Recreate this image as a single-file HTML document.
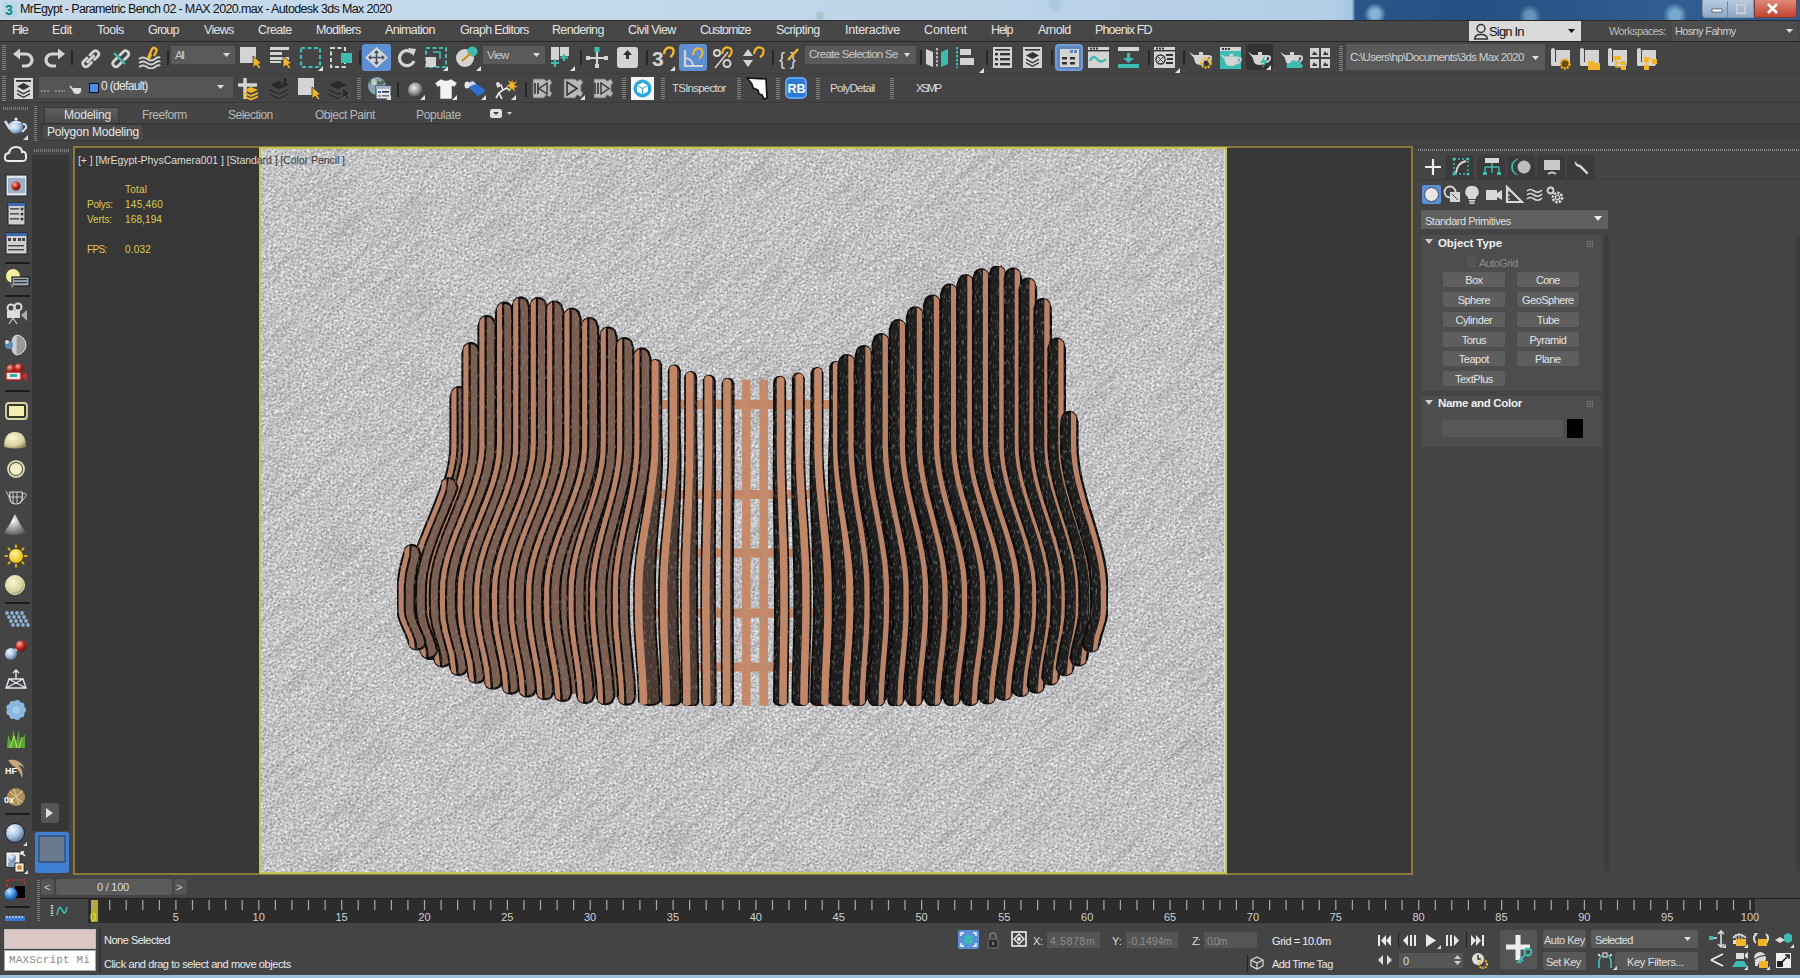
<!DOCTYPE html><html><head><meta charset="utf-8"><style>
html,body{margin:0;padding:0;width:1800px;height:978px;overflow:hidden;background:#444;}
body>div,body>svg{position:absolute;}
</style></head><body>
<div style="left:0;top:0;width:1800px;height:20px;background:linear-gradient(90deg,#c6daeb 0%,#c4d9eb 30%,#bdd4e9 55%,#b2cde6 74%,#a8c6e3 75.1%,#2a5588 75.3%,#255083 82%,#2f5d92 92%,#2e5a8c 100%)"></div>
<div style="left:1364px;top:3px;width:22px;height:22px;border-radius:50%;background:radial-gradient(closest-side,rgba(150,195,225,.85) 0%,rgba(150,195,225,.85) 40%,transparent 100%);clip-path:inset(0 0 5px 0)"></div>
<div style="left:1519px;top:5px;width:22px;height:22px;border-radius:50%;background:radial-gradient(closest-side,rgba(140,190,220,.6) 0%,rgba(140,190,220,.6) 40%,transparent 100%);clip-path:inset(0 0 7px 0)"></div>
<div style="left:1663px;top:3px;width:24px;height:24px;border-radius:50%;background:radial-gradient(closest-side,rgba(140,195,225,.75) 0%,rgba(140,195,225,.75) 40%,transparent 100%);clip-path:inset(0 0 7px 0)"></div>
<div style="left:1046px;top:-5px;width:18px;height:18px;border-radius:50%;background:radial-gradient(closest-side,rgba(120,160,200,.25) 0%,rgba(120,160,200,.25) 40%,transparent 100%);clip-path:inset(0 0 0px 0)"></div>
<div style="left:814px;top:10px;width:12px;height:12px;border-radius:50%;background:radial-gradient(closest-side,rgba(90,140,90,.25) 0%,rgba(90,140,90,.25) 40%,transparent 100%);clip-path:inset(0 0 2px 0)"></div>
<div style="left:1702px;top:0;width:52px;height:18px;border:1px solid #7f95ad;border-top:0;border-radius:0 0 0 4px;background:linear-gradient(#b8cbe0,#8ea8c6);box-sizing:border-box"></div>
<div style="left:1754px;top:0;width:43px;height:18px;border:1px solid #7a3b3b;border-top:0;border-radius:0 0 4px 0;background:linear-gradient(#e08a7a,#c2412e);box-sizing:border-box"></div>
<div style="left:1727px;top:1px;width:1px;height:16px;background:#6d83a0;"></div>
<svg style="left:1702px;top:0px;" width="95" height="18" viewBox="0 0 95 18"><rect x="10" y="9" width="10" height="3" fill="#fff" stroke="#334" stroke-width=".6"/><rect x="35" y="5" width="8" height="8" fill="none" stroke="#fff" stroke-width="2"/><rect x="35" y="5" width="8" height="8" fill="none" stroke="#334" stroke-width=".5"/><path d="M66 4 L75 13 M75 4 L66 13" stroke="#fff" stroke-width="2.6"/></svg>
<svg style="left:2px;top:1px;" width="16" height="18" viewBox="0 0 16 18"><rect x="1" y="1" width="14" height="16" fill="#b9d7e0"/><text x="3" y="14" font-family="Liberation Sans" font-weight="bold" font-size="14" fill="#0c8a8a">3</text></svg>
<div style="left:20px;top:3.42px;font:normal 12.5px/12.5px 'Liberation Sans',sans-serif;color:#111;letter-spacing:-0.644px;white-space:nowrap;">MrEgypt - Parametric Bench 02 - MAX 2020.max - Autodesk 3ds Max 2020</div>
<div style="left:0px;top:20px;width:1800px;height:21px;background:#474747;"></div>
<div style="left:0px;top:20px;width:1800px;height:1px;background:#2a2a2a;"></div>
<div style="left:0px;top:41px;width:1800px;height:1px;background:#262626;"></div>
<div style="left:12px;top:24.42px;font:normal 12.5px/12.5px 'Liberation Sans',sans-serif;color:#e4e4e4;letter-spacing:-1.184px;white-space:nowrap;">File</div>
<div style="left:52px;top:24.42px;font:normal 12.5px/12.5px 'Liberation Sans',sans-serif;color:#e4e4e4;letter-spacing:-0.440px;white-space:nowrap;">Edit</div>
<div style="left:97px;top:24.42px;font:normal 12.5px/12.5px 'Liberation Sans',sans-serif;color:#e4e4e4;letter-spacing:-0.485px;white-space:nowrap;">Tools</div>
<div style="left:148px;top:24.42px;font:normal 12.5px/12.5px 'Liberation Sans',sans-serif;color:#e4e4e4;letter-spacing:-0.832px;white-space:nowrap;">Group</div>
<div style="left:204px;top:24.42px;font:normal 12.5px/12.5px 'Liberation Sans',sans-serif;color:#e4e4e4;letter-spacing:-0.693px;white-space:nowrap;">Views</div>
<div style="left:258px;top:24.42px;font:normal 12.5px/12.5px 'Liberation Sans',sans-serif;color:#e4e4e4;letter-spacing:-0.640px;white-space:nowrap;">Create</div>
<div style="left:316px;top:24.42px;font:normal 12.5px/12.5px 'Liberation Sans',sans-serif;color:#e4e4e4;letter-spacing:-0.672px;white-space:nowrap;">Modifiers</div>
<div style="left:385px;top:24.42px;font:normal 12.5px/12.5px 'Liberation Sans',sans-serif;color:#e4e4e4;letter-spacing:-0.657px;white-space:nowrap;">Animation</div>
<div style="left:460px;top:24.42px;font:normal 12.5px/12.5px 'Liberation Sans',sans-serif;color:#e4e4e4;letter-spacing:-0.650px;white-space:nowrap;">Graph Editors</div>
<div style="left:552px;top:24.42px;font:normal 12.5px/12.5px 'Liberation Sans',sans-serif;color:#e4e4e4;letter-spacing:-0.668px;white-space:nowrap;">Rendering</div>
<div style="left:628px;top:24.42px;font:normal 12.5px/12.5px 'Liberation Sans',sans-serif;color:#e4e4e4;letter-spacing:-0.626px;white-space:nowrap;">Civil View</div>
<div style="left:700px;top:24.42px;font:normal 12.5px/12.5px 'Liberation Sans',sans-serif;color:#e4e4e4;letter-spacing:-0.947px;white-space:nowrap;">Customize</div>
<div style="left:776px;top:24.42px;font:normal 12.5px/12.5px 'Liberation Sans',sans-serif;color:#e4e4e4;letter-spacing:-0.545px;white-space:nowrap;">Scripting</div>
<div style="left:845px;top:24.42px;font:normal 12.5px/12.5px 'Liberation Sans',sans-serif;color:#e4e4e4;letter-spacing:-0.254px;white-space:nowrap;">Interactive</div>
<div style="left:924px;top:24.42px;font:normal 12.5px/12.5px 'Liberation Sans',sans-serif;color:#e4e4e4;letter-spacing:-0.120px;white-space:nowrap;">Content</div>
<div style="left:991px;top:24.42px;font:normal 12.5px/12.5px 'Liberation Sans',sans-serif;color:#e4e4e4;letter-spacing:-1.060px;white-space:nowrap;">Help</div>
<div style="left:1038px;top:24.42px;font:normal 12.5px/12.5px 'Liberation Sans',sans-serif;color:#e4e4e4;letter-spacing:-0.570px;white-space:nowrap;">Arnold</div>
<div style="left:1095px;top:24.42px;font:normal 12.5px/12.5px 'Liberation Sans',sans-serif;color:#e4e4e4;letter-spacing:-0.875px;white-space:nowrap;">Phoenix FD</div>
<div style="left:1469px;top:21px;width:112px;height:20px;background:#d9d9d9;"></div>
<svg style="left:1473px;top:23px;" width="16" height="17" viewBox="0 0 16 17"><circle cx="8" cy="5.5" r="4" fill="none" stroke="#333" stroke-width="1.4"/><path d="M1.5 16 C2 10 14 10 14.5 16 Z" fill="none" stroke="#333" stroke-width="1.4"/></svg>
<div style="left:1489px;top:25.00px;font:normal 13px/13px 'Liberation Sans',sans-serif;color:#111;letter-spacing:-0.842px;white-space:nowrap;">Sign In</div>
<svg style="left:1568px;top:29px;" width="8" height="5" viewBox="0 0 8 5"><path d="M0 0 L7 0 L3.5 4 Z" fill="#111"/></svg>
<div style="left:1609px;top:25.69px;font:normal 11px/11px 'Liberation Sans',sans-serif;color:#bdbdbd;letter-spacing:-0.607px;white-space:nowrap;">Workspaces:</div>
<div style="left:1672px;top:21px;width:125px;height:20px;background:#4d4d4d;"></div>
<div style="left:1675px;top:25.69px;font:normal 11px/11px 'Liberation Sans',sans-serif;color:#cfcfcf;letter-spacing:-0.653px;white-space:nowrap;">Hosny Fahmy</div>
<svg style="left:1786px;top:29px;" width="8" height="5" viewBox="0 0 8 5"><path d="M0 0 L7 0 L3.5 4 Z" fill="#ddd"/></svg>
<div style="left:0px;top:42px;width:1800px;height:61px;background:#444444;"></div>
<div style="left:0px;top:73px;width:1800px;height:1px;background:#3e3e3e;"></div>
<div style="left:0px;top:102px;width:1800px;height:1px;background:#3a3a3a;"></div>
<div style="left:171px;top:46px;width:64px;height:18px;background:#5a5a5a;"></div>
<div style="left:175px;top:50.27px;font:normal 11.5px/11.5px 'Liberation Sans',sans-serif;color:#c8c8c8;letter-spacing:-1.512px;white-space:nowrap;">All</div>
<svg style="left:223px;top:53px;" width="8" height="5" viewBox="0 0 8 5"><path d="M0 0 L7 0 L3.5 4 Z" fill="#ddd"/></svg>
<div style="left:483px;top:46px;width:62px;height:18px;background:#5a5a5a;"></div>
<div style="left:487px;top:50.27px;font:normal 11.5px/11.5px 'Liberation Sans',sans-serif;color:#c8c8c8;letter-spacing:-0.777px;white-space:nowrap;">View</div>
<svg style="left:533px;top:53px;" width="8" height="5" viewBox="0 0 8 5"><path d="M0 0 L7 0 L3.5 4 Z" fill="#ddd"/></svg>
<div style="left:805px;top:46px;width:111px;height:18px;background:#5a5a5a;"></div>
<div style="left:809px;top:49.27px;font:normal 11.5px/11.5px 'Liberation Sans',sans-serif;color:#c8c8c8;letter-spacing:-0.718px;white-space:nowrap;">Create Selection Se</div>
<svg style="left:904px;top:53px;" width="7" height="5" viewBox="0 0 7 5"><path d="M0 0 L6 0 L3 4 Z" fill="#ddd"/></svg>
<div style="left:1346px;top:44px;width:199px;height:26px;background:#5a5a5a;"></div>
<div style="left:1350px;top:52.27px;font:normal 11.5px/11.5px 'Liberation Sans',sans-serif;color:#d0d0d0;letter-spacing:-0.702px;white-space:nowrap;">C:\Users\hp\Documents\3ds Max 2020</div>
<svg style="left:1532px;top:56px;" width="8" height="5" viewBox="0 0 8 5"><path d="M0 0 L7 0 L3.5 4 Z" fill="#ddd"/></svg>
<div style="left:39px;top:77px;width:194px;height:21px;background:#555555;"></div>
<div style="left:101px;top:79.84px;font:normal 12px/12px 'Liberation Sans',sans-serif;color:#e8e8e8;letter-spacing:-0.670px;white-space:nowrap;">0 (default)</div>
<svg style="left:217px;top:85px;" width="8" height="5" viewBox="0 0 8 5"><path d="M0 0 L7 0 L3.5 4 Z" fill="#ddd"/></svg>
<div style="left:672px;top:83.27px;font:normal 11.5px/11.5px 'Liberation Sans',sans-serif;color:#d8d8d8;letter-spacing:-0.762px;white-space:nowrap;">TSInspector</div>
<div style="left:830px;top:83.27px;font:normal 11.5px/11.5px 'Liberation Sans',sans-serif;color:#d8d8d8;letter-spacing:-0.713px;white-space:nowrap;">PolyDetail</div>
<div style="left:916px;top:83.27px;font:normal 11.5px/11.5px 'Liberation Sans',sans-serif;color:#d8d8d8;letter-spacing:-2.169px;white-space:nowrap;">XSMP</div>
<div style="left:40px;top:103px;width:1760px;height:20px;background:#454545;"></div>
<div style="left:40px;top:123px;width:1760px;height:1px;background:#333;"></div>
<div style="left:44px;top:107px;width:75px;height:16px;background:linear-gradient(#5e5e5e,#4a4a4a);border:1px solid #393939;border-bottom:0;box-sizing:border-box"></div>
<div style="left:64px;top:108.84px;font:normal 12px/12px 'Liberation Sans',sans-serif;color:#e0e0e0;letter-spacing:-0.227px;white-space:nowrap;">Modeling</div>
<div style="left:142px;top:108.84px;font:normal 12px/12px 'Liberation Sans',sans-serif;color:#b8b8b8;letter-spacing:-0.490px;white-space:nowrap;">Freeform</div>
<div style="left:228px;top:108.84px;font:normal 12px/12px 'Liberation Sans',sans-serif;color:#b8b8b8;letter-spacing:-0.514px;white-space:nowrap;">Selection</div>
<div style="left:315px;top:108.84px;font:normal 12px/12px 'Liberation Sans',sans-serif;color:#b8b8b8;letter-spacing:-0.467px;white-space:nowrap;">Object Paint</div>
<div style="left:416px;top:108.84px;font:normal 12px/12px 'Liberation Sans',sans-serif;color:#b8b8b8;letter-spacing:-0.317px;white-space:nowrap;">Populate</div>
<svg style="left:490px;top:109px;" width="24" height="10" viewBox="0 0 24 10"><rect x="0" y="0" width="12" height="9" rx="2" fill="#e0e0e0"/><path d="M3 3 H9 L6 6 Z" fill="#444"/><path d="M17 3 H22 L19.5 6 Z" fill="#ccc"/></svg>
<div style="left:40px;top:124px;width:1760px;height:18px;background:#3f3f3f;"></div>
<div style="left:42px;top:124px;width:102px;height:17px;background:#4a4a4a;border:1px solid #3a3a3a;box-sizing:border-box"></div>
<div style="left:47px;top:125.84px;font:normal 12px/12px 'Liberation Sans',sans-serif;color:#e6e6e6;letter-spacing:-0.219px;white-space:nowrap;">Polygon Modeling</div>
<div style="left:0px;top:141px;width:1800px;height:6px;background:#424242;"></div>
<div style="left:0px;top:103px;width:32px;height:822px;background:#444444;"></div>
<div style="left:32px;top:141px;width:41px;height:735px;background:#444;"></div>
<div style="left:32px;top:155px;width:37px;height:676px;background:#363636;"></div>
<div style="left:41px;top:803px;width:18px;height:20px;background:#555;border-radius:3px"></div>
<svg style="left:46px;top:808px;" width="8" height="10" viewBox="0 0 8 10"><path d="M0 0 L7 5 L0 10 Z" fill="#ddd"/></svg>
<div style="left:35px;top:832px;width:34px;height:41px;background:#3e7fd4;border-radius:3px"></div>
<div style="left:38px;top:835px;width:28px;height:28px;background:#6a7a8e;border:2px solid #3b5b86;box-sizing:border-box"></div>
<div style="left:73px;top:146px;width:1340px;height:729px;background:#373737;border:2px solid #8a7a3a;box-sizing:border-box"></div>
<svg style="left:259px;top:147px" width="968" height="727" viewBox="259 147 968 727">
<defs>
<filter id="nz" x="0" y="0" width="1" height="1" filterUnits="objectBoundingBox" color-interpolation-filters="sRGB">
<feTurbulence type="fractalNoise" baseFrequency="0.42 0.55" numOctaves="2" seed="7"/>
<feColorMatrix type="matrix" values="0.8 0 0 0 0.375  0.8 0 0 0 0.375  0.8 0 0 0 0.385  0 0 0 0 1"/>
</filter>
<filter id="nz2" x="0" y="0" width="1" height="1" filterUnits="objectBoundingBox" color-interpolation-filters="sRGB">
<feTurbulence type="fractalNoise" baseFrequency="0.018 0.13" numOctaves="2" seed="11"/>
<feColorMatrix type="matrix" values="0 0 0 0 0.35  0 0 0 0 0.35  0 0 0 0 0.35  0.45 0 0 0 -0.2"/>
</filter>
<filter id="grain" x="0" y="0" width="1" height="1" filterUnits="objectBoundingBox" color-interpolation-filters="sRGB">
<feTurbulence type="fractalNoise" baseFrequency="0.25 0.6" numOctaves="2" seed="3"/>
<feColorMatrix type="matrix" values="0 0 0 0 0.6  0 0 0 0 0.6  0 0 0 0 0.6  1.2 0 0 0 -0.62"/>
</filter>
<filter id="ptex" x="0" y="0" width="1" height="1" filterUnits="objectBoundingBox" color-interpolation-filters="sRGB">
<feTurbulence type="fractalNoise" baseFrequency="0.45 0.2" numOctaves="2" seed="9" result="t"/>
<feColorMatrix in="t" type="matrix" values="0 0 0 0 0.55  0 0 0 0 0.55  0 0 0 0 0.55  2.0 0 0 0 -1.08" result="spk"/>
<feComposite in="spk" in2="SourceAlpha" operator="in" result="spk2"/>
<feMerge><feMergeNode in="SourceGraphic"/><feMergeNode in="spk2"/></feMerge>
</filter>
<clipPath id="vc"><rect x="261" y="149" width="963" height="723"/></clipPath>
</defs>
<rect x="259" y="147" width="968" height="727" fill="#d6d6d6"/>
<g clip-path="url(#vc)"><g transform="rotate(-30 743 510)">
<rect x="-100" y="-300" width="1700" height="1600" filter="url(#nz)"/>
</g><g transform="rotate(-42 743 510)">
<rect x="-100" y="-300" width="1700" height="1600" filter="url(#nz2)"/>
</g></g>
<g filter="url(#ptex)">
<rect x="655" y="400.0" width="185" height="9" fill="#c48766"/>
<rect x="655" y="490.0" width="185" height="9" fill="#c48766"/>
<rect x="655" y="548.5" width="185" height="9" fill="#c48766"/>
<rect x="655" y="608.5" width="185" height="9" fill="#c48766"/>
<rect x="655" y="662.5" width="185" height="9" fill="#c48766"/>
<rect x="742" y="379.6" width="8.6" height="326" fill="#c88a68"/>
<rect x="759.4" y="379.6" width="8.6" height="326" fill="#c88a68"/>
<path d="M650.2,365.0 L650.2,365.0 L651.6,361.7 L653.0,360.7 L654.3,360.2 L655.7,360.0 L657.1,360.2 L658.5,360.7 L659.8,361.7 L661.2,365.0 L661.2,377.0 L661.2,389.0 L661.2,401.0 L661.2,413.1 L661.2,425.1 L661.5,437.1 L661.9,449.1 L662.0,461.1 L661.7,473.1 L661.2,485.1 L660.4,497.2 L659.5,509.2 L658.5,521.2 L657.5,533.2 L656.5,545.2 L655.8,557.2 L655.2,569.2 L655.0,581.3 L655.1,593.3 L655.1,605.3 L655.2,617.3 L655.6,629.3 L656.3,641.3 L657.2,653.3 L658.1,665.4 L659.0,677.4 L659.6,689.4 L659.9,701.4 L659.9,701.4 L657.3,703.7 L654.7,704.4 L652.0,704.8 L649.4,704.9 L646.8,704.8 L644.2,704.4 L641.5,703.7 L638.9,701.4 L638.6,689.4 L638.0,677.4 L637.1,665.4 L636.2,653.3 L635.3,641.3 L634.6,629.3 L634.2,617.3 L634.1,605.3 L634.1,593.3 L634.3,581.3 L635.0,569.2 L636.2,557.2 L637.8,545.2 L639.6,533.2 L641.5,521.2 L643.5,509.2 L645.5,497.2 L647.2,485.1 L648.6,473.1 L649.6,461.1 L650.2,449.1 L650.2,437.1 L650.2,425.1 L650.2,413.1 L650.2,401.0 L650.2,389.0 L650.2,377.0 L650.2,365.0 Z" fill="#4a3a32" stroke="#0e0b0a" stroke-width="2"/>
<path d="M650.9,365.0 L650.9,362.3 L651.9,361.1 L652.8,360.5 L653.8,360.1 L654.7,360.0 L655.6,360.1 L656.6,360.5 L657.5,361.1 L658.5,362.3 L658.5,377.0 L658.5,389.0 L658.5,401.0 L658.5,413.1 L658.5,425.1 L658.5,437.1 L658.4,449.1 L657.9,461.1 L656.9,473.1 L655.5,485.1 L653.7,497.2 L651.8,509.2 L649.8,521.2 L647.9,533.2 L646.0,545.2 L644.5,557.2 L643.3,569.2 L642.6,581.3 L642.4,593.3 L642.4,605.3 L642.5,617.3 L642.9,629.3 L643.6,641.3 L644.5,653.3 L645.4,665.4 L646.2,677.4 L646.9,689.4 L647.2,701.4 L647.2,703.3 L646.2,704.1 L645.3,704.6 L644.4,704.8 L643.4,704.9 L642.5,704.8 L641.5,704.6 L640.6,704.1 L639.6,703.3 L639.3,689.4 L638.7,677.4 L637.8,665.4 L636.9,653.3 L636.1,641.3 L635.3,629.3 L634.9,617.3 L634.8,605.3 L634.8,593.3 L635.0,581.3 L635.7,569.2 L636.9,557.2 L638.5,545.2 L640.3,533.2 L642.3,521.2 L644.3,509.2 L646.2,497.2 L647.9,485.1 L649.3,473.1 L650.4,461.1 L650.9,449.1 L650.9,437.1 L650.9,425.1 L650.9,413.1 L650.9,401.0 L650.9,389.0 L650.9,377.0 L650.9,365.0 Z" fill="#c48766"/>
<path d="M668.8,370.5 L668.8,370.5 L670.2,367.2 L671.5,366.2 L672.9,365.7 L674.3,365.5 L675.7,365.7 L677.0,366.2 L678.4,367.2 L679.8,370.5 L679.8,382.3 L679.8,394.2 L679.8,406.0 L679.8,417.8 L679.9,429.7 L680.1,441.5 L680.4,453.3 L680.5,465.2 L680.4,477.0 L680.1,488.8 L679.8,500.7 L679.3,512.5 L678.9,524.3 L678.4,536.2 L678.0,548.0 L677.7,559.8 L677.5,571.7 L677.5,583.5 L677.6,595.3 L677.6,607.2 L677.6,619.0 L677.9,630.8 L678.4,642.7 L678.9,654.5 L679.4,666.3 L679.9,678.2 L680.3,690.0 L680.5,701.8 L680.5,701.8 L678.2,704.2 L675.9,704.9 L673.5,705.2 L671.2,705.3 L668.9,705.2 L666.6,704.9 L664.3,704.2 L662.0,701.8 L661.8,690.0 L661.4,678.2 L660.9,666.3 L660.4,654.5 L659.9,642.7 L659.4,630.8 L659.1,619.0 L659.1,607.2 L659.1,595.3 L659.1,583.5 L659.5,571.7 L660.2,559.8 L661.0,548.0 L662.1,536.2 L663.3,524.3 L664.4,512.5 L665.6,500.7 L666.7,488.8 L667.6,477.0 L668.3,465.2 L668.7,453.3 L668.8,441.5 L668.8,429.7 L668.8,417.8 L668.8,406.0 L668.8,394.2 L668.8,382.3 L668.8,370.5 Z" fill="#4a3a32" stroke="#0e0b0a" stroke-width="2"/>
<path d="M669.5,370.5 L669.5,367.8 L670.5,366.6 L671.4,366.0 L672.4,365.6 L673.3,365.5 L674.2,365.6 L675.2,366.0 L676.1,366.6 L677.1,367.8 L677.1,382.3 L677.1,394.2 L677.1,406.0 L677.1,417.8 L677.1,429.7 L677.1,441.5 L677.0,453.3 L676.6,465.2 L675.9,477.0 L675.0,488.8 L673.9,500.7 L672.7,512.5 L671.5,524.3 L670.4,536.2 L669.3,548.0 L668.4,559.8 L667.8,571.7 L667.4,583.5 L667.4,595.3 L667.4,607.2 L667.4,619.0 L667.7,630.8 L668.1,642.7 L668.7,654.5 L669.2,666.3 L669.7,678.2 L670.1,690.0 L670.3,701.8 L670.3,703.7 L669.3,704.6 L668.4,705.0 L667.4,705.3 L666.5,705.3 L665.5,705.3 L664.6,705.0 L663.6,704.6 L662.7,703.7 L662.5,690.0 L662.1,678.2 L661.6,666.3 L661.1,654.5 L660.6,642.7 L660.2,630.8 L659.9,619.0 L659.8,607.2 L659.8,595.3 L659.9,583.5 L660.2,571.7 L660.9,559.8 L661.8,548.0 L662.8,536.2 L664.0,524.3 L665.2,512.5 L666.3,500.7 L667.4,488.8 L668.3,477.0 L669.0,465.2 L669.4,453.3 L669.5,441.5 L669.5,429.7 L669.5,417.8 L669.5,406.0 L669.5,394.2 L669.5,382.3 L669.5,370.5 Z" fill="#c48766"/>
<path d="M685.2,377.0 L685.2,377.0 L686.6,373.7 L688.0,372.7 L689.3,372.2 L690.7,372.0 L692.1,372.2 L693.5,372.7 L694.8,373.7 L696.2,377.0 L696.2,388.6 L696.2,400.2 L696.2,411.8 L696.2,423.5 L696.3,435.1 L696.5,446.7 L696.7,458.3 L696.8,469.9 L696.9,481.5 L696.9,493.2 L697.0,504.8 L697.0,516.4 L696.9,528.0 L696.9,539.6 L696.9,551.2 L696.9,562.9 L697.0,574.5 L697.0,586.1 L697.1,597.7 L697.1,609.3 L697.1,620.9 L697.3,632.5 L697.5,644.2 L697.7,655.8 L697.9,667.4 L698.1,679.0 L698.2,690.6 L698.3,702.2 L698.3,702.2 L696.3,704.6 L694.3,705.3 L692.3,705.6 L690.3,705.7 L688.3,705.6 L686.3,705.3 L684.3,704.6 L682.3,702.2 L682.2,690.6 L682.1,679.0 L681.9,667.4 L681.7,655.8 L681.5,644.2 L681.3,632.5 L681.1,620.9 L681.1,609.3 L681.1,597.7 L681.1,586.1 L681.2,574.5 L681.5,562.9 L681.8,551.2 L682.2,539.6 L682.7,528.0 L683.2,516.4 L683.7,504.8 L684.1,493.2 L684.5,481.5 L684.9,469.9 L685.1,458.3 L685.2,446.7 L685.2,435.1 L685.2,423.5 L685.2,411.8 L685.2,400.2 L685.2,388.6 L685.2,377.0 Z" fill="#4a3a32" stroke="#0e0b0a" stroke-width="2"/>
<path d="M685.9,377.0 L685.9,374.3 L686.9,373.1 L687.8,372.5 L688.8,372.1 L689.7,372.0 L690.6,372.1 L691.6,372.5 L692.5,373.1 L693.5,374.3 L693.5,388.6 L693.5,400.2 L693.5,411.8 L693.5,423.5 L693.5,435.1 L693.5,446.7 L693.4,458.3 L693.2,469.9 L692.8,481.5 L692.4,493.2 L692.0,504.8 L691.5,516.4 L691.0,528.0 L690.5,539.6 L690.1,551.2 L689.8,562.9 L689.5,574.5 L689.4,586.1 L689.4,597.7 L689.4,609.3 L689.4,620.9 L689.5,632.5 L689.7,644.2 L690.0,655.8 L690.2,667.4 L690.4,679.0 L690.5,690.6 L690.6,702.2 L690.6,704.1 L689.7,705.0 L688.7,705.4 L687.8,705.7 L686.8,705.7 L685.9,705.7 L684.9,705.4 L684.0,705.0 L683.0,704.1 L683.0,690.6 L682.8,679.0 L682.6,667.4 L682.4,655.8 L682.2,644.2 L682.0,632.5 L681.9,620.9 L681.8,609.3 L681.8,597.7 L681.8,586.1 L681.9,574.5 L682.2,562.9 L682.5,551.2 L683.0,539.6 L683.4,528.0 L683.9,516.4 L684.4,504.8 L684.9,493.2 L685.3,481.5 L685.6,469.9 L685.8,458.3 L685.9,446.7 L685.9,435.1 L685.9,423.5 L685.9,411.8 L685.9,400.2 L685.9,388.6 L685.9,377.0 Z" fill="#c48766"/>
<path d="M703.8,380.7 L703.8,380.7 L705.2,377.4 L706.5,376.4 L707.9,375.9 L709.3,375.7 L710.7,375.9 L712.0,376.4 L713.4,377.4 L714.8,380.7 L714.8,392.2 L714.8,403.7 L714.8,415.2 L714.8,426.7 L714.9,438.2 L715.0,449.6 L715.1,461.1 L715.1,472.6 L715.1,484.1 L715.1,495.6 L715.1,507.1 L715.0,518.6 L715.0,530.1 L714.9,541.6 L714.9,553.1 L714.9,564.5 L714.9,576.0 L714.9,587.5 L714.9,599.0 L714.9,610.5 L715.0,622.0 L715.0,633.5 L715.1,645.0 L715.3,656.5 L715.4,668.0 L715.5,679.4 L715.6,690.9 L715.6,702.4 L715.6,702.4 L713.9,704.7 L712.3,705.5 L710.6,705.8 L708.9,705.9 L707.2,705.8 L705.5,705.5 L703.8,704.7 L702.1,702.4 L702.1,690.9 L702.0,679.4 L701.9,668.0 L701.8,656.5 L701.6,645.0 L701.5,633.5 L701.5,622.0 L701.4,610.5 L701.4,599.0 L701.4,587.5 L701.5,576.0 L701.6,564.5 L701.8,553.1 L702.0,541.6 L702.3,530.1 L702.6,518.6 L702.9,507.1 L703.1,495.6 L703.4,484.1 L703.6,472.6 L703.7,461.1 L703.8,449.6 L703.8,438.2 L703.8,426.7 L703.8,415.2 L703.8,403.7 L703.8,392.2 L703.8,380.7 Z" fill="#4a3a32" stroke="#0e0b0a" stroke-width="2"/>
<path d="M704.5,380.7 L704.5,378.0 L705.5,376.8 L706.4,376.2 L707.4,375.8 L708.3,375.7 L709.2,375.8 L710.2,376.2 L711.1,376.8 L712.1,378.0 L712.1,392.2 L712.1,403.7 L712.1,415.2 L712.1,426.7 L712.1,438.2 L712.1,449.6 L712.0,461.1 L711.9,472.6 L711.7,484.1 L711.4,495.6 L711.1,507.1 L710.9,518.6 L710.6,530.1 L710.3,541.6 L710.1,553.1 L709.9,564.5 L709.8,576.0 L709.7,587.5 L709.7,599.0 L709.7,610.5 L709.7,622.0 L709.8,633.5 L709.9,645.0 L710.0,656.5 L710.2,668.0 L710.3,679.4 L710.4,690.9 L710.4,702.4 L710.4,704.3 L709.5,705.1 L708.5,705.6 L707.6,705.8 L706.6,705.9 L705.7,705.8 L704.7,705.6 L703.8,705.1 L702.9,704.3 L702.8,690.9 L702.7,679.4 L702.6,668.0 L702.5,656.5 L702.4,645.0 L702.3,633.5 L702.2,622.0 L702.1,610.5 L702.1,599.0 L702.1,587.5 L702.2,576.0 L702.3,564.5 L702.5,553.1 L702.8,541.6 L703.0,530.1 L703.3,518.6 L703.6,507.1 L703.9,495.6 L704.1,484.1 L704.3,472.6 L704.4,461.1 L704.5,449.6 L704.5,438.2 L704.5,426.7 L704.5,415.2 L704.5,403.7 L704.5,392.2 L704.5,380.7 Z" fill="#c48766"/>
<path d="M722.5,383.8 L722.5,383.8 L723.9,380.5 L725.2,379.5 L726.6,379.0 L728.0,378.8 L729.4,379.0 L730.8,379.5 L732.1,380.5 L733.5,383.8 L733.5,395.2 L733.5,406.5 L733.5,417.9 L733.5,429.3 L733.5,440.7 L733.5,452.0 L733.5,463.4 L733.4,474.8 L733.4,486.1 L733.3,497.5 L733.2,508.9 L733.1,520.3 L733.0,531.6 L733.0,543.0 L732.9,554.4 L732.8,565.7 L732.8,577.1 L732.8,588.5 L732.8,599.9 L732.8,611.2 L732.8,622.6 L732.8,634.0 L732.9,645.3 L732.9,656.7 L732.9,668.1 L733.0,679.5 L733.0,690.8 L733.0,702.2 L733.0,702.2 L731.6,704.5 L730.3,705.2 L728.9,705.6 L727.5,705.7 L726.1,705.6 L724.8,705.2 L723.4,704.5 L722.0,702.2 L722.0,690.8 L722.0,679.5 L721.9,668.1 L721.9,656.7 L721.9,645.3 L721.8,634.0 L721.8,622.6 L721.8,611.2 L721.8,599.9 L721.8,588.5 L721.8,577.1 L721.8,565.7 L721.9,554.4 L722.0,543.0 L722.0,531.6 L722.1,520.3 L722.2,508.9 L722.3,497.5 L722.4,486.1 L722.4,474.8 L722.5,463.4 L722.5,452.0 L722.5,440.7 L722.5,429.3 L722.5,417.9 L722.5,406.5 L722.5,395.2 L722.5,383.8 Z" fill="#4a3a32" stroke="#0e0b0a" stroke-width="2"/>
<path d="M723.2,383.8 L723.2,381.1 L724.2,379.9 L725.1,379.3 L726.1,378.9 L727.0,378.8 L727.9,378.9 L728.9,379.3 L729.8,379.9 L730.8,381.1 L730.8,395.2 L730.8,406.5 L730.8,417.9 L730.8,429.3 L730.8,440.7 L730.8,452.0 L730.7,463.4 L730.7,474.8 L730.6,486.1 L730.6,497.5 L730.5,508.9 L730.4,520.3 L730.3,531.6 L730.2,543.0 L730.2,554.4 L730.1,565.7 L730.1,577.1 L730.1,588.5 L730.1,599.9 L730.1,611.2 L730.1,622.6 L730.1,634.0 L730.1,645.3 L730.2,656.7 L730.2,668.1 L730.2,679.5 L730.3,690.8 L730.3,702.2 L730.3,704.1 L729.3,704.9 L728.4,705.4 L727.4,705.6 L726.5,705.7 L725.6,705.6 L724.6,705.4 L723.7,704.9 L722.7,704.1 L722.7,690.8 L722.7,679.5 L722.6,668.1 L722.6,656.7 L722.6,645.3 L722.5,634.0 L722.5,622.6 L722.5,611.2 L722.5,599.9 L722.5,588.5 L722.5,577.1 L722.6,565.7 L722.6,554.4 L722.7,543.0 L722.8,531.6 L722.8,520.3 L722.9,508.9 L723.0,497.5 L723.1,486.1 L723.1,474.8 L723.2,463.4 L723.2,452.0 L723.2,440.7 L723.2,429.3 L723.2,417.9 L723.2,406.5 L723.2,395.2 L723.2,383.8 Z" fill="#c48766"/>
<path d="M774.1,381.8 L774.1,381.8 L775.5,378.5 L776.9,377.5 L778.2,377.0 L779.6,376.8 L781.0,377.0 L782.4,377.5 L783.7,378.5 L785.1,381.8 L785.1,393.2 L785.1,404.6 L785.1,416.1 L785.1,427.5 L785.1,438.9 L785.1,450.3 L785.2,461.7 L785.4,473.2 L785.7,484.6 L786.1,496.0 L786.5,507.4 L786.9,518.8 L787.3,530.3 L787.6,541.7 L788.0,553.1 L788.3,564.5 L788.4,575.9 L788.5,587.4 L788.5,598.8 L788.5,610.2 L788.5,621.6 L788.4,633.0 L788.2,644.5 L788.0,655.9 L787.9,667.3 L787.7,678.7 L787.6,690.1 L787.5,701.6 L787.5,701.6 L785.8,703.9 L784.1,704.6 L782.4,704.9 L780.8,705.1 L779.1,704.9 L777.4,704.6 L775.7,703.9 L774.0,701.6 L774.1,690.1 L774.2,678.7 L774.4,667.3 L774.5,655.9 L774.7,644.5 L774.9,633.0 L775.0,621.6 L775.0,610.2 L775.0,598.8 L775.0,587.4 L774.9,575.9 L774.8,564.5 L774.7,553.1 L774.5,541.7 L774.3,530.3 L774.2,518.8 L774.0,507.4 L773.9,496.0 L773.8,484.6 L773.8,473.2 L773.8,461.7 L773.9,450.3 L774.0,438.9 L774.1,427.5 L774.1,416.1 L774.1,404.6 L774.1,393.2 L774.1,381.8 Z" fill="#1e1d1d" stroke="#0e0b0a" stroke-width="2"/>
<path d="M776.8,381.8 L776.8,379.1 L777.8,377.9 L778.7,377.3 L779.7,376.9 L780.6,376.8 L781.5,376.9 L782.5,377.3 L783.4,377.9 L784.4,379.1 L784.4,393.2 L784.4,404.6 L784.4,416.1 L784.4,427.5 L784.4,438.9 L784.4,450.3 L784.5,461.7 L784.7,473.2 L785.0,484.6 L785.4,496.0 L785.7,507.4 L786.1,518.8 L786.5,530.3 L786.9,541.7 L787.3,553.1 L787.5,564.5 L787.7,575.9 L787.8,587.4 L787.8,598.8 L787.8,610.2 L787.8,621.6 L787.7,633.0 L787.5,644.5 L787.3,655.9 L787.1,667.3 L787.0,678.7 L786.9,690.1 L786.8,701.6 L786.8,703.5 L785.8,704.3 L784.9,704.7 L784.0,705.0 L783.0,705.1 L782.1,705.0 L781.1,704.7 L780.2,704.3 L779.2,703.5 L779.3,690.1 L779.4,678.7 L779.6,667.3 L779.8,655.9 L779.9,644.5 L780.1,633.0 L780.2,621.6 L780.3,610.2 L780.3,598.8 L780.2,587.4 L780.2,575.9 L780.0,564.5 L779.7,553.1 L779.4,541.7 L779.0,530.3 L778.6,518.8 L778.2,507.4 L777.8,496.0 L777.4,484.6 L777.2,473.2 L776.9,461.7 L776.8,450.3 L776.8,438.9 L776.8,427.5 L776.8,416.1 L776.8,404.6 L776.8,393.2 L776.8,381.8 Z" fill="#c48766"/>
<path d="M792.8,378.6 L792.8,378.6 L794.2,375.3 L795.5,374.3 L796.9,373.8 L798.3,373.6 L799.7,373.8 L801.0,374.3 L802.4,375.3 L803.8,378.6 L803.8,390.1 L803.8,401.7 L803.8,413.2 L803.8,424.8 L803.8,436.3 L803.8,447.8 L804.0,459.4 L804.4,470.9 L804.9,482.4 L805.6,494.0 L806.3,505.5 L807.1,517.1 L807.9,528.6 L808.6,540.1 L809.3,551.7 L809.9,563.2 L810.2,574.7 L810.4,586.3 L810.4,597.8 L810.4,609.4 L810.4,620.9 L810.2,632.4 L809.9,644.0 L809.5,655.5 L809.2,667.1 L808.8,678.6 L808.6,690.1 L808.5,701.7 L808.5,701.7 L806.5,704.0 L804.5,704.7 L802.5,705.1 L800.5,705.2 L798.5,705.1 L796.5,704.7 L794.5,704.0 L792.5,701.7 L792.6,690.1 L792.8,678.6 L793.2,667.1 L793.5,655.5 L793.9,644.0 L794.2,632.4 L794.4,620.9 L794.4,609.4 L794.4,597.8 L794.4,586.3 L794.3,574.7 L794.0,563.2 L793.7,551.7 L793.4,540.1 L793.1,528.6 L792.8,517.1 L792.5,505.5 L792.3,494.0 L792.2,482.4 L792.2,470.9 L792.2,459.4 L792.4,447.8 L792.7,436.3 L792.8,424.8 L792.8,413.2 L792.8,401.7 L792.8,390.1 L792.8,378.6 Z" fill="#1e1d1d" stroke="#0e0b0a" stroke-width="2"/>
<path d="M795.5,378.6 L795.5,375.9 L796.5,374.7 L797.4,374.1 L798.4,373.7 L799.3,373.6 L800.2,373.7 L801.2,374.1 L802.1,374.7 L803.1,375.9 L803.1,390.1 L803.1,401.7 L803.1,413.2 L803.1,424.8 L803.1,436.3 L803.1,447.8 L803.3,459.4 L803.6,470.9 L804.2,482.4 L804.8,494.0 L805.6,505.5 L806.4,517.1 L807.2,528.6 L807.9,540.1 L808.6,551.7 L809.1,563.2 L809.5,574.7 L809.7,586.3 L809.7,597.8 L809.7,609.4 L809.7,620.9 L809.4,632.4 L809.1,644.0 L808.8,655.5 L808.4,667.1 L808.1,678.6 L807.9,690.1 L807.7,701.7 L807.7,703.6 L806.8,704.4 L805.9,704.8 L804.9,705.1 L804.0,705.2 L803.0,705.1 L802.1,704.8 L801.1,704.4 L800.2,703.6 L800.3,690.1 L800.6,678.6 L800.9,667.1 L801.2,655.5 L801.6,644.0 L801.9,632.4 L802.1,620.9 L802.2,609.4 L802.2,597.8 L802.2,586.3 L802.0,574.7 L801.6,563.2 L801.0,551.7 L800.4,540.1 L799.6,528.6 L798.8,517.1 L798.0,505.5 L797.3,494.0 L796.6,482.4 L796.1,470.9 L795.7,459.4 L795.5,447.8 L795.5,436.3 L795.5,424.8 L795.5,413.2 L795.5,401.7 L795.5,390.1 L795.5,378.6 Z" fill="#c48766"/>
<path d="M811.5,373.0 L811.5,373.0 L812.9,369.7 L814.2,368.7 L815.6,368.2 L817.0,368.0 L818.4,368.2 L819.8,368.7 L821.1,369.7 L822.5,373.0 L822.5,384.7 L822.5,396.5 L822.5,408.2 L822.5,420.0 L822.5,431.7 L822.5,443.5 L822.6,455.2 L823.1,467.0 L823.9,478.7 L824.8,490.5 L825.9,502.2 L827.1,514.0 L828.3,525.7 L829.5,537.4 L830.5,549.2 L831.4,560.9 L832.1,572.7 L832.4,584.4 L832.5,596.2 L832.5,607.9 L832.4,619.7 L832.1,631.4 L831.6,643.2 L831.1,654.9 L830.6,666.6 L830.1,678.4 L829.7,690.1 L829.5,701.9 L829.5,701.9 L827.2,704.2 L824.9,704.9 L822.6,705.3 L820.2,705.4 L817.9,705.3 L815.6,704.9 L813.3,704.2 L811.0,701.9 L811.2,690.1 L811.6,678.4 L812.1,666.6 L812.6,654.9 L813.1,643.2 L813.6,631.4 L813.9,619.7 L814.0,607.9 L814.0,596.2 L813.9,584.4 L813.6,572.7 L813.2,560.9 L812.8,549.2 L812.3,537.4 L811.8,525.7 L811.4,514.0 L811.0,502.2 L810.7,490.5 L810.6,478.7 L810.6,467.0 L810.7,455.2 L811.1,443.5 L811.4,431.7 L811.5,420.0 L811.5,408.2 L811.5,396.5 L811.5,384.7 L811.5,373.0 Z" fill="#1e1d1d" stroke="#0e0b0a" stroke-width="2"/>
<path d="M814.2,373.0 L814.2,370.3 L815.2,369.1 L816.1,368.5 L817.1,368.1 L818.0,368.0 L818.9,368.1 L819.9,368.5 L820.8,369.1 L821.8,370.3 L821.8,384.7 L821.8,396.5 L821.8,408.2 L821.8,420.0 L821.8,431.7 L821.8,443.5 L821.9,455.2 L822.4,467.0 L823.1,478.7 L824.1,490.5 L825.2,502.2 L826.4,514.0 L827.6,525.7 L828.8,537.4 L829.8,549.2 L830.7,560.9 L831.4,572.7 L831.7,584.4 L831.7,596.2 L831.7,607.9 L831.7,619.7 L831.4,631.4 L830.9,643.2 L830.4,654.9 L829.8,666.6 L829.3,678.4 L829.0,690.1 L828.8,701.9 L828.8,703.8 L827.8,704.6 L826.9,705.1 L825.9,705.3 L825.0,705.4 L824.0,705.3 L823.1,705.1 L822.2,704.6 L821.2,703.8 L821.4,690.1 L821.8,678.4 L822.3,666.6 L822.8,654.9 L823.4,643.2 L823.8,631.4 L824.1,619.7 L824.2,607.9 L824.2,596.2 L824.1,584.4 L823.8,572.7 L823.1,560.9 L822.3,549.2 L821.2,537.4 L820.0,525.7 L818.8,514.0 L817.7,502.2 L816.5,490.5 L815.6,478.7 L814.8,467.0 L814.4,455.2 L814.2,443.5 L814.2,431.7 L814.2,420.0 L814.2,408.2 L814.2,396.5 L814.2,384.7 L814.2,373.0 Z" fill="#c48766"/>
<path d="M830.2,367.0 L830.2,367.0 L831.6,363.7 L833.0,362.7 L834.3,362.2 L835.7,362.0 L837.1,362.2 L838.5,362.7 L839.8,363.7 L841.2,367.0 L841.2,379.0 L841.2,390.9 L841.2,402.9 L841.2,414.9 L841.2,426.8 L841.2,438.8 L841.3,450.8 L841.7,462.7 L842.6,474.7 L843.9,486.7 L845.3,498.6 L846.9,510.6 L848.5,522.6 L850.1,534.6 L851.6,546.5 L852.9,558.5 L853.8,570.5 L854.4,582.4 L854.5,594.4 L854.5,606.4 L854.4,618.3 L854.0,630.3 L853.4,642.3 L852.7,654.2 L852.0,666.2 L851.3,678.2 L850.8,690.1 L850.5,702.1 L850.5,702.1 L847.9,704.4 L845.3,705.1 L842.6,705.5 L840.0,705.6 L837.4,705.5 L834.8,705.1 L832.1,704.4 L829.5,702.1 L829.8,690.1 L830.3,678.2 L831.0,666.2 L831.7,654.2 L832.4,642.3 L833.0,630.3 L833.4,618.3 L833.5,606.4 L833.5,594.4 L833.4,582.4 L832.9,570.5 L832.4,558.5 L831.7,546.5 L831.1,534.6 L830.5,522.6 L829.9,510.6 L829.4,498.6 L829.1,486.7 L828.9,474.7 L829.0,462.7 L829.3,450.8 L829.8,438.8 L830.1,426.8 L830.2,414.9 L830.2,402.9 L830.2,390.9 L830.2,379.0 L830.2,367.0 Z" fill="#1e1d1d" stroke="#0e0b0a" stroke-width="2"/>
<path d="M832.9,367.0 L832.9,364.3 L833.9,363.1 L834.8,362.5 L835.8,362.1 L836.7,362.0 L837.6,362.1 L838.6,362.5 L839.5,363.1 L840.5,364.3 L840.5,379.0 L840.5,390.9 L840.5,402.9 L840.5,414.9 L840.5,426.8 L840.5,438.8 L840.5,450.8 L841.0,462.7 L841.9,474.7 L843.1,486.7 L844.6,498.6 L846.2,510.6 L847.8,522.6 L849.4,534.6 L850.9,546.5 L852.2,558.5 L853.1,570.5 L853.7,582.4 L853.8,594.4 L853.8,606.4 L853.7,618.3 L853.3,630.3 L852.7,642.3 L852.0,654.2 L851.3,666.2 L850.6,678.2 L850.1,690.1 L849.8,702.1 L849.8,704.0 L848.9,704.8 L847.9,705.3 L847.0,705.5 L846.0,705.6 L845.1,705.5 L844.1,705.3 L843.2,704.8 L842.2,704.0 L842.5,690.1 L843.0,678.2 L843.7,666.2 L844.4,654.2 L845.2,642.3 L845.7,630.3 L846.1,618.3 L846.2,606.4 L846.2,594.4 L846.1,582.4 L845.5,570.5 L844.6,558.5 L843.3,546.5 L841.9,534.6 L840.3,522.6 L838.6,510.6 L837.0,498.6 L835.6,486.7 L834.4,474.7 L833.5,462.7 L833.0,450.8 L832.9,438.8 L832.9,426.8 L832.9,414.9 L832.9,402.9 L832.9,390.9 L832.9,379.0 L832.9,367.0 Z" fill="#c48766"/>
<path d="M419.5,555.0 L418.2,559.4 L417.1,563.7 L416.1,568.1 L415.3,572.5 L414.6,576.9 L414.1,581.2 L413.7,585.6 L413.6,590.0 L413.6,594.4 L413.6,598.7 L413.6,603.1 L413.6,607.5 L413.7,611.8 L414.5,616.2 L415.8,620.6 L417.5,625.0 L419.5,629.3 L421.4,633.7 L423.2,638.1 L424.6,642.5 L419.0,642.5 L417.5,638.1 L415.9,633.7 L414.3,629.3 L412.8,625.0 L411.5,620.6 L410.5,616.2 L410.1,611.8 L410.0,607.5 L410.0,603.1 L410.0,598.7 L410.0,594.4 L410.0,590.0 L410.1,585.6 L410.4,581.2 L410.9,576.9 L411.6,572.5 L412.4,568.1 L413.4,563.7 L414.6,559.4 L415.9,555.0 Z" fill="#7a5d4f"/>
<path d="M456.5,488.0 L453.5,496.1 L450.4,504.3 L447.1,512.4 L443.7,520.6 L440.4,528.7 L437.2,536.9 L434.1,545.0 L431.4,553.1 L429.1,561.3 L427.2,569.4 L425.8,577.6 L425.1,585.7 L425.0,593.9 L425.0,602.0 L425.0,610.1 L426.0,618.3 L428.3,626.4 L431.2,634.6 L434.1,642.7 L436.3,650.9 L422.5,650.9 L420.4,642.7 L417.5,634.6 L414.7,626.4 L412.6,618.3 L411.7,610.1 L411.5,602.0 L411.5,593.9 L411.7,585.7 L412.4,577.6 L413.7,569.4 L415.6,561.3 L418.0,553.1 L420.7,545.0 L423.7,536.9 L426.9,528.7 L430.2,520.6 L433.6,512.4 L436.9,504.3 L440.1,496.1 L443.0,488.0 Z" fill="#7a5d4f"/>
<path d="M466.5,397.0 L466.5,409.8 L466.5,422.5 L466.5,435.2 L466.4,448.0 L465.2,460.8 L462.4,473.5 L458.6,486.2 L454.0,499.0 L448.9,511.8 L443.6,524.5 L438.6,537.2 L434.0,550.0 L430.3,562.8 L427.7,575.5 L426.5,588.2 L426.5,601.0 L426.8,613.8 L429.7,626.5 L434.2,639.2 L437.8,652.0 L433.6,652.0 L430.0,639.2 L426.2,626.5 L424.0,613.8 L423.7,601.0 L423.8,588.2 L424.9,575.5 L427.4,562.8 L431.1,550.0 L435.7,537.2 L440.7,524.5 L445.9,511.8 L451.0,499.0 L455.6,486.2 L459.5,473.5 L462.1,460.8 L463.3,448.0 L463.5,435.2 L463.5,422.5 L463.5,409.8 L463.5,397.0 Z" fill="#7a5d4f"/>
<path d="M478.5,353.0 L478.5,368.3 L478.5,383.6 L478.5,398.9 L478.5,414.3 L478.5,429.6 L478.4,444.9 L477.2,460.2 L473.9,475.5 L469.0,490.8 L463.2,506.1 L457.0,521.5 L450.9,536.8 L445.5,552.1 L441.4,567.4 L439.0,582.7 L438.7,598.0 L438.9,613.3 L441.8,628.6 L446.4,644.0 L450.1,659.3 L449.9,659.3 L446.3,644.0 L442.4,628.6 L440.3,613.3 L439.9,598.0 L440.2,582.7 L442.6,567.4 L446.7,552.1 L452.1,536.8 L458.1,521.5 L464.3,506.1 L470.1,490.8 L474.9,475.5 L478.3,460.2 L479.5,444.9 L479.5,429.6 L479.5,414.3 L479.5,398.9 L479.5,383.6 L479.5,368.3 L479.5,353.0 Z" fill="#7a5d4f"/>
<path d="M494.5,326.0 L494.5,343.1 L494.5,360.2 L494.5,377.3 L494.5,394.4 L494.5,411.5 L494.5,428.6 L494.5,445.7 L492.8,462.8 L488.6,479.9 L482.9,497.0 L476.1,514.0 L469.2,531.1 L462.9,548.2 L458.1,565.3 L455.2,582.4 L454.9,599.5 L455.4,616.6 L458.6,633.7 L463.0,650.8 L466.4,667.9 L468.1,667.9 L464.7,650.8 L460.7,633.7 L458.2,616.6 L457.7,599.5 L458.1,582.4 L460.9,565.3 L465.7,548.2 L471.9,531.1 L478.7,514.0 L485.4,497.0 L491.2,479.9 L495.2,462.8 L496.9,445.7 L497.0,428.6 L497.0,411.5 L497.0,394.4 L497.0,377.3 L497.0,360.2 L497.0,343.1 L497.0,326.0 Z" fill="#7a5d4f"/>
<path d="M512.0,312.6 L512.0,330.7 L512.0,348.9 L512.0,367.0 L512.0,385.2 L512.0,403.3 L512.0,421.5 L512.0,439.6 L511.0,457.8 L507.3,475.9 L501.5,494.1 L494.5,512.2 L487.2,530.4 L480.6,548.5 L475.6,566.7 L472.8,584.8 L472.7,603.0 L473.6,621.1 L476.9,639.3 L481.1,657.4 L484.2,675.6 L484.9,675.6 L481.8,657.4 L478.0,639.3 L475.1,621.1 L474.3,603.0 L474.6,584.8 L477.1,566.7 L482.0,548.5 L488.6,530.4 L495.9,512.2 L502.9,494.1 L508.6,475.9 L512.3,457.8 L513.3,439.6 L513.3,421.5 L513.3,403.3 L513.3,385.2 L513.3,367.0 L513.3,348.9 L513.3,330.7 L513.3,312.6 Z" fill="#7a5d4f"/>
<path d="M528.3,308.0 L528.3,326.7 L528.3,345.4 L528.3,364.1 L528.3,382.7 L528.3,401.4 L528.3,420.1 L528.3,438.8 L527.3,457.5 L523.5,476.2 L517.6,494.9 L510.4,513.5 L502.9,532.2 L496.3,550.9 L491.5,569.6 L489.3,588.3 L489.3,607.0 L490.6,625.7 L494.0,644.4 L498.0,663.0 L500.7,681.7 L502.9,681.7 L500.1,663.0 L496.3,644.4 L493.2,625.7 L492.1,607.0 L492.2,588.3 L494.3,569.6 L499.0,550.9 L505.6,532.2 L513.0,513.5 L520.1,494.9 L526.1,476.2 L529.9,457.5 L530.8,438.8 L530.8,420.1 L530.8,401.4 L530.8,382.7 L530.8,364.1 L530.8,345.4 L530.8,326.7 L530.8,308.0 Z" fill="#7a5d4f"/>
<path d="M545.8,311.5 L545.8,330.3 L545.8,349.0 L545.8,367.8 L545.8,386.5 L545.8,405.3 L545.8,424.1 L545.8,442.8 L544.2,461.6 L539.9,480.3 L533.6,499.1 L526.3,517.8 L518.9,536.6 L512.7,555.4 L508.5,574.1 L507.0,592.9 L507.2,611.6 L508.8,630.4 L512.3,649.2 L515.9,667.9 L518.4,686.7 L519.7,686.7 L517.2,667.9 L513.6,649.2 L510.4,630.4 L508.8,611.6 L508.7,592.9 L510.1,574.1 L514.2,555.4 L520.5,536.6 L527.8,517.8 L535.1,499.1 L541.3,480.3 L545.7,461.6 L547.2,442.8 L547.2,424.1 L547.2,405.3 L547.2,386.5 L547.2,367.8 L547.2,349.0 L547.2,330.3 L547.2,311.5 Z" fill="#7a5d4f"/>
<path d="M562.2,318.5 L562.2,337.0 L562.2,355.6 L562.2,374.1 L562.2,392.7 L562.2,411.2 L562.2,429.8 L562.0,448.3 L559.7,466.8 L554.8,485.4 L548.2,503.9 L541.0,522.5 L533.9,541.0 L528.2,559.6 L524.5,578.1 L523.7,596.6 L524.0,615.2 L525.8,633.7 L529.3,652.3 L532.7,670.8 L535.0,689.4 L537.2,689.4 L534.9,670.8 L531.5,652.3 L528.3,633.7 L526.5,615.2 L526.2,596.6 L527.2,578.1 L530.6,559.6 L536.4,541.0 L543.4,522.5 L550.7,503.9 L557.1,485.4 L562.1,466.8 L564.3,448.3 L564.5,429.8 L564.5,411.2 L564.5,392.7 L564.5,374.1 L564.5,355.6 L564.5,337.0 L564.5,318.5 Z" fill="#7a5d4f"/>
<path d="M579.5,328.0 L579.5,346.2 L579.5,364.4 L579.5,382.6 L579.5,400.8 L579.5,419.0 L579.5,437.2 L578.8,455.4 L575.5,473.6 L570.1,491.9 L563.3,510.1 L556.2,528.3 L549.5,546.5 L544.5,564.7 L541.6,582.9 L541.2,601.1 L541.7,619.3 L543.9,637.5 L547.2,655.7 L550.4,673.9 L552.5,692.1 L555.2,692.1 L553.1,673.9 L549.9,655.7 L546.8,637.5 L544.6,619.3 L544.2,601.1 L544.7,582.9 L547.3,564.7 L552.5,546.5 L559.0,528.3 L566.1,510.1 L572.8,491.9 L578.3,473.6 L581.5,455.4 L582.2,437.2 L582.2,419.0 L582.2,400.8 L582.2,382.6 L582.2,364.4 L582.2,346.2 L582.2,328.0 Z" fill="#7a5d4f"/>
<path d="M597.2,337.4 L597.2,355.2 L597.2,373.0 L597.2,390.9 L597.2,408.7 L597.2,426.5 L597.2,444.3 L595.6,462.1 L591.5,480.0 L585.8,497.8 L578.9,515.6 L572.1,533.4 L565.9,551.2 L561.5,569.1 L559.4,586.9 L559.2,604.7 L559.9,622.5 L562.2,640.3 L565.4,658.2 L568.4,676.0 L570.4,693.8 L577.9,693.8 L576.2,676.0 L573.6,658.2 L571.0,640.3 L569.1,622.5 L568.6,604.7 L568.7,586.9 L570.4,569.1 L574.3,551.2 L579.5,533.4 L585.3,515.6 L591.0,497.8 L596.0,480.0 L599.4,462.1 L600.7,444.3 L600.8,426.5 L600.8,408.7 L600.8,390.9 L600.8,373.0 L600.8,355.2 L600.8,337.4 Z" fill="#7a5d4f"/>
<path d="M615.8,348.0 L615.8,365.4 L615.8,382.8 L615.8,400.2 L615.8,417.6 L615.8,435.0 L615.5,452.4 L613.2,469.8 L609.1,487.2 L603.9,504.6 L598.2,522.0 L592.6,539.4 L587.9,556.8 L584.8,574.2 L583.6,591.6 L583.6,609.0 L584.4,626.3 L586.5,643.7 L589.1,661.1 L591.5,678.5 L593.1,695.9 L598.0,695.9 L596.7,678.5 L594.7,661.1 L592.5,643.7 L590.8,626.3 L590.1,609.0 L590.2,591.6 L591.1,574.2 L593.8,556.8 L597.8,539.4 L602.4,522.0 L607.2,504.6 L611.6,487.2 L615.0,469.8 L616.9,452.4 L617.2,435.0 L617.2,417.6 L617.2,400.2 L617.2,382.8 L617.2,365.4 L617.2,348.0 Z" fill="#7a5d4f"/>
<path d="M632.2,358.5 L632.2,375.4 L632.2,392.4 L632.2,409.3 L632.2,426.2 L632.2,443.2 L631.4,460.1 L628.7,477.0 L625.0,494.0 L620.5,510.9 L615.8,527.8 L611.4,544.8 L607.8,561.7 L605.7,578.6 L605.1,595.6 L605.2,612.5 L606.1,629.4 L607.8,646.4 L610.0,663.3 L611.9,680.2 L613.1,697.2 L619.2,697.2 L618.2,680.2 L616.7,663.3 L615.0,646.4 L613.6,629.4 L612.9,612.5 L612.8,595.6 L613.3,578.6 L615.0,561.7 L617.9,544.8 L621.4,527.8 L625.1,510.9 L628.7,494.0 L631.8,477.0 L633.8,460.1 L634.5,443.2 L634.5,426.2 L634.5,409.3 L634.5,392.4 L634.5,375.4 L634.5,358.5 Z" fill="#7a5d4f"/>
<path d="M853.9,364.9 L853.9,381.6 L853.9,398.3 L853.9,415.0 L853.9,431.7 L853.9,448.4 L854.8,465.1 L856.5,481.8 L858.9,498.5 L861.5,515.2 L864.3,531.8 L866.7,548.5 L868.7,565.2 L869.8,581.9 L870.0,598.6 L869.9,615.3 L869.3,632.0 L868.2,648.7 L867.0,665.4 L865.9,682.1 L865.2,698.8 L869.5,698.8 L870.3,682.1 L871.5,665.4 L873.0,648.7 L874.2,632.0 L874.9,615.3 L874.9,598.6 L874.7,581.9 L873.5,565.2 L871.2,548.5 L868.4,531.8 L865.3,515.2 L862.2,498.5 L859.5,481.8 L857.5,465.1 L856.6,448.4 L856.5,431.7 L856.5,415.0 L856.5,398.3 L856.5,381.6 L856.5,364.9 Z" fill="#1e1d1d"/>
<path d="M871.0,355.9 L871.0,373.1 L871.0,390.2 L871.0,407.4 L871.0,424.5 L871.0,441.7 L871.5,458.8 L873.2,476.0 L875.8,493.1 L878.9,510.3 L882.1,527.4 L885.1,544.6 L887.6,561.7 L889.1,578.9 L889.4,596.0 L889.4,613.2 L888.8,630.3 L887.6,647.5 L886.1,664.6 L884.8,681.8 L884.0,698.9 L888.4,698.9 L889.3,681.8 L890.8,664.6 L892.4,647.5 L893.8,630.3 L894.5,613.2 L894.5,596.0 L894.1,578.9 L892.4,561.7 L889.7,544.6 L886.2,527.4 L882.6,510.3 L879.1,493.1 L876.2,476.0 L874.3,458.8 L873.7,441.7 L873.7,424.5 L873.7,407.4 L873.7,390.2 L873.7,373.1 L873.7,355.9 Z" fill="#1e1d1d"/>
<path d="M888.2,343.9 L888.2,361.6 L888.2,379.4 L888.2,397.1 L888.2,414.9 L888.2,432.6 L888.4,450.4 L889.7,468.1 L892.3,485.8 L895.7,503.6 L899.4,521.3 L903.1,539.1 L906.2,556.8 L908.3,574.6 L909.0,592.3 L909.0,610.0 L908.4,627.8 L907.1,645.5 L905.4,663.3 L903.9,681.0 L902.9,698.8 L907.2,698.8 L908.3,681.0 L910.0,663.3 L911.9,645.5 L913.3,627.8 L914.0,610.0 L914.0,592.3 L913.2,574.6 L910.9,556.8 L907.4,539.1 L903.3,521.3 L899.1,503.6 L895.3,485.8 L892.5,468.1 L891.0,450.4 L890.8,432.6 L890.8,414.9 L890.8,397.1 L890.8,379.4 L890.8,361.6 L890.8,343.9 Z" fill="#1e1d1d"/>
<path d="M905.3,329.9 L905.3,348.3 L905.3,366.8 L905.3,385.2 L905.3,403.6 L905.3,422.1 L905.3,440.5 L906.0,458.9 L908.3,477.4 L911.9,495.8 L916.1,514.2 L920.5,532.7 L924.4,551.1 L927.2,569.5 L928.4,588.0 L928.5,606.4 L928.0,624.8 L926.6,643.3 L924.6,661.7 L922.8,680.1 L921.7,698.6 L925.9,698.6 L927.2,680.1 L929.2,661.7 L931.4,643.3 L932.9,624.8 L933.5,606.4 L933.4,588.0 L932.0,569.5 L928.9,551.1 L924.6,532.7 L919.8,514.2 L915.1,495.8 L911.2,477.4 L908.7,458.9 L907.9,440.5 L907.9,422.1 L907.9,403.6 L907.9,385.2 L907.9,366.8 L907.9,348.3 L907.9,329.9 Z" fill="#1e1d1d"/>
<path d="M922.4,317.2 L922.4,336.3 L922.4,355.3 L922.4,374.4 L922.4,393.4 L922.4,412.5 L922.4,431.5 L922.6,450.6 L924.4,469.7 L928.0,488.7 L932.6,507.8 L937.6,526.8 L942.3,545.9 L945.9,565.0 L947.7,584.0 L948.0,603.1 L947.6,622.1 L946.1,641.2 L943.9,660.2 L941.8,679.3 L940.5,698.4 L944.7,698.4 L946.2,679.3 L948.5,660.2 L950.9,641.2 L952.5,622.1 L953.0,603.1 L952.8,584.0 L950.7,565.0 L946.8,545.9 L941.7,526.8 L936.2,507.8 L931.1,488.7 L927.3,469.7 L925.3,450.6 L925.0,431.5 L925.0,412.5 L925.0,393.4 L925.0,374.4 L925.0,355.3 L925.0,336.3 L925.0,317.2 Z" fill="#1e1d1d"/>
<path d="M939.5,305.4 L939.5,325.0 L939.5,344.7 L939.5,364.3 L939.5,384.0 L939.5,403.6 L939.5,423.2 L939.5,442.9 L940.7,462.5 L944.2,482.1 L949.0,501.8 L954.6,521.4 L960.0,541.1 L964.5,560.7 L967.0,580.3 L967.5,600.0 L967.2,619.6 L965.6,639.3 L963.1,658.9 L960.8,678.5 L959.2,698.2 L962.8,698.2 L964.4,678.5 L966.8,658.9 L969.4,639.3 L971.0,619.6 L971.4,600.0 L970.9,580.3 L968.2,560.7 L963.6,541.1 L957.9,521.4 L952.1,501.8 L946.9,482.1 L943.4,462.5 L942.2,442.9 L942.1,423.2 L942.1,403.6 L942.1,384.0 L942.1,364.3 L942.1,344.7 L942.1,325.0 L942.1,305.4 Z" fill="#1e1d1d"/>
<path d="M956.6,294.4 L956.6,314.5 L956.6,334.6 L956.6,354.7 L956.6,374.8 L956.6,394.9 L956.6,415.0 L956.6,435.1 L957.1,455.2 L960.0,475.3 L964.8,495.4 L970.7,515.5 L976.6,535.7 L981.7,555.8 L985.0,575.9 L985.9,596.0 L985.7,616.1 L984.2,636.2 L981.7,656.3 L979.1,676.4 L977.4,696.5 L979.9,696.5 L981.7,676.4 L984.5,656.3 L987.2,636.2 L988.7,616.1 L989.0,596.0 L988.0,575.9 L984.5,555.8 L979.3,535.7 L973.1,515.5 L967.0,495.4 L961.9,475.3 L959.0,455.2 L958.4,435.1 L958.4,415.0 L958.4,394.9 L958.4,374.8 L958.4,354.7 L958.4,334.6 L958.4,314.5 L958.4,294.4 Z" fill="#1e1d1d"/>
<path d="M972.9,285.1 L972.9,305.5 L972.9,325.9 L972.9,346.3 L972.9,366.6 L972.9,387.0 L972.9,407.4 L972.9,427.8 L973.0,448.2 L975.2,468.6 L979.7,489.0 L985.6,509.3 L992.0,529.7 L997.8,550.1 L1001.8,570.5 L1003.4,590.9 L1003.4,611.3 L1002.1,631.6 L999.6,652.0 L996.7,672.4 L994.7,692.8 L996.4,692.8 L998.4,672.4 L1001.5,652.0 L1004.3,631.6 L1005.6,611.3 L1005.8,590.9 L1004.1,570.5 L999.8,550.1 L993.9,529.7 L987.2,509.3 L981.0,489.0 L976.3,468.6 L974.2,448.2 L974.0,427.8 L974.0,407.4 L974.0,387.0 L974.0,366.6 L974.0,346.3 L974.0,325.9 L974.0,305.5 L974.0,285.1 Z" fill="#1e1d1d"/>
<path d="M988.5,279.2 L988.5,299.7 L988.5,320.2 L988.5,340.7 L988.5,361.2 L988.5,381.6 L988.5,402.1 L988.5,422.6 L988.6,443.1 L990.1,463.6 L994.2,484.1 L1000.2,504.6 L1006.8,525.1 L1013.1,545.5 L1017.8,566.0 L1020.1,586.5 L1020.2,607.0 L1019.2,627.5 L1016.6,648.0 L1013.5,668.5 L1011.2,689.0 L1013.6,689.0 L1015.8,668.5 L1019.2,648.0 L1022.1,627.5 L1023.2,607.0 L1023.2,586.5 L1020.7,566.0 L1015.8,545.5 L1009.4,525.1 L1002.5,504.6 L996.2,484.1 L991.9,463.6 L990.4,443.1 L990.3,422.6 L990.3,402.1 L990.3,381.6 L990.3,361.2 L990.3,340.7 L990.3,320.2 L990.3,299.7 L990.3,279.2 Z" fill="#1e1d1d"/>
<path d="M1004.8,278.4 L1004.8,298.8 L1004.8,319.1 L1004.8,339.5 L1004.8,359.8 L1004.8,380.2 L1004.8,400.6 L1004.8,420.9 L1004.9,441.3 L1006.2,461.6 L1010.2,482.0 L1016.2,502.3 L1023.1,522.7 L1029.6,543.1 L1034.7,563.4 L1037.5,583.8 L1037.8,604.1 L1036.9,624.5 L1034.2,644.9 L1030.8,665.2 L1028.4,685.6 L1028.7,685.6 L1031.1,665.2 L1034.5,644.9 L1037.4,624.5 L1038.3,604.1 L1038.1,583.8 L1035.2,563.4 L1030.2,543.1 L1023.8,522.7 L1017.1,502.3 L1011.1,482.0 L1007.2,461.6 L1005.9,441.3 L1005.8,420.9 L1005.8,400.6 L1005.8,380.2 L1005.8,359.8 L1005.8,339.5 L1005.8,319.1 L1005.8,298.8 L1005.8,278.4 Z" fill="#1e1d1d"/>
<path d="M1020.3,288.5 L1020.3,307.9 L1020.3,327.4 L1020.3,346.8 L1020.3,366.3 L1020.3,385.7 L1020.3,405.2 L1020.3,424.6 L1020.4,444.0 L1021.9,463.5 L1025.8,482.9 L1031.6,502.4 L1038.0,521.8 L1044.2,541.3 L1049.2,560.7 L1052.2,580.1 L1052.8,599.6 L1052.3,619.0 L1050.0,638.5 L1046.7,657.9 L1044.0,677.3 L1043.2,677.3 L1045.8,657.9 L1049.4,638.5 L1052.0,619.0 L1052.6,599.6 L1052.1,580.1 L1049.1,560.7 L1044.1,541.3 L1038.0,521.8 L1031.7,502.4 L1026.0,482.9 L1022.2,463.5 L1020.7,444.0 L1020.6,424.6 L1020.6,405.2 L1020.6,385.7 L1020.6,366.3 L1020.6,346.8 L1020.6,327.4 L1020.6,307.9 L1020.6,288.5 Z" fill="#1e1d1d"/>
<path d="M1035.1,308.8 L1035.1,326.8 L1035.1,344.7 L1035.1,362.7 L1035.1,380.7 L1035.1,398.7 L1035.1,416.6 L1035.1,434.6 L1035.5,452.6 L1037.8,470.5 L1042.1,488.5 L1047.5,506.5 L1053.4,524.5 L1058.9,542.4 L1063.5,560.4 L1066.4,578.4 L1067.1,596.3 L1066.8,614.3 L1064.9,632.3 L1061.7,650.3 L1058.8,668.2 L1057.7,668.2 L1060.6,650.3 L1064.3,632.3 L1066.6,614.3 L1066.9,596.3 L1066.3,578.4 L1063.4,560.4 L1058.9,542.4 L1053.4,524.5 L1047.6,506.5 L1042.2,488.5 L1038.1,470.5 L1035.8,452.6 L1035.4,434.6 L1035.4,416.6 L1035.4,398.7 L1035.4,380.7 L1035.4,362.7 L1035.4,344.7 L1035.4,326.8 L1035.4,308.8 Z" fill="#1e1d1d"/>
<path d="M1049.9,348.4 L1049.9,363.9 L1049.9,379.4 L1049.9,394.9 L1049.9,410.4 L1049.9,425.9 L1049.9,441.4 L1050.7,456.9 L1052.9,472.4 L1056.5,487.9 L1061.1,503.4 L1066.1,518.9 L1071.0,534.4 L1075.4,549.9 L1078.9,565.4 L1080.9,580.9 L1081.4,596.4 L1081.2,611.8 L1079.6,627.3 L1076.6,642.8 L1073.6,658.3 L1071.5,658.3 L1074.5,642.8 L1078.1,627.3 L1080.3,611.8 L1080.4,596.4 L1080.0,580.9 L1077.9,565.4 L1074.5,549.9 L1070.2,534.4 L1065.3,518.9 L1060.4,503.4 L1056.0,487.9 L1052.3,472.4 L1050.1,456.9 L1049.4,441.4 L1049.4,425.9 L1049.4,410.4 L1049.4,394.9 L1049.4,379.4 L1049.4,363.9 L1049.4,348.4 Z" fill="#1e1d1d"/>
<path d="M1063.9,421.8 L1063.9,432.9 L1063.9,444.1 L1064.4,455.2 L1065.8,466.3 L1067.9,477.4 L1070.7,488.6 L1073.8,499.7 L1077.3,510.8 L1080.8,522.0 L1084.3,533.1 L1087.5,544.2 L1090.4,555.4 L1092.6,566.5 L1094.1,577.6 L1094.8,588.7 L1094.9,599.9 L1094.8,611.0 L1093.6,622.1 L1091.3,633.3 L1088.6,644.4 L1083.7,644.4 L1086.7,633.3 L1090.1,622.1 L1091.9,611.0 L1092.0,599.9 L1092.0,588.7 L1091.3,577.6 L1089.8,566.5 L1087.6,555.4 L1084.9,544.2 L1081.7,533.1 L1078.4,522.0 L1074.9,510.8 L1071.6,499.7 L1068.5,488.6 L1065.8,477.4 L1063.8,466.3 L1062.5,455.2 L1062.0,444.1 L1062.0,432.9 L1062.0,421.8 Z" fill="#1e1d1d"/>
<path d="M450.5,397.0 L450.5,397.0 L452.6,390.4 L454.8,388.3 L456.9,387.3 L459.0,387.0 L461.1,387.3 L463.2,388.3 L465.4,390.4 L467.5,397.0 L467.5,406.1 L467.5,415.2 L467.5,424.3 L467.5,433.4 L467.5,442.5 L467.3,451.6 L466.2,460.8 L464.4,469.9 L461.9,479.0 L459.0,488.1 L455.7,497.2 L452.1,506.3 L448.4,515.4 L444.6,524.5 L440.9,533.6 L437.5,542.7 L434.4,551.8 L431.7,560.9 L429.6,570.0 L428.1,579.1 L427.5,588.2 L427.5,597.4 L427.5,606.5 L427.9,615.6 L430.1,624.7 L433.2,633.8 L436.5,642.9 L438.8,652.0 L438.8,652.0 L436.7,656.6 L434.6,658.1 L432.5,658.8 L430.3,659.0 L428.2,658.8 L426.1,658.1 L424.0,656.6 L421.8,652.0 L419.5,642.9 L416.2,633.8 L413.1,624.7 L410.9,615.6 L410.5,606.5 L410.5,597.4 L410.5,588.2 L411.1,579.1 L412.6,570.0 L414.7,560.9 L417.4,551.8 L420.5,542.7 L423.9,533.6 L427.6,524.5 L431.4,515.4 L435.1,506.3 L438.7,497.2 L442.0,488.1 L444.9,479.0 L447.4,469.9 L449.2,460.8 L450.3,451.6 L450.5,442.5 L450.5,433.4 L450.5,424.3 L450.5,415.2 L450.5,406.1 L450.5,397.0 Z" fill="#7a5d4f" stroke="#0e0b0a" stroke-width="2.2"/>
<path d="M451.5,397.0 L451.5,392.3 L452.2,391.1 L452.8,390.2 L453.4,389.4 L454.1,388.9 L454.7,388.4 L455.3,388.0 L456.0,387.7 L456.6,387.4 L456.6,406.1 L456.6,415.2 L456.6,424.3 L456.6,433.4 L456.6,442.5 L456.4,451.6 L455.3,460.8 L453.5,469.9 L451.1,479.0 L448.1,488.1 L444.8,497.2 L441.2,506.3 L437.5,515.4 L433.7,524.5 L430.1,533.6 L426.6,542.7 L423.5,551.8 L420.8,560.9 L418.7,570.0 L417.3,579.1 L416.6,588.2 L416.6,597.4 L416.6,606.5 L417.1,615.6 L419.2,624.7 L422.4,633.8 L425.6,642.9 L428.0,652.0 L428.0,658.7 L427.3,658.5 L426.7,658.3 L426.0,658.0 L425.4,657.7 L424.8,657.3 L424.1,656.8 L423.5,656.2 L422.9,655.3 L420.5,642.9 L417.3,633.8 L414.1,624.7 L412.0,615.6 L411.5,606.5 L411.5,597.4 L411.5,588.2 L412.2,579.1 L413.6,570.0 L415.7,560.9 L418.4,551.8 L421.5,542.7 L425.0,533.6 L428.6,524.5 L432.4,515.4 L436.1,506.3 L439.7,497.2 L443.0,488.1 L446.0,479.0 L448.4,469.9 L450.2,460.8 L451.3,451.6 L451.5,442.5 L451.5,433.4 L451.5,424.3 L451.5,415.2 L451.5,406.1 L451.5,397.0 Z" fill="#bb8266"/>
<path d="M456.6,397.0 L456.6,387.4 L456.9,387.3 L457.1,387.2 L457.4,387.2 L457.6,387.1 L457.9,387.1 L458.2,387.1 L458.4,387.0 L458.7,387.0 L458.7,406.1 L458.7,415.2 L458.7,424.3 L458.7,433.4 L458.7,442.5 L458.4,451.6 L457.3,460.8 L455.5,469.9 L453.1,479.0 L450.2,488.1 L446.8,497.2 L443.3,506.3 L439.5,515.4 L435.8,524.5 L432.1,533.6 L428.6,542.7 L425.5,551.8 L422.8,560.9 L420.7,570.0 L419.3,579.1 L418.7,588.2 L418.7,597.4 L418.7,606.5 L419.1,615.6 L421.2,624.7 L424.4,633.8 L427.6,642.9 L430.0,652.0 L430.0,659.0 L429.7,659.0 L429.5,659.0 L429.2,658.9 L429.0,658.9 L428.7,658.9 L428.5,658.8 L428.2,658.8 L428.0,658.7 L425.6,642.9 L422.4,633.8 L419.2,624.7 L417.1,615.6 L416.6,606.5 L416.6,597.4 L416.6,588.2 L417.3,579.1 L418.7,570.0 L420.8,560.9 L423.5,551.8 L426.6,542.7 L430.1,533.6 L433.7,524.5 L437.5,515.4 L441.2,506.3 L444.8,497.2 L448.1,488.1 L451.1,479.0 L453.5,469.9 L455.3,460.8 L456.4,451.6 L456.6,442.5 L456.6,433.4 L456.6,424.3 L456.6,415.2 L456.6,406.1 L456.6,397.0 Z" fill="#0e0b0a"/>
<path d="M462.5,353.0 L462.5,353.0 L464.6,346.4 L466.8,344.3 L468.9,343.3 L471.0,343.0 L473.1,343.3 L475.2,344.3 L477.4,346.4 L479.5,353.0 L479.5,363.9 L479.5,374.9 L479.5,385.8 L479.5,396.8 L479.5,407.7 L479.5,418.6 L479.5,429.6 L479.5,440.5 L479.3,451.4 L477.9,462.4 L475.5,473.3 L472.3,484.3 L468.5,495.2 L464.2,506.1 L459.8,517.1 L455.3,528.0 L451.0,539.0 L447.1,549.9 L443.9,560.8 L441.4,571.8 L440.0,582.7 L439.7,593.6 L439.7,604.6 L440.0,615.5 L442.2,626.5 L445.4,637.4 L448.8,648.3 L451.1,659.3 L451.1,659.3 L449.0,663.9 L446.9,665.3 L444.7,666.1 L442.6,666.3 L440.5,666.1 L438.4,665.3 L436.2,663.9 L434.1,659.3 L431.8,648.3 L428.4,637.4 L425.2,626.5 L423.0,615.5 L422.7,604.6 L422.7,593.6 L423.0,582.7 L424.4,571.8 L426.9,560.8 L430.1,549.9 L434.0,539.0 L438.3,528.0 L442.8,517.1 L447.2,506.1 L451.5,495.2 L455.3,484.3 L458.5,473.3 L460.9,462.4 L462.3,451.4 L462.5,440.5 L462.5,429.6 L462.5,418.6 L462.5,407.7 L462.5,396.8 L462.5,385.8 L462.5,374.9 L462.5,363.9 L462.5,353.0 Z" fill="#7a5d4f" stroke="#0e0b0a" stroke-width="2.2"/>
<path d="M463.5,353.0 L463.5,348.3 L464.2,347.1 L464.8,346.2 L465.4,345.4 L466.1,344.9 L466.7,344.4 L467.3,344.0 L468.0,343.7 L468.6,343.4 L468.6,363.9 L468.6,374.9 L468.6,385.8 L468.6,396.8 L468.6,407.7 L468.6,418.6 L468.6,429.6 L468.6,440.5 L468.4,451.4 L467.0,462.4 L464.7,473.3 L461.4,484.3 L457.6,495.2 L453.4,506.1 L448.9,517.1 L444.4,528.0 L440.1,539.0 L436.3,549.9 L433.0,560.8 L430.5,571.8 L429.1,582.7 L428.8,593.6 L428.8,604.6 L429.1,615.5 L431.3,626.5 L434.5,637.4 L437.9,648.3 L440.2,659.3 L440.2,666.0 L439.6,665.8 L439.0,665.6 L438.3,665.3 L437.7,665.0 L437.1,664.6 L436.4,664.1 L435.8,663.4 L435.1,662.6 L432.8,648.3 L429.4,637.4 L426.2,626.5 L424.0,615.5 L423.7,604.6 L423.7,593.6 L424.0,582.7 L425.4,571.8 L427.9,560.8 L431.2,549.9 L435.0,539.0 L439.3,528.0 L443.8,517.1 L448.3,506.1 L452.5,495.2 L456.3,484.3 L459.6,473.3 L461.9,462.4 L463.3,451.4 L463.5,440.5 L463.5,429.6 L463.5,418.6 L463.5,407.7 L463.5,396.8 L463.5,385.8 L463.5,374.9 L463.5,363.9 L463.5,353.0 Z" fill="#bb8266"/>
<path d="M468.6,353.0 L468.6,343.4 L468.9,343.3 L469.1,343.2 L469.4,343.2 L469.6,343.1 L469.9,343.1 L470.2,343.1 L470.4,343.0 L470.7,343.0 L470.7,363.9 L470.7,374.9 L470.7,385.8 L470.7,396.8 L470.7,407.7 L470.7,418.6 L470.7,429.6 L470.7,440.5 L470.4,451.4 L469.1,462.4 L466.7,473.3 L463.5,484.3 L459.6,495.2 L455.4,506.1 L450.9,517.1 L446.5,528.0 L442.2,539.0 L438.3,549.9 L435.0,560.8 L432.6,571.8 L431.1,582.7 L430.8,593.6 L430.8,604.6 L431.2,615.5 L433.3,626.5 L436.6,637.4 L439.9,648.3 L442.3,659.3 L442.3,666.3 L442.0,666.3 L441.8,666.2 L441.5,666.2 L441.3,666.2 L441.0,666.1 L440.7,666.1 L440.5,666.1 L440.2,666.0 L437.9,648.3 L434.5,637.4 L431.3,626.5 L429.1,615.5 L428.8,604.6 L428.8,593.6 L429.1,582.7 L430.5,571.8 L433.0,560.8 L436.3,549.9 L440.1,539.0 L444.4,528.0 L448.9,517.1 L453.4,506.1 L457.6,495.2 L461.4,484.3 L464.7,473.3 L467.0,462.4 L468.4,451.4 L468.6,440.5 L468.6,429.6 L468.6,418.6 L468.6,407.7 L468.6,396.8 L468.6,385.8 L468.6,374.9 L468.6,363.9 L468.6,353.0 Z" fill="#0e0b0a"/>
<path d="M478.5,326.0 L478.5,326.0 L480.6,319.4 L482.8,317.3 L484.9,316.3 L487.0,316.0 L489.1,316.3 L491.2,317.3 L493.4,319.4 L495.5,326.0 L495.5,338.2 L495.5,350.4 L495.5,362.6 L495.5,374.8 L495.5,387.1 L495.5,399.3 L495.5,411.5 L495.5,423.7 L495.5,435.9 L495.4,448.1 L494.3,460.3 L491.8,472.5 L488.2,484.7 L483.9,497.0 L479.1,509.2 L474.1,521.4 L469.2,533.6 L464.7,545.8 L460.9,558.0 L457.9,570.2 L456.2,582.4 L455.9,594.6 L455.9,606.9 L456.6,619.1 L458.9,631.3 L462.1,643.5 L465.3,655.7 L467.4,667.9 L467.4,667.9 L465.3,672.5 L463.2,674.0 L461.0,674.7 L458.9,674.9 L456.8,674.7 L454.7,674.0 L452.5,672.5 L450.4,667.9 L448.3,655.7 L445.1,643.5 L441.9,631.3 L439.6,619.1 L438.9,606.9 L438.9,594.6 L439.2,582.4 L440.9,570.2 L443.9,558.0 L447.7,545.8 L452.2,533.6 L457.1,521.4 L462.1,509.2 L466.9,497.0 L471.2,484.7 L474.8,472.5 L477.3,460.3 L478.4,448.1 L478.5,435.9 L478.5,423.7 L478.5,411.5 L478.5,399.3 L478.5,387.1 L478.5,374.8 L478.5,362.6 L478.5,350.4 L478.5,338.2 L478.5,326.0 Z" fill="#7a5d4f" stroke="#0e0b0a" stroke-width="2.2"/>
<path d="M479.5,326.0 L479.5,321.3 L480.2,320.1 L480.8,319.2 L481.4,318.4 L482.1,317.9 L482.7,317.4 L483.3,317.0 L484.0,316.7 L484.6,316.4 L484.6,338.2 L484.6,350.4 L484.6,362.6 L484.6,374.8 L484.6,387.1 L484.6,399.3 L484.6,411.5 L484.6,423.7 L484.6,435.9 L484.6,448.1 L483.4,460.3 L480.9,472.5 L477.3,484.7 L473.0,497.0 L468.2,509.2 L463.2,521.4 L458.4,533.6 L453.8,545.8 L450.0,558.0 L447.1,570.2 L445.4,582.4 L445.0,594.6 L445.0,606.9 L445.7,619.1 L448.0,631.3 L451.3,643.5 L454.4,655.7 L456.5,667.9 L456.5,674.6 L455.9,674.4 L455.3,674.2 L454.6,673.9 L454.0,673.6 L453.3,673.2 L452.7,672.7 L452.1,672.1 L451.4,671.2 L449.3,655.7 L446.2,643.5 L442.9,631.3 L440.6,619.1 L439.9,606.9 L439.9,594.6 L440.3,582.4 L442.0,570.2 L444.9,558.0 L448.7,545.8 L453.3,533.6 L458.1,521.4 L463.1,509.2 L467.9,497.0 L472.2,484.7 L475.8,472.5 L478.3,460.3 L479.5,448.1 L479.5,435.9 L479.5,423.7 L479.5,411.5 L479.5,399.3 L479.5,387.1 L479.5,374.8 L479.5,362.6 L479.5,350.4 L479.5,338.2 L479.5,326.0 Z" fill="#bb8266"/>
<path d="M484.6,326.0 L484.6,316.4 L484.9,316.3 L485.1,316.2 L485.4,316.2 L485.6,316.1 L485.9,316.1 L486.2,316.1 L486.4,316.0 L486.7,316.0 L486.7,338.2 L486.7,350.4 L486.7,362.6 L486.7,374.8 L486.7,387.1 L486.7,399.3 L486.7,411.5 L486.7,423.7 L486.7,435.9 L486.6,448.1 L485.4,460.3 L482.9,472.5 L479.4,484.7 L475.1,497.0 L470.3,509.2 L465.3,521.4 L460.4,533.6 L455.9,545.8 L452.0,558.0 L449.1,570.2 L447.4,582.4 L447.1,594.6 L447.1,606.9 L447.7,619.1 L450.1,631.3 L453.3,643.5 L456.5,655.7 L458.6,667.9 L458.6,674.9 L458.3,674.9 L458.1,674.9 L457.8,674.8 L457.6,674.8 L457.3,674.8 L457.0,674.7 L456.8,674.7 L456.5,674.6 L454.4,655.7 L451.3,643.5 L448.0,631.3 L445.7,619.1 L445.0,606.9 L445.0,594.6 L445.4,582.4 L447.1,570.2 L450.0,558.0 L453.8,545.8 L458.4,533.6 L463.2,521.4 L468.2,509.2 L473.0,497.0 L477.3,484.7 L480.9,472.5 L483.4,460.3 L484.6,448.1 L484.6,435.9 L484.6,423.7 L484.6,411.5 L484.6,399.3 L484.6,387.1 L484.6,374.8 L484.6,362.6 L484.6,350.4 L484.6,338.2 L484.6,326.0 Z" fill="#0e0b0a"/>
<path d="M496.0,312.6 L496.0,312.6 L498.1,306.0 L500.2,303.9 L502.4,302.9 L504.5,302.6 L506.6,302.9 L508.8,303.9 L510.9,306.0 L513.0,312.6 L513.0,325.6 L513.0,338.5 L513.0,351.5 L513.0,364.5 L513.0,377.4 L513.0,390.4 L513.0,403.3 L513.0,416.3 L513.0,429.3 L513.0,442.2 L512.4,455.2 L510.3,468.2 L506.9,481.1 L502.5,494.1 L497.6,507.1 L492.3,520.0 L487.1,533.0 L482.4,546.0 L478.3,558.9 L475.4,571.9 L473.8,584.8 L473.7,597.8 L473.7,610.8 L474.8,623.7 L477.3,636.7 L480.4,649.7 L483.3,662.6 L485.2,675.6 L485.2,675.6 L483.1,680.2 L480.9,681.7 L478.8,682.4 L476.7,682.6 L474.6,682.4 L472.4,681.7 L470.3,680.2 L468.2,675.6 L466.3,662.6 L463.4,649.7 L460.3,636.7 L457.8,623.7 L456.7,610.8 L456.7,597.8 L456.8,584.8 L458.4,571.9 L461.3,558.9 L465.4,546.0 L470.1,533.0 L475.3,520.0 L480.6,507.1 L485.5,494.1 L489.9,481.1 L493.3,468.2 L495.4,455.2 L496.0,442.2 L496.0,429.3 L496.0,416.3 L496.0,403.3 L496.0,390.4 L496.0,377.4 L496.0,364.5 L496.0,351.5 L496.0,338.5 L496.0,325.6 L496.0,312.6 Z" fill="#7a5d4f" stroke="#0e0b0a" stroke-width="2.2"/>
<path d="M497.0,312.6 L497.0,307.9 L497.7,306.7 L498.3,305.8 L498.9,305.0 L499.6,304.5 L500.2,304.0 L500.8,303.6 L501.5,303.3 L502.1,303.0 L502.1,325.6 L502.1,338.5 L502.1,351.5 L502.1,364.5 L502.1,377.4 L502.1,390.4 L502.1,403.3 L502.1,416.3 L502.1,429.3 L502.1,442.2 L501.6,455.2 L499.4,468.2 L496.0,481.1 L491.7,494.1 L486.7,507.1 L481.4,520.0 L476.3,533.0 L471.5,546.0 L467.5,558.9 L464.5,571.9 L463.0,584.8 L462.8,597.8 L462.8,610.8 L463.9,623.7 L466.4,636.7 L469.5,649.7 L472.4,662.6 L474.3,675.6 L474.3,682.3 L473.7,682.1 L473.0,681.9 L472.4,681.6 L471.7,681.3 L471.1,680.9 L470.5,680.4 L469.8,679.7 L469.2,678.9 L467.3,662.6 L464.4,649.7 L461.3,636.7 L458.8,623.7 L457.7,610.8 L457.7,597.8 L457.9,584.8 L459.4,571.9 L462.4,558.9 L466.4,546.0 L471.2,533.0 L476.3,520.0 L481.6,507.1 L486.6,494.1 L490.9,481.1 L494.3,468.2 L496.5,455.2 L497.0,442.2 L497.0,429.3 L497.0,416.3 L497.0,403.3 L497.0,390.4 L497.0,377.4 L497.0,364.5 L497.0,351.5 L497.0,338.5 L497.0,325.6 L497.0,312.6 Z" fill="#bb8266"/>
<path d="M502.1,312.6 L502.1,303.0 L502.4,302.9 L502.6,302.8 L502.9,302.8 L503.1,302.7 L503.4,302.7 L503.7,302.7 L503.9,302.6 L504.2,302.6 L504.2,325.6 L504.2,338.5 L504.2,351.5 L504.2,364.5 L504.2,377.4 L504.2,390.4 L504.2,403.3 L504.2,416.3 L504.2,429.3 L504.2,442.2 L503.6,455.2 L501.5,468.2 L498.1,481.1 L493.7,494.1 L488.7,507.1 L483.5,520.0 L478.3,533.0 L473.5,546.0 L469.5,558.9 L466.5,571.9 L465.0,584.8 L464.9,597.8 L464.9,610.8 L466.0,623.7 L468.5,636.7 L471.6,649.7 L474.5,662.6 L476.3,675.6 L476.3,682.6 L476.1,682.6 L475.8,682.6 L475.6,682.5 L475.3,682.5 L475.1,682.5 L474.8,682.4 L474.6,682.4 L474.3,682.3 L472.4,662.6 L469.5,649.7 L466.4,636.7 L463.9,623.7 L462.8,610.8 L462.8,597.8 L463.0,584.8 L464.5,571.9 L467.5,558.9 L471.5,546.0 L476.3,533.0 L481.4,520.0 L486.7,507.1 L491.7,494.1 L496.0,481.1 L499.4,468.2 L501.6,455.2 L502.1,442.2 L502.1,429.3 L502.1,416.3 L502.1,403.3 L502.1,390.4 L502.1,377.4 L502.1,364.5 L502.1,351.5 L502.1,338.5 L502.1,325.6 L502.1,312.6 Z" fill="#0e0b0a"/>
<path d="M512.3,307.4 L512.3,307.4 L514.4,300.8 L516.5,298.7 L518.7,297.7 L520.8,297.4 L522.9,297.7 L525.0,298.7 L527.2,300.8 L529.3,307.4 L529.3,320.8 L529.3,334.1 L529.3,347.5 L529.3,360.9 L529.3,374.2 L529.3,387.6 L529.3,401.0 L529.3,414.3 L529.3,427.7 L529.3,441.1 L528.8,454.5 L526.7,467.8 L523.2,481.2 L518.7,494.6 L513.6,507.9 L508.2,521.3 L503.0,534.7 L498.2,548.0 L494.2,561.4 L491.4,574.8 L490.3,588.1 L490.2,601.5 L490.4,614.9 L491.8,628.2 L494.4,641.6 L497.3,655.0 L500.0,668.4 L501.7,681.7 L501.7,681.7 L499.6,686.4 L497.4,687.8 L495.3,688.5 L493.2,688.7 L491.1,688.5 L488.9,687.8 L486.8,686.4 L484.7,681.7 L483.0,668.4 L480.3,655.0 L477.4,641.6 L474.8,628.2 L473.4,614.9 L473.2,601.5 L473.3,588.1 L474.4,574.8 L477.2,561.4 L481.2,548.0 L486.0,534.7 L491.2,521.3 L496.6,507.9 L501.7,494.6 L506.2,481.2 L509.7,467.8 L511.8,454.5 L512.3,441.1 L512.3,427.7 L512.3,414.3 L512.3,401.0 L512.3,387.6 L512.3,374.2 L512.3,360.9 L512.3,347.5 L512.3,334.1 L512.3,320.8 L512.3,307.4 Z" fill="#7a5d4f" stroke="#0e0b0a" stroke-width="2.2"/>
<path d="M513.3,307.4 L513.3,302.7 L514.0,301.5 L514.6,300.6 L515.2,299.8 L515.9,299.3 L516.5,298.8 L517.1,298.4 L517.8,298.1 L518.4,297.8 L518.4,320.8 L518.4,334.1 L518.4,347.5 L518.4,360.9 L518.4,374.2 L518.4,387.6 L518.4,401.0 L518.4,414.3 L518.4,427.7 L518.4,441.1 L517.9,454.5 L515.8,467.8 L512.3,481.2 L507.9,494.6 L502.7,507.9 L497.4,521.3 L492.1,534.7 L487.3,548.0 L483.3,561.4 L480.6,574.8 L479.4,588.1 L479.4,601.5 L479.5,614.9 L481.0,628.2 L483.5,641.6 L486.5,655.0 L489.1,668.4 L490.8,681.7 L490.8,688.4 L490.2,688.3 L489.5,688.0 L488.9,687.8 L488.3,687.4 L487.6,687.0 L487.0,686.5 L486.4,685.9 L485.7,685.0 L484.0,668.4 L481.4,655.0 L478.4,641.6 L475.9,628.2 L474.4,614.9 L474.3,601.5 L474.3,588.1 L475.5,574.8 L478.2,561.4 L482.2,548.0 L487.0,534.7 L492.3,521.3 L497.6,507.9 L502.8,494.6 L507.2,481.2 L510.7,467.8 L512.8,454.5 L513.3,441.1 L513.3,427.7 L513.3,414.3 L513.3,401.0 L513.3,387.6 L513.3,374.2 L513.3,360.9 L513.3,347.5 L513.3,334.1 L513.3,320.8 L513.3,307.4 Z" fill="#bb8266"/>
<path d="M518.4,307.4 L518.4,297.8 L518.7,297.7 L518.9,297.6 L519.2,297.6 L519.4,297.5 L519.7,297.5 L519.9,297.5 L520.2,297.4 L520.5,297.4 L520.5,320.8 L520.5,334.1 L520.5,347.5 L520.5,360.9 L520.5,374.2 L520.5,387.6 L520.5,401.0 L520.5,414.3 L520.5,427.7 L520.5,441.1 L520.0,454.5 L517.9,467.8 L514.4,481.2 L509.9,494.6 L504.8,507.9 L499.4,521.3 L494.1,534.7 L489.3,548.0 L485.4,561.4 L482.6,574.8 L481.4,588.1 L481.4,601.5 L481.5,614.9 L483.0,628.2 L485.6,641.6 L488.5,655.0 L491.2,668.4 L492.9,681.7 L492.9,688.7 L492.6,688.7 L492.3,688.7 L492.1,688.7 L491.8,688.6 L491.6,688.6 L491.3,688.6 L491.1,688.5 L490.8,688.4 L489.1,668.4 L486.5,655.0 L483.5,641.6 L481.0,628.2 L479.5,614.9 L479.4,601.5 L479.4,588.1 L480.6,574.8 L483.3,561.4 L487.3,548.0 L492.1,534.7 L497.4,521.3 L502.7,507.9 L507.9,494.6 L512.3,481.2 L515.8,467.8 L517.9,454.5 L518.4,441.1 L518.4,427.7 L518.4,414.3 L518.4,401.0 L518.4,387.6 L518.4,374.2 L518.4,360.9 L518.4,347.5 L518.4,334.1 L518.4,320.8 L518.4,307.4 Z" fill="#0e0b0a"/>
<path d="M529.8,308.0 L529.8,308.0 L531.9,301.4 L534.0,299.3 L536.2,298.3 L538.3,298.0 L540.4,298.3 L542.5,299.3 L544.7,301.4 L546.8,308.0 L546.8,321.5 L546.8,335.0 L546.8,348.6 L546.8,362.1 L546.8,375.6 L546.8,389.1 L546.8,402.7 L546.8,416.2 L546.8,429.7 L546.8,443.2 L546.1,456.8 L543.7,470.3 L540.0,483.8 L535.3,497.3 L530.1,510.9 L524.7,524.4 L519.4,537.9 L514.8,551.4 L511.1,565.0 L508.7,578.5 L508.0,592.0 L508.0,605.5 L508.4,619.1 L510.1,632.6 L512.6,646.1 L515.4,659.6 L517.9,673.1 L519.4,686.7 L519.4,686.7 L517.3,691.3 L515.2,692.7 L513.0,693.5 L510.9,693.7 L508.8,693.5 L506.7,692.7 L504.5,691.3 L502.4,686.7 L500.9,673.1 L498.4,659.6 L495.6,646.1 L493.1,632.6 L491.4,619.1 L491.0,605.5 L491.0,592.0 L491.7,578.5 L494.1,565.0 L497.8,551.4 L502.4,537.9 L507.7,524.4 L513.1,510.9 L518.3,497.3 L523.0,483.8 L526.7,470.3 L529.1,456.8 L529.8,443.2 L529.8,429.7 L529.8,416.2 L529.8,402.7 L529.8,389.1 L529.8,375.6 L529.8,362.1 L529.8,348.6 L529.8,335.0 L529.8,321.5 L529.8,308.0 Z" fill="#7a5d4f" stroke="#0e0b0a" stroke-width="2.2"/>
<path d="M530.8,308.0 L530.8,303.3 L531.5,302.1 L532.1,301.2 L532.7,300.4 L533.4,299.9 L534.0,299.4 L534.6,299.0 L535.3,298.7 L535.9,298.4 L535.9,321.5 L535.9,335.0 L535.9,348.6 L535.9,362.1 L535.9,375.6 L535.9,389.1 L535.9,402.7 L535.9,416.2 L535.9,429.7 L535.9,443.2 L535.2,456.8 L532.8,470.3 L529.1,483.8 L524.4,497.3 L519.2,510.9 L513.8,524.4 L508.6,537.9 L503.9,551.4 L500.2,565.0 L497.8,578.5 L497.1,592.0 L497.1,605.5 L497.5,619.1 L499.2,632.6 L501.8,646.1 L504.6,659.6 L507.0,673.1 L508.5,686.7 L508.5,693.4 L507.9,693.2 L507.3,693.0 L506.6,692.7 L506.0,692.4 L505.3,692.0 L504.7,691.5 L504.1,690.8 L503.4,690.0 L501.9,673.1 L499.5,659.6 L496.7,646.1 L494.1,632.6 L492.4,619.1 L492.0,605.5 L492.0,592.0 L492.7,578.5 L495.1,565.0 L498.8,551.4 L503.5,537.9 L508.7,524.4 L514.1,510.9 L519.3,497.3 L524.0,483.8 L527.7,470.3 L530.1,456.8 L530.8,443.2 L530.8,429.7 L530.8,416.2 L530.8,402.7 L530.8,389.1 L530.8,375.6 L530.8,362.1 L530.8,348.6 L530.8,335.0 L530.8,321.5 L530.8,308.0 Z" fill="#bb8266"/>
<path d="M535.9,308.0 L535.9,298.4 L536.2,298.3 L536.4,298.2 L536.7,298.2 L536.9,298.1 L537.2,298.1 L537.4,298.1 L537.7,298.0 L538.0,298.0 L538.0,321.5 L538.0,335.0 L538.0,348.6 L538.0,362.1 L538.0,375.6 L538.0,389.1 L538.0,402.7 L538.0,416.2 L538.0,429.7 L538.0,443.2 L537.2,456.8 L534.8,470.3 L531.1,483.8 L526.4,497.3 L521.2,510.9 L515.8,524.4 L510.6,537.9 L505.9,551.4 L502.2,565.0 L499.9,578.5 L499.2,592.0 L499.2,605.5 L499.5,619.1 L501.3,632.6 L503.8,646.1 L506.6,659.6 L509.1,673.1 L510.6,686.7 L510.6,693.7 L510.3,693.7 L510.1,693.6 L509.8,693.6 L509.6,693.6 L509.3,693.5 L509.0,693.5 L508.8,693.5 L508.5,693.4 L507.0,673.1 L504.6,659.6 L501.8,646.1 L499.2,632.6 L497.5,619.1 L497.1,605.5 L497.1,592.0 L497.8,578.5 L500.2,565.0 L503.9,551.4 L508.6,537.9 L513.8,524.4 L519.2,510.9 L524.4,497.3 L529.1,483.8 L532.8,470.3 L535.2,456.8 L535.9,443.2 L535.9,429.7 L535.9,416.2 L535.9,402.7 L535.9,389.1 L535.9,375.6 L535.9,362.1 L535.9,348.6 L535.9,335.0 L535.9,321.5 L535.9,308.0 Z" fill="#0e0b0a"/>
<path d="M546.2,311.5 L546.2,311.5 L548.3,304.9 L550.5,302.8 L552.6,301.8 L554.7,301.5 L556.8,301.8 L559.0,302.8 L561.1,304.9 L563.2,311.5 L563.2,325.0 L563.2,338.5 L563.2,352.0 L563.2,365.5 L563.2,379.0 L563.2,392.5 L563.2,406.0 L563.2,419.5 L563.2,433.0 L563.2,446.5 L562.1,459.9 L559.3,473.4 L555.4,486.9 L550.6,500.4 L545.4,513.9 L540.0,527.4 L534.9,540.9 L530.5,554.4 L527.1,567.9 L525.1,581.4 L524.7,594.9 L524.7,608.4 L525.3,621.9 L527.1,635.4 L529.6,648.9 L532.3,662.4 L534.6,675.9 L536.0,689.4 L536.0,689.4 L533.9,694.0 L531.8,695.4 L529.6,696.1 L527.5,696.4 L525.4,696.1 L523.3,695.4 L521.1,694.0 L519.0,689.4 L517.6,675.9 L515.3,662.4 L512.6,648.9 L510.1,635.4 L508.3,621.9 L507.7,608.4 L507.7,594.9 L508.1,581.4 L510.1,567.9 L513.5,554.4 L517.9,540.9 L523.0,527.4 L528.4,513.9 L533.6,500.4 L538.4,486.9 L542.3,473.4 L545.1,459.9 L546.2,446.5 L546.2,433.0 L546.2,419.5 L546.2,406.0 L546.2,392.5 L546.2,379.0 L546.2,365.5 L546.2,352.0 L546.2,338.5 L546.2,325.0 L546.2,311.5 Z" fill="#7a5d4f" stroke="#0e0b0a" stroke-width="2.2"/>
<path d="M547.2,311.5 L547.2,306.8 L547.9,305.6 L548.5,304.7 L549.1,303.9 L549.8,303.4 L550.4,302.9 L551.0,302.5 L551.7,302.2 L552.3,301.9 L552.3,325.0 L552.3,338.5 L552.3,352.0 L552.3,365.5 L552.3,379.0 L552.3,392.5 L552.3,406.0 L552.3,419.5 L552.3,433.0 L552.3,446.5 L551.2,459.9 L548.5,473.4 L544.5,486.9 L539.7,500.4 L534.5,513.9 L529.1,527.4 L524.0,540.9 L519.6,554.4 L516.2,567.9 L514.2,581.4 L513.8,594.9 L513.8,608.4 L514.4,621.9 L516.2,635.4 L518.7,648.9 L521.4,662.4 L523.7,675.9 L525.1,689.4 L525.1,696.1 L524.5,695.9 L523.9,695.7 L523.2,695.4 L522.6,695.1 L521.9,694.6 L521.3,694.1 L520.7,693.5 L520.0,692.7 L518.6,675.9 L516.3,662.4 L513.6,648.9 L511.1,635.4 L509.3,621.9 L508.7,608.4 L508.7,594.9 L509.1,581.4 L511.1,567.9 L514.5,554.4 L518.9,540.9 L524.0,527.4 L529.4,513.9 L534.6,500.4 L539.4,486.9 L543.4,473.4 L546.1,459.9 L547.2,446.5 L547.2,433.0 L547.2,419.5 L547.2,406.0 L547.2,392.5 L547.2,379.0 L547.2,365.5 L547.2,352.0 L547.2,338.5 L547.2,325.0 L547.2,311.5 Z" fill="#bb8266"/>
<path d="M552.3,311.5 L552.3,301.9 L552.6,301.8 L552.8,301.7 L553.1,301.7 L553.3,301.6 L553.6,301.6 L553.9,301.6 L554.1,301.5 L554.4,301.5 L554.4,325.0 L554.4,338.5 L554.4,352.0 L554.4,365.5 L554.4,379.0 L554.4,392.5 L554.4,406.0 L554.4,419.5 L554.4,433.0 L554.3,446.5 L553.2,459.9 L550.5,473.4 L546.6,486.9 L541.8,500.4 L536.5,513.9 L531.2,527.4 L526.1,540.9 L521.6,554.4 L518.2,567.9 L516.2,581.4 L515.8,594.9 L515.8,608.4 L516.4,621.9 L518.2,635.4 L520.7,648.9 L523.4,662.4 L525.7,675.9 L527.2,689.4 L527.2,696.4 L526.9,696.3 L526.7,696.3 L526.4,696.3 L526.1,696.3 L525.9,696.2 L525.6,696.2 L525.4,696.1 L525.1,696.1 L523.7,675.9 L521.4,662.4 L518.7,648.9 L516.2,635.4 L514.4,621.9 L513.8,608.4 L513.8,594.9 L514.2,581.4 L516.2,567.9 L519.6,554.4 L524.0,540.9 L529.1,527.4 L534.5,513.9 L539.7,500.4 L544.5,486.9 L548.5,473.4 L551.2,459.9 L552.3,446.5 L552.3,433.0 L552.3,419.5 L552.3,406.0 L552.3,392.5 L552.3,379.0 L552.3,365.5 L552.3,352.0 L552.3,338.5 L552.3,325.0 L552.3,311.5 Z" fill="#0e0b0a"/>
<path d="M563.5,318.5 L563.5,318.5 L565.6,311.9 L567.8,309.8 L569.9,308.8 L572.0,308.5 L574.1,308.8 L576.2,309.8 L578.4,311.9 L580.5,318.5 L580.5,331.8 L580.5,345.2 L580.5,358.5 L580.5,371.9 L580.5,385.2 L580.5,398.6 L580.5,411.9 L580.5,425.2 L580.5,438.6 L580.2,451.9 L578.5,465.3 L575.3,478.6 L571.1,492.0 L566.1,505.3 L560.9,518.7 L555.7,532.0 L550.9,545.3 L546.8,558.7 L543.8,572.0 L542.3,585.4 L542.2,598.7 L542.2,612.1 L543.1,625.4 L545.0,638.7 L547.5,652.1 L550.0,665.4 L552.2,678.8 L553.5,692.1 L553.5,692.1 L551.4,696.7 L549.3,698.2 L547.1,698.9 L545.0,699.1 L542.9,698.9 L540.8,698.2 L538.6,696.7 L536.5,692.1 L535.2,678.8 L533.0,665.4 L530.5,652.1 L528.0,638.7 L526.1,625.4 L525.2,612.1 L525.2,598.7 L525.3,585.4 L526.8,572.0 L529.8,558.7 L533.9,545.3 L538.7,532.0 L543.9,518.7 L549.1,505.3 L554.1,492.0 L558.3,478.6 L561.5,465.3 L563.2,451.9 L563.5,438.6 L563.5,425.2 L563.5,411.9 L563.5,398.6 L563.5,385.2 L563.5,371.9 L563.5,358.5 L563.5,345.2 L563.5,331.8 L563.5,318.5 Z" fill="#7a5d4f" stroke="#0e0b0a" stroke-width="2.2"/>
<path d="M564.5,318.5 L564.5,313.8 L565.2,312.6 L565.8,311.7 L566.4,310.9 L567.1,310.4 L567.7,309.9 L568.3,309.5 L569.0,309.2 L569.6,308.9 L569.6,331.8 L569.6,345.2 L569.6,358.5 L569.6,371.9 L569.6,385.2 L569.6,398.6 L569.6,411.9 L569.6,425.2 L569.6,438.6 L569.4,451.9 L567.6,465.3 L564.4,478.6 L560.2,492.0 L555.3,505.3 L550.0,518.7 L544.8,532.0 L540.0,545.3 L535.9,558.7 L533.0,572.0 L531.5,585.4 L531.3,598.7 L531.4,612.1 L532.3,625.4 L534.2,638.7 L536.6,652.1 L539.1,665.4 L541.3,678.8 L542.6,692.1 L542.6,698.8 L542.0,698.7 L541.4,698.4 L540.7,698.2 L540.1,697.8 L539.4,697.4 L538.8,696.9 L538.2,696.3 L537.5,695.4 L536.2,678.8 L534.0,665.4 L531.5,652.1 L529.1,638.7 L527.2,625.4 L526.3,612.1 L526.2,598.7 L526.4,585.4 L527.9,572.0 L530.8,558.7 L534.9,545.3 L539.7,532.0 L544.9,518.7 L550.2,505.3 L555.1,492.0 L559.3,478.6 L562.5,465.3 L564.3,451.9 L564.5,438.6 L564.5,425.2 L564.5,411.9 L564.5,398.6 L564.5,385.2 L564.5,371.9 L564.5,358.5 L564.5,345.2 L564.5,331.8 L564.5,318.5 Z" fill="#bb8266"/>
<path d="M569.6,318.5 L569.6,308.9 L569.9,308.8 L570.1,308.7 L570.4,308.7 L570.6,308.6 L570.9,308.6 L571.1,308.6 L571.4,308.5 L571.7,308.5 L571.7,331.8 L571.7,345.2 L571.7,358.5 L571.7,371.9 L571.7,385.2 L571.7,398.6 L571.7,411.9 L571.7,425.2 L571.7,438.6 L571.4,451.9 L569.6,465.3 L566.4,478.6 L562.2,492.0 L557.3,505.3 L552.1,518.7 L546.9,532.0 L542.0,545.3 L538.0,558.7 L535.0,572.0 L533.5,585.4 L533.4,598.7 L533.4,612.1 L534.3,625.4 L536.2,638.7 L538.6,652.1 L541.2,665.4 L543.3,678.8 L544.7,692.1 L544.7,699.1 L544.4,699.1 L544.2,699.1 L543.9,699.1 L543.6,699.0 L543.4,699.0 L543.1,698.9 L542.9,698.9 L542.6,698.8 L541.3,678.8 L539.1,665.4 L536.6,652.1 L534.2,638.7 L532.3,625.4 L531.4,612.1 L531.3,598.7 L531.5,585.4 L533.0,572.0 L535.9,558.7 L540.0,545.3 L544.8,532.0 L550.0,518.7 L555.3,505.3 L560.2,492.0 L564.4,478.6 L567.6,465.3 L569.4,451.9 L569.6,438.6 L569.6,425.2 L569.6,411.9 L569.6,398.6 L569.6,385.2 L569.6,371.9 L569.6,358.5 L569.6,345.2 L569.6,331.8 L569.6,318.5 Z" fill="#0e0b0a"/>
<path d="M581.2,328.0 L581.2,328.0 L583.3,321.4 L585.5,319.3 L587.6,318.3 L589.7,318.0 L591.8,318.3 L594.0,319.3 L596.1,321.4 L598.2,328.0 L598.2,341.1 L598.2,354.1 L598.2,367.2 L598.2,380.3 L598.2,393.3 L598.2,406.4 L598.2,419.5 L598.2,432.5 L598.2,445.6 L597.3,458.6 L594.8,471.7 L591.2,484.8 L586.7,497.8 L581.8,510.9 L576.7,524.0 L571.7,537.0 L567.2,550.1 L563.6,563.2 L561.2,576.2 L560.2,589.3 L560.2,602.4 L560.3,615.4 L561.4,628.5 L563.4,641.5 L565.7,654.6 L568.2,667.7 L570.2,680.7 L571.4,693.8 L571.4,693.8 L569.3,698.4 L567.2,699.9 L565.0,700.6 L562.9,700.8 L560.8,700.6 L558.7,699.9 L556.5,698.4 L554.4,693.8 L553.2,680.7 L551.2,667.7 L548.7,654.6 L546.4,641.5 L544.4,628.5 L543.3,615.4 L543.2,602.4 L543.2,589.3 L544.2,576.2 L546.6,563.2 L550.2,550.1 L554.7,537.0 L559.7,524.0 L564.8,510.9 L569.7,497.8 L574.2,484.8 L577.8,471.7 L580.3,458.6 L581.2,445.6 L581.2,432.5 L581.2,419.5 L581.2,406.4 L581.2,393.3 L581.2,380.3 L581.2,367.2 L581.2,354.1 L581.2,341.1 L581.2,328.0 Z" fill="#7a5d4f" stroke="#0e0b0a" stroke-width="2.2"/>
<path d="M582.2,328.0 L582.2,323.3 L582.9,322.1 L583.5,321.2 L584.1,320.4 L584.8,319.9 L585.4,319.4 L586.0,319.0 L586.7,318.7 L587.3,318.4 L587.3,341.1 L587.3,354.1 L587.3,367.2 L587.3,380.3 L587.3,393.3 L587.3,406.4 L587.3,419.5 L587.3,432.5 L587.3,445.6 L586.4,458.6 L583.9,471.7 L580.3,484.8 L575.9,497.8 L570.9,510.9 L565.8,524.0 L560.8,537.0 L556.4,550.1 L552.7,563.2 L550.3,576.2 L549.3,589.3 L549.3,602.4 L549.4,615.4 L550.5,628.5 L552.5,641.5 L554.9,654.6 L557.3,667.7 L559.3,680.7 L560.5,693.8 L560.5,700.5 L559.9,700.3 L559.2,700.1 L558.6,699.8 L558.0,699.5 L557.3,699.1 L556.7,698.6 L556.1,698.0 L555.4,697.1 L554.2,680.7 L552.2,667.7 L549.8,654.6 L547.4,641.5 L545.4,628.5 L544.3,615.4 L544.2,602.4 L544.2,589.3 L545.2,576.2 L547.6,563.2 L551.3,550.1 L555.7,537.0 L560.7,524.0 L565.8,510.9 L570.8,497.8 L575.2,484.8 L578.8,471.7 L581.3,458.6 L582.2,445.6 L582.2,432.5 L582.2,419.5 L582.2,406.4 L582.2,393.3 L582.2,380.3 L582.2,367.2 L582.2,354.1 L582.2,341.1 L582.2,328.0 Z" fill="#bb8266"/>
<path d="M587.3,328.0 L587.3,318.4 L587.6,318.3 L587.8,318.2 L588.1,318.2 L588.3,318.1 L588.6,318.1 L588.9,318.1 L589.1,318.0 L589.4,318.0 L589.4,341.1 L589.4,354.1 L589.4,367.2 L589.4,380.3 L589.4,393.3 L589.4,406.4 L589.4,419.5 L589.4,432.5 L589.4,445.6 L588.4,458.6 L586.0,471.7 L582.4,484.8 L577.9,497.8 L572.9,510.9 L567.8,524.0 L562.9,537.0 L558.4,550.1 L554.8,563.2 L552.3,576.2 L551.4,589.3 L551.4,602.4 L551.5,615.4 L552.6,628.5 L554.5,641.5 L556.9,654.6 L559.3,667.7 L561.3,680.7 L562.6,693.8 L562.6,700.8 L562.3,700.8 L562.1,700.8 L561.8,700.7 L561.5,700.7 L561.3,700.7 L561.0,700.6 L560.8,700.6 L560.5,700.5 L559.3,680.7 L557.3,667.7 L554.9,654.6 L552.5,641.5 L550.5,628.5 L549.4,615.4 L549.3,602.4 L549.3,589.3 L550.3,576.2 L552.7,563.2 L556.4,550.1 L560.8,537.0 L565.8,524.0 L570.9,510.9 L575.9,497.8 L580.3,484.8 L583.9,471.7 L586.4,458.6 L587.3,445.6 L587.3,432.5 L587.3,419.5 L587.3,406.4 L587.3,393.3 L587.3,380.3 L587.3,367.2 L587.3,354.1 L587.3,341.1 L587.3,328.0 Z" fill="#0e0b0a"/>
<path d="M599.8,337.4 L599.8,337.4 L601.9,330.8 L604.0,328.7 L606.2,327.7 L608.3,327.4 L610.4,327.7 L612.5,328.7 L614.7,330.8 L616.8,337.4 L616.8,350.2 L616.8,363.0 L616.8,375.8 L616.8,388.6 L616.8,401.4 L616.8,414.2 L616.8,427.0 L616.8,439.8 L616.5,452.6 L615.1,465.4 L612.5,478.3 L609.1,491.1 L605.2,503.9 L601.0,516.7 L596.7,529.5 L592.7,542.3 L589.3,555.1 L586.6,567.9 L584.9,580.7 L584.6,593.5 L584.6,606.3 L584.8,619.1 L585.9,631.9 L587.6,644.7 L589.6,657.5 L591.5,670.3 L593.1,683.1 L594.1,695.9 L594.1,695.9 L591.9,700.6 L589.8,702.0 L587.7,702.7 L585.6,702.9 L583.4,702.7 L581.3,702.0 L579.2,700.6 L577.1,695.9 L576.1,683.1 L574.5,670.3 L572.6,657.5 L570.6,644.7 L568.9,631.9 L567.8,619.1 L567.6,606.3 L567.6,593.5 L567.9,580.7 L569.6,567.9 L572.3,555.1 L575.7,542.3 L579.7,529.5 L584.0,516.7 L588.2,503.9 L592.1,491.1 L595.5,478.3 L598.1,465.4 L599.5,452.6 L599.8,439.8 L599.8,427.0 L599.8,414.2 L599.8,401.4 L599.8,388.6 L599.8,375.8 L599.8,363.0 L599.8,350.2 L599.8,337.4 Z" fill="#7a5d4f" stroke="#0e0b0a" stroke-width="2.2"/>
<path d="M600.8,337.4 L600.8,332.7 L601.5,331.5 L602.1,330.6 L602.7,329.8 L603.4,329.3 L604.0,328.8 L604.6,328.4 L605.3,328.1 L605.9,327.8 L605.9,350.2 L605.9,363.0 L605.9,375.8 L605.9,388.6 L605.9,401.4 L605.9,414.2 L605.9,427.0 L605.9,439.8 L605.7,452.6 L604.2,465.4 L601.6,478.3 L598.2,491.1 L594.3,503.9 L590.1,516.7 L585.8,529.5 L581.9,542.3 L578.4,555.1 L575.7,567.9 L574.1,580.7 L573.7,593.5 L573.7,606.3 L573.9,619.1 L575.0,631.9 L576.7,644.7 L578.7,657.5 L580.6,670.3 L582.2,683.1 L583.2,695.9 L583.2,702.7 L582.6,702.5 L581.9,702.3 L581.3,702.0 L580.6,701.6 L580.0,701.2 L579.4,700.7 L578.7,700.1 L578.1,699.3 L577.1,683.1 L575.5,670.3 L573.6,657.5 L571.6,644.7 L569.9,631.9 L568.8,619.1 L568.6,606.3 L568.6,593.5 L569.0,580.7 L570.6,567.9 L573.3,555.1 L576.8,542.3 L580.7,529.5 L585.0,516.7 L589.2,503.9 L593.1,491.1 L596.5,478.3 L599.1,465.4 L600.6,452.6 L600.8,439.8 L600.8,427.0 L600.8,414.2 L600.8,401.4 L600.8,388.6 L600.8,375.8 L600.8,363.0 L600.8,350.2 L600.8,337.4 Z" fill="#bb8266"/>
<path d="M605.9,337.4 L605.9,327.8 L606.2,327.7 L606.4,327.6 L606.7,327.6 L606.9,327.5 L607.2,327.5 L607.4,327.5 L607.7,327.4 L608.0,327.4 L608.0,350.2 L608.0,363.0 L608.0,375.8 L608.0,388.6 L608.0,401.4 L608.0,414.2 L608.0,427.0 L608.0,439.8 L607.7,452.6 L606.2,465.4 L603.6,478.3 L600.3,491.1 L596.3,503.9 L592.1,516.7 L587.9,529.5 L583.9,542.3 L580.4,555.1 L577.7,567.9 L576.1,580.7 L575.7,593.5 L575.7,606.3 L576.0,619.1 L577.1,631.9 L578.8,644.7 L580.7,657.5 L582.6,670.3 L584.3,683.1 L585.2,695.9 L585.2,702.9 L585.0,702.9 L584.7,702.9 L584.5,702.9 L584.2,702.8 L584.0,702.8 L583.7,702.8 L583.4,702.7 L583.2,702.7 L582.2,683.1 L580.6,670.3 L578.7,657.5 L576.7,644.7 L575.0,631.9 L573.9,619.1 L573.7,606.3 L573.7,593.5 L574.1,580.7 L575.7,567.9 L578.4,555.1 L581.9,542.3 L585.8,529.5 L590.1,516.7 L594.3,503.9 L598.2,491.1 L601.6,478.3 L604.2,465.4 L605.7,452.6 L605.9,439.8 L605.9,427.0 L605.9,414.2 L605.9,401.4 L605.9,388.6 L605.9,375.8 L605.9,363.0 L605.9,350.2 L605.9,337.4 Z" fill="#0e0b0a"/>
<path d="M616.2,348.0 L616.2,348.0 L618.3,341.4 L620.5,339.3 L622.6,338.3 L624.7,338.0 L626.8,338.3 L629.0,339.3 L631.1,341.4 L633.2,348.0 L633.2,360.5 L633.2,372.9 L633.2,385.4 L633.2,397.9 L633.2,410.4 L633.2,422.8 L633.2,435.3 L633.2,447.8 L632.4,460.2 L630.6,472.7 L628.1,485.2 L625.1,497.6 L621.7,510.1 L618.2,522.6 L614.8,535.1 L611.7,547.5 L609.1,560.0 L607.2,572.5 L606.2,584.9 L606.1,597.4 L606.1,609.9 L606.5,622.3 L607.5,634.8 L608.9,647.3 L610.5,659.8 L612.1,672.2 L613.3,684.7 L614.1,697.2 L614.1,697.2 L612.0,701.8 L609.9,703.2 L607.7,703.9 L605.6,704.2 L603.5,703.9 L601.4,703.2 L599.2,701.8 L597.1,697.2 L596.3,684.7 L595.1,672.2 L593.5,659.8 L591.9,647.3 L590.5,634.8 L589.5,622.3 L589.1,609.9 L589.1,597.4 L589.2,584.9 L590.2,572.5 L592.1,560.0 L594.7,547.5 L597.8,535.1 L601.2,522.6 L604.7,510.1 L608.1,497.6 L611.1,485.2 L613.6,472.7 L615.4,460.2 L616.2,447.8 L616.2,435.3 L616.2,422.8 L616.2,410.4 L616.2,397.9 L616.2,385.4 L616.2,372.9 L616.2,360.5 L616.2,348.0 Z" fill="#7a5d4f" stroke="#0e0b0a" stroke-width="2.2"/>
<path d="M617.2,348.0 L617.2,343.3 L617.9,342.1 L618.5,341.2 L619.1,340.4 L619.8,339.9 L620.4,339.4 L621.0,339.0 L621.7,338.7 L622.3,338.4 L622.3,360.5 L622.3,372.9 L622.3,385.4 L622.3,397.9 L622.3,410.4 L622.3,422.8 L622.3,435.3 L622.3,447.8 L621.5,460.2 L619.7,472.7 L617.2,485.2 L614.2,497.6 L610.8,510.1 L607.3,522.6 L603.9,535.1 L600.8,547.5 L598.2,560.0 L596.3,572.5 L595.3,584.9 L595.2,597.4 L595.2,609.9 L595.6,622.3 L596.6,634.8 L598.0,647.3 L599.6,659.8 L601.2,672.2 L602.5,684.7 L603.2,697.2 L603.2,703.9 L602.6,703.7 L602.0,703.5 L601.3,703.2 L600.7,702.9 L600.0,702.5 L599.4,702.0 L598.8,701.3 L598.1,700.5 L597.4,684.7 L596.1,672.2 L594.5,659.8 L592.9,647.3 L591.5,634.8 L590.5,622.3 L590.1,609.9 L590.1,597.4 L590.2,584.9 L591.2,572.5 L593.1,560.0 L595.7,547.5 L598.8,535.1 L602.2,522.6 L605.7,510.1 L609.1,497.6 L612.1,485.2 L614.6,472.7 L616.4,460.2 L617.2,447.8 L617.2,435.3 L617.2,422.8 L617.2,410.4 L617.2,397.9 L617.2,385.4 L617.2,372.9 L617.2,360.5 L617.2,348.0 Z" fill="#bb8266"/>
<path d="M622.3,348.0 L622.3,338.4 L622.6,338.3 L622.8,338.2 L623.1,338.2 L623.3,338.1 L623.6,338.1 L623.9,338.1 L624.1,338.0 L624.4,338.0 L624.4,360.5 L624.4,372.9 L624.4,385.4 L624.4,397.9 L624.4,410.4 L624.4,422.8 L624.4,435.3 L624.3,447.8 L623.5,460.2 L621.8,472.7 L619.3,485.2 L616.2,497.6 L612.9,510.1 L609.4,522.6 L606.0,535.1 L602.9,547.5 L600.3,560.0 L598.4,572.5 L597.4,584.9 L597.3,597.4 L597.3,609.9 L597.6,622.3 L598.7,634.8 L600.1,647.3 L601.7,659.8 L603.2,672.2 L604.5,684.7 L605.3,697.2 L605.3,704.2 L605.0,704.2 L604.8,704.1 L604.5,704.1 L604.2,704.1 L604.0,704.0 L603.7,704.0 L603.5,703.9 L603.2,703.9 L602.5,684.7 L601.2,672.2 L599.6,659.8 L598.0,647.3 L596.6,634.8 L595.6,622.3 L595.2,609.9 L595.2,597.4 L595.3,584.9 L596.3,572.5 L598.2,560.0 L600.8,547.5 L603.9,535.1 L607.3,522.6 L610.8,510.1 L614.2,497.6 L617.2,485.2 L619.7,472.7 L621.5,460.2 L622.3,447.8 L622.3,435.3 L622.3,422.8 L622.3,410.4 L622.3,397.9 L622.3,385.4 L622.3,372.9 L622.3,360.5 L622.3,348.0 Z" fill="#0e0b0a"/>
<path d="M633.5,358.5 L633.5,358.5 L635.6,351.9 L637.8,349.8 L639.9,348.8 L642.0,348.5 L644.1,348.8 L646.2,349.8 L648.4,351.9 L650.5,358.5 L650.5,370.6 L650.5,382.7 L650.5,394.8 L650.5,406.9 L650.5,419.0 L650.5,431.2 L650.5,443.3 L650.2,455.4 L649.1,467.5 L647.4,479.6 L645.2,491.7 L642.7,503.8 L640.0,515.9 L637.3,528.0 L634.8,540.1 L632.5,552.3 L630.6,564.4 L629.4,576.5 L628.8,588.6 L628.8,600.7 L628.9,612.8 L629.3,624.9 L630.1,637.0 L631.3,649.1 L632.5,661.2 L633.7,673.4 L634.7,685.5 L635.2,697.6 L635.2,697.6 L633.1,702.2 L631.0,703.6 L628.9,704.4 L626.7,704.6 L624.6,704.4 L622.5,703.6 L620.4,702.2 L618.2,697.6 L617.7,685.5 L616.7,673.4 L615.5,661.2 L614.3,649.1 L613.1,637.0 L612.3,624.9 L611.9,612.8 L611.8,600.7 L611.8,588.6 L612.4,576.5 L613.6,564.4 L615.5,552.3 L617.8,540.1 L620.3,528.0 L623.0,515.9 L625.7,503.8 L628.2,491.7 L630.4,479.6 L632.1,467.5 L633.2,455.4 L633.5,443.3 L633.5,431.2 L633.5,419.0 L633.5,406.9 L633.5,394.8 L633.5,382.7 L633.5,370.6 L633.5,358.5 Z" fill="#7a5d4f" stroke="#0e0b0a" stroke-width="2.2"/>
<path d="M634.5,358.5 L634.5,353.8 L635.2,352.6 L635.8,351.7 L636.4,350.9 L637.1,350.4 L637.7,349.9 L638.3,349.5 L639.0,349.2 L639.6,348.9 L639.6,370.6 L639.6,382.7 L639.6,394.8 L639.6,406.9 L639.6,419.0 L639.6,431.2 L639.6,443.3 L639.3,455.4 L638.2,467.5 L636.5,479.6 L634.3,491.7 L631.8,503.8 L629.1,515.9 L626.4,528.0 L623.9,540.1 L621.6,552.3 L619.8,564.4 L618.5,576.5 L618.0,588.6 L618.0,600.7 L618.0,612.8 L618.4,624.9 L619.3,637.0 L620.4,649.1 L621.6,661.2 L622.8,673.4 L623.8,685.5 L624.4,697.6 L624.4,704.3 L623.7,704.1 L623.1,703.9 L622.4,703.6 L621.8,703.3 L621.2,702.9 L620.5,702.4 L619.9,701.7 L619.3,700.9 L618.7,685.5 L617.7,673.4 L616.5,661.2 L615.3,649.1 L614.2,637.0 L613.3,624.9 L612.9,612.8 L612.9,600.7 L612.9,588.6 L613.4,576.5 L614.7,564.4 L616.5,552.3 L618.8,540.1 L621.3,528.0 L624.0,515.9 L626.7,503.8 L629.2,491.7 L631.4,479.6 L633.1,467.5 L634.2,455.4 L634.5,443.3 L634.5,431.2 L634.5,419.0 L634.5,406.9 L634.5,394.8 L634.5,382.7 L634.5,370.6 L634.5,358.5 Z" fill="#bb8266"/>
<path d="M639.6,358.5 L639.6,348.9 L639.9,348.8 L640.1,348.7 L640.4,348.7 L640.6,348.6 L640.9,348.6 L641.1,348.6 L641.4,348.5 L641.7,348.5 L641.7,370.6 L641.7,382.7 L641.7,394.8 L641.7,406.9 L641.7,419.0 L641.7,431.2 L641.7,443.3 L641.3,455.4 L640.3,467.5 L638.5,479.6 L636.4,491.7 L633.9,503.8 L631.2,515.9 L628.5,528.0 L625.9,540.1 L623.6,552.3 L621.8,564.4 L620.5,576.5 L620.0,588.6 L620.0,600.7 L620.0,612.8 L620.4,624.9 L621.3,637.0 L622.4,649.1 L623.7,661.2 L624.8,673.4 L625.8,685.5 L626.4,697.6 L626.4,704.6 L626.1,704.6 L625.9,704.5 L625.6,704.5 L625.4,704.5 L625.1,704.5 L624.9,704.4 L624.6,704.4 L624.4,704.3 L623.8,685.5 L622.8,673.4 L621.6,661.2 L620.4,649.1 L619.3,637.0 L618.4,624.9 L618.0,612.8 L618.0,600.7 L618.0,588.6 L618.5,576.5 L619.8,564.4 L621.6,552.3 L623.9,540.1 L626.4,528.0 L629.1,515.9 L631.8,503.8 L634.3,491.7 L636.5,479.6 L638.2,467.5 L639.3,455.4 L639.6,443.3 L639.6,431.2 L639.6,419.0 L639.6,406.9 L639.6,394.8 L639.6,382.7 L639.6,370.6 L639.6,358.5 Z" fill="#0e0b0a"/>
<path d="M440.5,488.0 L440.5,488.0 L442.6,481.4 L444.8,479.3 L446.9,478.3 L449.0,478.0 L451.1,478.3 L453.2,479.3 L455.4,481.4 L457.5,488.0 L455.4,493.8 L453.2,499.6 L450.9,505.4 L448.5,511.3 L446.1,517.1 L443.7,522.9 L441.4,528.7 L439.0,534.5 L436.8,540.3 L434.7,546.2 L432.8,552.0 L431.0,557.8 L429.5,563.6 L428.2,569.4 L427.1,575.2 L426.4,581.1 L426.0,586.9 L426.0,592.7 L426.0,598.5 L426.0,604.3 L426.0,610.1 L426.5,616.0 L427.8,621.8 L429.6,627.6 L431.8,633.4 L433.9,639.2 L435.8,645.0 L437.3,650.9 L437.3,650.9 L435.1,655.5 L433.0,656.9 L430.9,657.6 L428.8,657.9 L426.6,657.6 L424.5,656.9 L422.4,655.5 L420.3,650.9 L418.8,645.0 L416.9,639.2 L414.8,633.4 L412.6,627.6 L410.8,621.8 L409.5,616.0 L409.0,610.1 L409.0,604.3 L409.0,598.5 L409.0,592.7 L409.0,586.9 L409.4,581.1 L410.1,575.2 L411.2,569.4 L412.5,563.6 L414.0,557.8 L415.8,552.0 L417.7,546.2 L419.8,540.3 L422.0,534.5 L424.4,528.7 L426.7,522.9 L429.1,517.1 L431.5,511.3 L433.9,505.4 L436.2,499.6 L438.4,493.8 L440.5,488.0 Z" fill="#7a5d4f" stroke="#0e0b0a" stroke-width="2.2"/>
<path d="M441.5,488.0 L441.5,483.3 L442.2,482.1 L442.8,481.2 L443.4,480.4 L444.1,479.9 L444.7,479.4 L445.3,479.0 L446.0,478.7 L446.6,478.4 L444.5,493.8 L442.3,499.6 L440.0,505.4 L437.7,511.3 L435.3,517.1 L432.9,522.9 L430.5,528.7 L428.2,534.5 L425.9,540.3 L423.8,546.2 L421.9,552.0 L420.1,557.8 L418.6,563.6 L417.3,569.4 L416.2,575.2 L415.5,581.1 L415.1,586.9 L415.1,592.7 L415.1,598.5 L415.1,604.3 L415.1,610.1 L415.6,616.0 L416.9,621.8 L418.8,627.6 L420.9,633.4 L423.0,639.2 L425.0,645.0 L426.4,650.9 L426.4,657.6 L425.8,657.4 L425.1,657.2 L424.5,656.9 L423.8,656.6 L423.2,656.2 L422.6,655.6 L421.9,655.0 L421.3,654.2 L419.9,645.0 L417.9,639.2 L415.8,633.4 L413.7,627.6 L411.8,621.8 L410.5,616.0 L410.0,610.1 L410.0,604.3 L410.0,598.5 L410.0,592.7 L410.0,586.9 L410.4,581.1 L411.1,575.2 L412.2,569.4 L413.5,563.6 L415.0,557.8 L416.8,552.0 L418.7,546.2 L420.8,540.3 L423.1,534.5 L425.4,528.7 L427.8,522.9 L430.2,517.1 L432.6,511.3 L434.9,505.4 L437.2,499.6 L439.4,493.8 L441.5,488.0 Z" fill="#bb8266"/>
<path d="M446.6,488.0 L446.6,478.4 L446.9,478.3 L447.1,478.2 L447.4,478.2 L447.6,478.1 L447.9,478.1 L448.2,478.1 L448.4,478.0 L448.7,478.0 L446.6,493.8 L444.4,499.6 L442.1,505.4 L439.7,511.3 L437.3,517.1 L434.9,522.9 L432.5,528.7 L430.2,534.5 L428.0,540.3 L425.9,546.2 L423.9,552.0 L422.2,557.8 L420.6,563.6 L419.3,569.4 L418.3,575.2 L417.6,581.1 L417.2,586.9 L417.1,592.7 L417.1,598.5 L417.1,604.3 L417.1,610.1 L417.6,616.0 L418.9,621.8 L420.8,627.6 L422.9,633.4 L425.1,639.2 L427.0,645.0 L428.4,650.9 L428.4,657.9 L428.2,657.8 L427.9,657.8 L427.7,657.8 L427.4,657.8 L427.2,657.7 L426.9,657.7 L426.6,657.6 L426.4,657.6 L425.0,645.0 L423.0,639.2 L420.9,633.4 L418.8,627.6 L416.9,621.8 L415.6,616.0 L415.1,610.1 L415.1,604.3 L415.1,598.5 L415.1,592.7 L415.1,586.9 L415.5,581.1 L416.2,575.2 L417.3,569.4 L418.6,563.6 L420.1,557.8 L421.9,552.0 L423.8,546.2 L425.9,540.3 L428.2,534.5 L430.5,528.7 L432.9,522.9 L435.3,517.1 L437.7,511.3 L440.0,505.4 L442.3,499.6 L444.5,493.8 L446.6,488.0 Z" fill="#0e0b0a"/>
<path d="M403.5,555.0 L403.5,555.0 L405.6,548.4 L407.8,546.3 L409.9,545.3 L412.0,545.0 L414.1,545.3 L416.2,546.3 L418.4,548.4 L420.5,555.0 L419.6,558.1 L418.7,561.2 L417.9,564.4 L417.2,567.5 L416.6,570.6 L416.0,573.7 L415.6,576.9 L415.2,580.0 L414.9,583.1 L414.7,586.2 L414.6,589.4 L414.6,592.5 L414.6,595.6 L414.6,598.7 L414.6,601.9 L414.6,605.0 L414.6,608.1 L414.7,611.2 L415.0,614.3 L415.8,617.5 L416.8,620.6 L418.0,623.7 L419.3,626.8 L420.7,630.0 L422.2,633.1 L423.5,636.2 L424.7,639.3 L425.6,642.5 L425.6,642.5 L423.5,647.1 L421.4,648.5 L419.3,649.2 L417.1,649.5 L415.0,649.2 L412.9,648.5 L410.8,647.1 L408.6,642.5 L407.7,639.3 L406.5,636.2 L405.2,633.1 L403.7,630.0 L402.3,626.8 L401.0,623.7 L399.8,620.6 L398.8,617.5 L398.0,614.3 L397.7,611.2 L397.6,608.1 L397.6,605.0 L397.6,601.9 L397.6,598.7 L397.6,595.6 L397.6,592.5 L397.6,589.4 L397.7,586.2 L397.9,583.1 L398.2,580.0 L398.6,576.9 L399.0,573.7 L399.6,570.6 L400.2,567.5 L400.9,564.4 L401.7,561.2 L402.6,558.1 L403.5,555.0 Z" fill="#7a5d4f" stroke="#0e0b0a" stroke-width="2.2"/>
<path d="M404.5,555.0 L404.5,550.3 L405.2,549.1 L405.8,548.2 L406.4,547.4 L407.1,546.9 L407.7,546.4 L408.3,546.0 L409.0,545.7 L409.6,545.4 L408.7,558.1 L407.8,561.2 L407.1,564.4 L406.3,567.5 L405.7,570.6 L405.1,573.7 L404.7,576.9 L404.3,580.0 L404.0,583.1 L403.8,586.2 L403.8,589.4 L403.8,592.5 L403.8,595.6 L403.8,598.7 L403.8,601.9 L403.8,605.0 L403.8,608.1 L403.8,611.2 L404.2,614.3 L404.9,617.5 L405.9,620.6 L407.1,623.7 L408.4,626.8 L409.9,630.0 L411.3,633.1 L412.6,636.2 L413.8,639.3 L414.8,642.5 L414.8,649.2 L414.1,649.0 L413.5,648.8 L412.8,648.5 L412.2,648.2 L411.6,647.7 L410.9,647.2 L410.3,646.6 L409.7,645.8 L408.7,639.3 L407.5,636.2 L406.2,633.1 L404.8,630.0 L403.3,626.8 L402.0,623.7 L400.8,620.6 L399.8,617.5 L399.1,614.3 L398.7,611.2 L398.7,608.1 L398.7,605.0 L398.7,601.9 L398.7,598.7 L398.7,595.6 L398.7,592.5 L398.7,589.4 L398.7,586.2 L398.9,583.1 L399.2,580.0 L399.6,576.9 L400.0,573.7 L400.6,570.6 L401.2,567.5 L402.0,564.4 L402.7,561.2 L403.6,558.1 L404.5,555.0 Z" fill="#bb8266"/>
<path d="M409.6,555.0 L409.6,545.4 L409.9,545.3 L410.1,545.2 L410.4,545.2 L410.6,545.1 L410.9,545.1 L411.2,545.1 L411.4,545.0 L411.7,545.0 L410.7,558.1 L409.9,561.2 L409.1,564.4 L408.4,567.5 L407.7,570.6 L407.2,573.7 L406.7,576.9 L406.3,580.0 L406.1,583.1 L405.9,586.2 L405.8,589.4 L405.8,592.5 L405.8,595.6 L405.8,598.7 L405.8,601.9 L405.8,605.0 L405.8,608.1 L405.8,611.2 L406.2,614.3 L406.9,617.5 L407.9,620.6 L409.1,623.7 L410.5,626.8 L411.9,630.0 L413.3,633.1 L414.6,636.2 L415.8,639.3 L416.8,642.5 L416.8,649.4 L416.5,649.4 L416.3,649.4 L416.0,649.4 L415.8,649.4 L415.5,649.3 L415.3,649.3 L415.0,649.2 L414.8,649.2 L413.8,639.3 L412.6,636.2 L411.3,633.1 L409.9,630.0 L408.4,626.8 L407.1,623.7 L405.9,620.6 L404.9,617.5 L404.2,614.3 L403.8,611.2 L403.8,608.1 L403.8,605.0 L403.8,601.9 L403.8,598.7 L403.8,595.6 L403.8,592.5 L403.8,589.4 L403.8,586.2 L404.0,583.1 L404.3,580.0 L404.7,576.9 L405.1,573.7 L405.7,570.6 L406.3,567.5 L407.1,564.4 L407.8,561.2 L408.7,558.1 L409.6,555.0 Z" fill="#0e0b0a"/>
<path d="M838.4,364.9 L838.4,364.9 L840.5,358.4 L842.5,356.3 L844.6,355.3 L846.6,355.0 L848.7,355.3 L850.8,356.3 L852.8,358.4 L854.9,364.9 L854.9,376.8 L854.9,388.7 L854.9,400.7 L854.9,412.6 L854.9,424.5 L854.9,436.4 L854.9,448.4 L855.4,460.3 L856.4,472.2 L857.8,484.1 L859.5,496.1 L861.4,508.0 L863.3,519.9 L865.3,531.8 L867.1,543.8 L868.7,555.7 L869.9,567.6 L870.7,579.5 L871.0,591.5 L871.0,603.4 L870.9,615.3 L870.5,627.2 L869.9,639.2 L869.1,651.1 L868.2,663.0 L867.3,674.9 L866.6,686.9 L866.2,698.8 L866.2,698.8 L864.1,703.4 L862.1,704.8 L860.0,705.5 L858.0,705.7 L855.9,705.5 L853.8,704.8 L851.8,703.4 L849.7,698.8 L850.1,686.9 L850.8,674.9 L851.7,663.0 L852.6,651.1 L853.4,639.2 L854.0,627.2 L854.4,615.3 L854.5,603.4 L854.5,591.5 L854.2,579.5 L853.4,567.6 L852.2,555.7 L850.6,543.8 L848.8,531.8 L846.8,519.9 L844.9,508.0 L843.0,496.1 L841.3,484.1 L839.9,472.2 L838.9,460.3 L838.4,448.4 L838.4,436.4 L838.4,424.5 L838.4,412.6 L838.4,400.7 L838.4,388.7 L838.4,376.8 L838.4,364.9 Z" fill="#1e1d1d" stroke="#0e0b0a" stroke-width="2.2"/>
<path d="M848.3,364.9 L848.3,355.2 L849.0,355.4 L849.6,355.7 L850.3,356.0 L850.9,356.4 L851.6,357.0 L852.3,357.6 L852.9,358.5 L853.6,359.5 L853.6,376.8 L853.6,388.7 L853.6,400.7 L853.6,412.6 L853.6,424.5 L853.6,436.4 L853.6,448.4 L854.1,460.3 L855.1,472.2 L856.5,484.1 L858.2,496.1 L860.0,508.0 L862.0,519.9 L864.0,531.8 L865.8,543.8 L867.4,555.7 L868.6,567.6 L869.4,579.5 L869.6,591.5 L869.6,603.4 L869.6,615.3 L869.2,627.2 L868.6,639.2 L867.7,651.1 L866.8,663.0 L866.0,674.9 L865.3,686.9 L864.9,698.8 L864.9,702.6 L864.2,703.3 L863.6,703.9 L862.9,704.3 L862.3,704.7 L861.6,705.0 L860.9,705.3 L860.3,705.5 L859.6,705.6 L860.0,686.9 L860.7,674.9 L861.6,663.0 L862.5,651.1 L863.3,639.2 L863.9,627.2 L864.3,615.3 L864.4,603.4 L864.4,591.5 L864.1,579.5 L863.3,567.6 L862.1,555.7 L860.5,543.8 L858.7,531.8 L856.7,519.9 L854.8,508.0 L852.9,496.1 L851.2,484.1 L849.8,472.2 L848.8,460.3 L848.3,448.4 L848.3,436.4 L848.3,424.5 L848.3,412.6 L848.3,400.7 L848.3,388.7 L848.3,376.8 L848.3,364.9 Z" fill="#bb8266"/>
<path d="M855.5,355.9 L855.5,355.9 L857.6,349.4 L859.6,347.3 L861.7,346.3 L863.8,346.0 L865.8,346.3 L867.9,347.3 L869.9,349.4 L872.0,355.9 L872.0,368.2 L872.0,380.4 L872.0,392.7 L872.0,404.9 L872.0,417.2 L872.0,429.4 L872.0,441.7 L872.2,453.9 L873.1,466.2 L874.5,478.4 L876.3,490.7 L878.5,502.9 L880.8,515.2 L883.1,527.4 L885.3,539.7 L887.3,552.0 L888.9,564.2 L890.0,576.5 L890.4,588.7 L890.4,601.0 L890.4,613.2 L890.1,625.5 L889.3,637.7 L888.4,650.0 L887.3,662.2 L886.3,674.5 L885.5,686.7 L885.0,699.0 L885.0,699.0 L882.9,703.6 L880.9,705.0 L878.8,705.7 L876.7,705.9 L874.7,705.7 L872.6,705.0 L870.6,703.6 L868.5,699.0 L869.0,686.7 L869.8,674.5 L870.8,662.2 L871.9,650.0 L872.8,637.7 L873.6,625.5 L873.9,613.2 L873.9,601.0 L873.9,588.7 L873.5,576.5 L872.4,564.2 L870.8,552.0 L868.8,539.7 L866.6,527.4 L864.3,515.2 L862.0,502.9 L859.8,490.7 L858.0,478.4 L856.6,466.2 L855.7,453.9 L855.5,441.7 L855.5,429.4 L855.5,417.2 L855.5,404.9 L855.5,392.7 L855.5,380.4 L855.5,368.2 L855.5,355.9 Z" fill="#1e1d1d" stroke="#0e0b0a" stroke-width="2.2"/>
<path d="M865.4,355.9 L865.4,346.2 L866.1,346.4 L866.7,346.7 L867.4,347.0 L868.0,347.4 L868.7,348.0 L869.4,348.6 L870.0,349.5 L870.7,350.5 L870.7,368.2 L870.7,380.4 L870.7,392.7 L870.7,404.9 L870.7,417.2 L870.7,429.4 L870.7,441.7 L870.9,453.9 L871.7,466.2 L873.2,478.4 L875.0,490.7 L877.2,502.9 L879.5,515.2 L881.8,527.4 L884.0,539.7 L886.0,552.0 L887.6,564.2 L888.7,576.5 L889.1,588.7 L889.1,601.0 L889.1,613.2 L888.7,625.5 L888.0,637.7 L887.0,650.0 L886.0,662.2 L885.0,674.5 L884.2,686.7 L883.7,699.0 L883.7,702.8 L883.0,703.5 L882.4,704.1 L881.7,704.5 L881.0,704.9 L880.4,705.2 L879.7,705.5 L879.1,705.6 L878.4,705.8 L878.9,686.7 L879.7,674.5 L880.7,662.2 L881.8,650.0 L882.7,637.7 L883.5,625.5 L883.8,613.2 L883.8,601.0 L883.8,588.7 L883.4,576.5 L882.3,564.2 L880.7,552.0 L878.7,539.7 L876.5,527.4 L874.2,515.2 L871.9,502.9 L869.7,490.7 L867.9,478.4 L866.5,466.2 L865.6,453.9 L865.4,441.7 L865.4,429.4 L865.4,417.2 L865.4,404.9 L865.4,392.7 L865.4,380.4 L865.4,368.2 L865.4,355.9 Z" fill="#bb8266"/>
<path d="M872.7,343.9 L872.7,343.9 L874.8,337.4 L876.8,335.3 L878.9,334.3 L881.0,334.0 L883.0,334.3 L885.1,335.3 L887.1,337.4 L889.2,343.9 L889.2,356.6 L889.2,369.3 L889.2,381.9 L889.2,394.6 L889.2,407.3 L889.2,420.0 L889.2,432.7 L889.2,445.3 L889.7,458.0 L890.9,470.7 L892.8,483.4 L895.1,496.1 L897.7,508.7 L900.5,521.4 L903.1,534.1 L905.6,546.8 L907.7,559.5 L909.2,572.1 L910.0,584.8 L910.0,597.5 L910.0,610.2 L909.7,622.9 L908.9,635.5 L907.9,648.2 L906.6,660.9 L905.4,673.6 L904.5,686.3 L903.9,698.9 L903.9,698.9 L901.8,703.5 L899.8,705.0 L897.7,705.7 L895.6,705.9 L893.6,705.7 L891.5,705.0 L889.4,703.5 L887.4,698.9 L888.0,686.3 L888.9,673.6 L890.1,660.9 L891.4,648.2 L892.4,635.5 L893.2,622.9 L893.5,610.2 L893.5,597.5 L893.5,584.8 L892.7,572.1 L891.2,559.5 L889.1,546.8 L886.6,534.1 L884.0,521.4 L881.2,508.7 L878.6,496.1 L876.3,483.4 L874.4,470.7 L873.2,458.0 L872.7,445.3 L872.7,432.7 L872.7,420.0 L872.7,407.3 L872.7,394.6 L872.7,381.9 L872.7,369.3 L872.7,356.6 L872.7,343.9 Z" fill="#1e1d1d" stroke="#0e0b0a" stroke-width="2.2"/>
<path d="M882.6,343.9 L882.6,334.2 L883.3,334.4 L883.9,334.7 L884.6,335.0 L885.2,335.4 L885.9,336.0 L886.6,336.6 L887.2,337.5 L887.9,338.5 L887.9,356.6 L887.9,369.3 L887.9,381.9 L887.9,394.6 L887.9,407.3 L887.9,420.0 L887.9,432.7 L887.9,445.3 L888.4,458.0 L889.6,470.7 L891.5,483.4 L893.8,496.1 L896.4,508.7 L899.1,521.4 L901.8,534.1 L904.3,546.8 L906.3,559.5 L907.9,572.1 L908.6,584.8 L908.7,597.5 L908.7,610.2 L908.4,622.9 L907.6,635.5 L906.5,648.2 L905.3,660.9 L904.1,673.6 L903.1,686.3 L902.6,698.9 L902.6,702.7 L901.9,703.5 L901.2,704.0 L900.6,704.5 L899.9,704.9 L899.3,705.2 L898.6,705.4 L897.9,705.6 L897.3,705.7 L897.9,686.3 L898.8,673.6 L900.0,660.9 L901.3,648.2 L902.3,635.5 L903.1,622.9 L903.4,610.2 L903.4,597.5 L903.4,584.8 L902.6,572.1 L901.1,559.5 L899.0,546.8 L896.5,534.1 L893.9,521.4 L891.1,508.7 L888.5,496.1 L886.2,483.4 L884.3,470.7 L883.1,458.0 L882.6,445.3 L882.6,432.7 L882.6,420.0 L882.6,407.3 L882.6,394.6 L882.6,381.9 L882.6,369.3 L882.6,356.6 L882.6,343.9 Z" fill="#bb8266"/>
<path d="M889.8,329.9 L889.8,329.9 L891.9,323.4 L893.9,321.3 L896.0,320.3 L898.0,320.0 L900.1,320.3 L902.2,321.3 L904.2,323.4 L906.3,329.9 L906.3,343.1 L906.3,356.2 L906.3,369.4 L906.3,382.6 L906.3,395.8 L906.3,408.9 L906.3,422.1 L906.3,435.3 L906.3,448.5 L907.1,461.6 L908.8,474.8 L911.2,488.0 L914.1,501.2 L917.2,514.3 L920.3,527.5 L923.3,540.7 L925.9,553.8 L928.0,567.0 L929.2,580.2 L929.5,593.4 L929.5,606.5 L929.3,619.7 L928.5,632.9 L927.3,646.1 L925.9,659.2 L924.5,672.4 L923.4,685.6 L922.7,698.8 L922.7,698.8 L920.6,703.3 L918.5,704.8 L916.5,705.5 L914.4,705.7 L912.4,705.5 L910.3,704.8 L908.2,703.3 L906.2,698.8 L906.9,685.6 L908.0,672.4 L909.4,659.2 L910.8,646.1 L912.0,632.9 L912.8,619.7 L913.0,606.5 L913.0,593.4 L912.7,580.2 L911.5,567.0 L909.4,553.8 L906.8,540.7 L903.8,527.5 L900.7,514.3 L897.6,501.2 L894.7,488.0 L892.3,474.8 L890.6,461.6 L889.8,448.5 L889.8,435.3 L889.8,422.1 L889.8,408.9 L889.8,395.8 L889.8,382.6 L889.8,369.4 L889.8,356.2 L889.8,343.1 L889.8,329.9 Z" fill="#1e1d1d" stroke="#0e0b0a" stroke-width="2.2"/>
<path d="M899.7,329.9 L899.7,320.2 L900.4,320.4 L901.0,320.7 L901.7,321.0 L902.3,321.4 L903.0,322.0 L903.7,322.6 L904.3,323.5 L905.0,324.5 L905.0,343.1 L905.0,356.2 L905.0,369.4 L905.0,382.6 L905.0,395.8 L905.0,408.9 L905.0,422.1 L905.0,435.3 L905.0,448.5 L905.8,461.6 L907.5,474.8 L909.9,488.0 L912.7,501.2 L915.8,514.3 L919.0,527.5 L922.0,540.7 L924.6,553.8 L926.6,567.0 L927.9,580.2 L928.2,593.4 L928.2,606.5 L928.0,619.7 L927.2,632.9 L926.0,646.1 L924.6,659.2 L923.2,672.4 L922.0,685.6 L921.3,698.8 L921.3,702.5 L920.7,703.3 L920.0,703.8 L919.4,704.3 L918.7,704.7 L918.0,705.0 L917.4,705.2 L916.7,705.4 L916.1,705.5 L916.8,685.6 L917.9,672.4 L919.3,659.2 L920.7,646.1 L921.9,632.9 L922.7,619.7 L922.9,606.5 L922.9,593.4 L922.6,580.2 L921.4,567.0 L919.3,553.8 L916.7,540.7 L913.7,527.5 L910.6,514.3 L907.5,501.2 L904.6,488.0 L902.2,474.8 L900.5,461.6 L899.7,448.5 L899.7,435.3 L899.7,422.1 L899.7,408.9 L899.7,395.8 L899.7,382.6 L899.7,369.4 L899.7,356.2 L899.7,343.1 L899.7,329.9 Z" fill="#bb8266"/>
<path d="M906.9,317.2 L906.9,317.2 L909.0,310.7 L911.0,308.6 L913.1,307.6 L915.1,307.3 L917.2,307.6 L919.3,308.6 L921.3,310.7 L923.4,317.2 L923.4,330.8 L923.4,344.4 L923.4,358.1 L923.4,371.7 L923.4,385.3 L923.4,398.9 L923.4,412.5 L923.4,426.2 L923.4,439.8 L923.6,453.4 L925.0,467.0 L927.3,480.6 L930.3,494.3 L933.7,507.9 L937.3,521.5 L940.8,535.1 L944.0,548.7 L946.6,562.4 L948.3,576.0 L949.0,589.6 L949.0,603.2 L948.9,616.8 L948.1,630.5 L946.8,644.1 L945.2,657.7 L943.6,671.3 L942.2,684.9 L941.4,698.6 L941.4,698.6 L939.4,703.1 L937.3,704.6 L935.3,705.3 L933.2,705.5 L931.1,705.3 L929.1,704.6 L927.0,703.1 L924.9,698.6 L925.7,684.9 L927.1,671.3 L928.7,657.7 L930.3,644.1 L931.6,630.5 L932.4,616.8 L932.5,603.2 L932.5,589.6 L931.8,576.0 L930.1,562.4 L927.5,548.7 L924.3,535.1 L920.8,521.5 L917.2,507.9 L913.8,494.3 L910.8,480.6 L908.5,467.0 L907.1,453.4 L906.9,439.8 L906.9,426.2 L906.9,412.5 L906.9,398.9 L906.9,385.3 L906.9,371.7 L906.9,358.1 L906.9,344.4 L906.9,330.8 L906.9,317.2 Z" fill="#1e1d1d" stroke="#0e0b0a" stroke-width="2.2"/>
<path d="M916.8,317.2 L916.8,307.5 L917.5,307.7 L918.1,308.0 L918.8,308.3 L919.4,308.7 L920.1,309.3 L920.8,309.9 L921.4,310.8 L922.1,311.8 L922.1,330.8 L922.1,344.4 L922.1,358.1 L922.1,371.7 L922.1,385.3 L922.1,398.9 L922.1,412.5 L922.1,426.2 L922.1,439.8 L922.3,453.4 L923.7,467.0 L926.0,480.6 L928.9,494.3 L932.4,507.9 L935.9,521.5 L939.5,535.1 L942.7,548.7 L945.3,562.4 L947.0,576.0 L947.7,589.6 L947.7,603.2 L947.6,616.8 L946.8,630.5 L945.5,644.1 L943.9,657.7 L942.3,671.3 L940.9,684.9 L940.1,698.6 L940.1,702.3 L939.5,703.1 L938.8,703.6 L938.1,704.1 L937.5,704.5 L936.8,704.8 L936.2,705.0 L935.5,705.2 L934.8,705.3 L935.6,684.9 L937.0,671.3 L938.6,657.7 L940.2,644.1 L941.5,630.5 L942.3,616.8 L942.4,603.2 L942.4,589.6 L941.7,576.0 L940.0,562.4 L937.4,548.7 L934.2,535.1 L930.7,521.5 L927.1,507.9 L923.7,494.3 L920.7,480.6 L918.4,467.0 L917.0,453.4 L916.8,439.8 L916.8,426.2 L916.8,412.5 L916.8,398.9 L916.8,385.3 L916.8,371.7 L916.8,358.1 L916.8,344.4 L916.8,330.8 L916.8,317.2 Z" fill="#bb8266"/>
<path d="M924.0,305.4 L924.0,305.4 L926.1,298.9 L928.1,296.8 L930.2,295.8 L932.2,295.5 L934.3,295.8 L936.4,296.8 L938.4,298.9 L940.5,305.4 L940.5,319.4 L940.5,333.5 L940.5,347.5 L940.5,361.5 L940.5,375.6 L940.5,389.6 L940.5,403.6 L940.5,417.7 L940.5,431.7 L940.5,445.7 L941.3,459.8 L943.4,473.8 L946.4,487.8 L950.0,501.9 L954.0,515.9 L958.1,530.0 L961.8,544.0 L965.0,558.0 L967.3,572.1 L968.4,586.1 L968.5,600.1 L968.5,614.2 L967.7,628.2 L966.3,642.2 L964.5,656.3 L962.7,670.3 L961.1,684.3 L960.2,698.4 L960.2,698.4 L958.2,702.9 L956.1,704.4 L954.0,705.1 L952.0,705.3 L949.9,705.1 L947.9,704.4 L945.8,702.9 L943.7,698.4 L944.6,684.3 L946.2,670.3 L948.0,656.3 L949.8,642.2 L951.2,628.2 L952.0,614.2 L952.0,600.1 L951.9,586.1 L950.8,572.1 L948.5,558.0 L945.3,544.0 L941.6,530.0 L937.5,515.9 L933.5,501.9 L929.9,487.8 L926.9,473.8 L924.8,459.8 L924.0,445.7 L924.0,431.7 L924.0,417.7 L924.0,403.6 L924.0,389.6 L924.0,375.6 L924.0,361.5 L924.0,347.5 L924.0,333.5 L924.0,319.4 L924.0,305.4 Z" fill="#1e1d1d" stroke="#0e0b0a" stroke-width="2.2"/>
<path d="M933.9,305.4 L933.9,295.7 L934.6,295.9 L935.2,296.2 L935.9,296.5 L936.5,296.9 L937.2,297.5 L937.9,298.1 L938.5,299.0 L939.2,300.0 L939.2,319.4 L939.2,333.5 L939.2,347.5 L939.2,361.5 L939.2,375.6 L939.2,389.6 L939.2,403.6 L939.2,417.7 L939.2,431.7 L939.2,445.7 L940.0,459.8 L942.1,473.8 L945.1,487.8 L948.7,501.9 L952.7,515.9 L956.8,530.0 L960.5,544.0 L963.7,558.0 L966.0,572.1 L967.1,586.1 L967.2,600.1 L967.1,614.2 L966.4,628.2 L964.9,642.2 L963.2,656.3 L961.3,670.3 L959.8,684.3 L958.9,698.4 L958.9,702.1 L958.2,702.9 L957.6,703.4 L956.9,703.9 L956.3,704.3 L955.6,704.6 L954.9,704.8 L954.3,705.0 L953.6,705.2 L954.5,684.3 L956.1,670.3 L957.9,656.3 L959.7,642.2 L961.1,628.2 L961.9,614.2 L961.9,600.1 L961.8,586.1 L960.7,572.1 L958.4,558.0 L955.2,544.0 L951.5,530.0 L947.4,515.9 L943.4,501.9 L939.8,487.8 L936.8,473.8 L934.7,459.8 L933.9,445.7 L933.9,431.7 L933.9,417.7 L933.9,403.6 L933.9,389.6 L933.9,375.6 L933.9,361.5 L933.9,347.5 L933.9,333.5 L933.9,319.4 L933.9,305.4 Z" fill="#bb8266"/>
<path d="M941.1,294.4 L941.1,294.4 L943.2,287.9 L945.2,285.8 L947.3,284.8 L949.4,284.5 L951.4,284.8 L953.5,285.8 L955.5,287.9 L957.6,294.4 L957.6,308.8 L957.6,323.2 L957.6,337.7 L957.6,352.1 L957.6,366.5 L957.6,380.9 L957.6,395.3 L957.6,409.8 L957.6,424.2 L957.6,438.6 L957.9,453.0 L959.5,467.4 L962.3,481.9 L966.0,496.3 L970.2,510.7 L974.6,525.1 L978.7,539.5 L982.4,554.0 L985.2,568.4 L986.7,582.8 L986.9,597.2 L986.9,611.7 L986.2,626.1 L984.8,640.5 L982.9,654.9 L980.9,669.3 L979.3,683.8 L978.3,698.2 L978.3,698.2 L976.2,702.8 L974.1,704.2 L972.1,704.9 L970.0,705.1 L967.9,704.9 L965.9,704.2 L963.8,702.8 L961.8,698.2 L962.8,683.8 L964.4,669.3 L966.4,654.9 L968.3,640.5 L969.7,626.1 L970.4,611.7 L970.4,597.2 L970.2,582.8 L968.7,568.4 L965.9,554.0 L962.2,539.5 L958.1,525.1 L953.7,510.7 L949.5,496.3 L945.8,481.9 L943.0,467.4 L941.4,453.0 L941.1,438.6 L941.1,424.2 L941.1,409.8 L941.1,395.3 L941.1,380.9 L941.1,366.5 L941.1,352.1 L941.1,337.7 L941.1,323.2 L941.1,308.8 L941.1,294.4 Z" fill="#1e1d1d" stroke="#0e0b0a" stroke-width="2.2"/>
<path d="M951.0,294.4 L951.0,284.7 L951.7,284.9 L952.3,285.2 L953.0,285.5 L953.6,285.9 L954.3,286.5 L955.0,287.1 L955.6,288.0 L956.3,289.0 L956.3,308.8 L956.3,323.2 L956.3,337.7 L956.3,352.1 L956.3,366.5 L956.3,380.9 L956.3,395.3 L956.3,409.8 L956.3,424.2 L956.3,438.6 L956.5,453.0 L958.2,467.4 L961.0,481.9 L964.7,496.3 L968.9,510.7 L973.2,525.1 L977.4,539.5 L981.1,554.0 L983.8,568.4 L985.4,582.8 L985.6,597.2 L985.6,611.7 L984.9,626.1 L983.5,640.5 L981.6,654.9 L979.6,669.3 L977.9,683.8 L976.9,698.2 L976.9,701.9 L976.3,702.7 L975.6,703.3 L975.0,703.7 L974.3,704.1 L973.6,704.4 L973.0,704.6 L972.3,704.8 L971.7,705.0 L972.7,683.8 L974.3,669.3 L976.3,654.9 L978.2,640.5 L979.6,626.1 L980.3,611.7 L980.3,597.2 L980.1,582.8 L978.6,568.4 L975.8,554.0 L972.1,539.5 L968.0,525.1 L963.6,510.7 L959.4,496.3 L955.7,481.9 L952.9,467.4 L951.3,453.0 L951.0,438.6 L951.0,424.2 L951.0,409.8 L951.0,395.3 L951.0,380.9 L951.0,366.5 L951.0,352.1 L951.0,337.7 L951.0,323.2 L951.0,308.8 L951.0,294.4 Z" fill="#bb8266"/>
<path d="M957.4,285.1 L957.4,285.1 L959.5,278.6 L961.5,276.5 L963.6,275.5 L965.6,275.2 L967.7,275.5 L969.8,276.5 L971.8,278.6 L973.9,285.1 L973.9,299.8 L973.9,314.5 L973.9,329.2 L973.9,343.9 L973.9,358.6 L973.9,373.3 L973.9,387.9 L973.9,402.6 L973.9,417.3 L973.9,432.0 L973.9,446.7 L975.0,461.4 L977.5,476.1 L981.1,490.8 L985.4,505.5 L990.0,520.2 L994.6,534.9 L998.7,549.6 L1001.9,564.3 L1004.0,579.0 L1004.5,593.6 L1004.5,608.3 L1004.0,623.0 L1002.5,637.7 L1000.5,652.4 L998.4,667.1 L996.5,681.8 L995.4,696.5 L995.4,696.5 L993.4,701.1 L991.3,702.5 L989.3,703.2 L987.2,703.4 L985.1,703.2 L983.1,702.5 L981.0,701.1 L978.9,696.5 L980.0,681.8 L981.9,667.1 L984.0,652.4 L986.0,637.7 L987.5,623.0 L988.0,608.3 L988.0,593.6 L987.5,579.0 L985.4,564.3 L982.2,549.6 L978.1,534.9 L973.5,520.2 L968.9,505.5 L964.6,490.8 L961.0,476.1 L958.5,461.4 L957.4,446.7 L957.4,432.0 L957.4,417.3 L957.4,402.6 L957.4,387.9 L957.4,373.3 L957.4,358.6 L957.4,343.9 L957.4,329.2 L957.4,314.5 L957.4,299.8 L957.4,285.1 Z" fill="#1e1d1d" stroke="#0e0b0a" stroke-width="2.2"/>
<path d="M967.3,285.1 L967.3,275.4 L968.0,275.6 L968.6,275.9 L969.3,276.2 L969.9,276.6 L970.6,277.2 L971.3,277.8 L971.9,278.7 L972.6,279.7 L972.6,299.8 L972.6,314.5 L972.6,329.2 L972.6,343.9 L972.6,358.6 L972.6,373.3 L972.6,387.9 L972.6,402.6 L972.6,417.3 L972.6,432.0 L972.6,446.7 L973.7,461.4 L976.2,476.1 L979.8,490.8 L984.1,505.5 L988.7,520.2 L993.3,534.9 L997.3,549.6 L1000.6,564.3 L1002.6,579.0 L1003.1,593.6 L1003.1,608.3 L1002.7,623.0 L1001.2,637.7 L999.2,652.4 L997.1,667.1 L995.2,681.8 L994.1,696.5 L994.1,700.3 L993.5,701.0 L992.8,701.6 L992.1,702.0 L991.5,702.4 L990.8,702.7 L990.2,703.0 L989.5,703.1 L988.8,703.3 L989.9,681.8 L991.8,667.1 L993.9,652.4 L995.9,637.7 L997.4,623.0 L997.9,608.3 L997.9,593.6 L997.4,579.0 L995.3,564.3 L992.1,549.6 L988.0,534.9 L983.4,520.2 L978.8,505.5 L974.5,490.8 L970.9,476.1 L968.4,461.4 L967.3,446.7 L967.3,432.0 L967.3,417.3 L967.3,402.6 L967.3,387.9 L967.3,373.3 L967.3,358.6 L967.3,343.9 L967.3,329.2 L967.3,314.5 L967.3,299.8 L967.3,285.1 Z" fill="#bb8266"/>
<path d="M973.0,279.2 L973.0,279.2 L975.1,272.7 L977.1,270.6 L979.2,269.6 L981.2,269.3 L983.3,269.6 L985.4,270.6 L987.4,272.7 L989.5,279.2 L989.5,294.0 L989.5,308.7 L989.5,323.5 L989.5,338.3 L989.5,353.1 L989.5,367.8 L989.5,382.6 L989.5,397.4 L989.5,412.1 L989.5,426.9 L989.5,441.7 L990.1,456.5 L992.2,471.2 L995.7,486.0 L1000.0,500.8 L1004.7,515.5 L1009.6,530.3 L1014.0,545.1 L1017.7,559.9 L1020.3,574.6 L1021.3,589.4 L1021.3,604.2 L1021.0,618.9 L1019.6,633.7 L1017.5,648.5 L1015.2,663.3 L1013.1,678.0 L1011.9,692.8 L1011.9,692.8 L1009.8,697.4 L1007.8,698.8 L1005.7,699.5 L1003.7,699.7 L1001.6,699.5 L999.5,698.8 L997.5,697.4 L995.4,692.8 L996.6,678.0 L998.7,663.3 L1001.0,648.5 L1003.1,633.7 L1004.5,618.9 L1004.8,604.2 L1004.8,589.4 L1003.8,574.6 L1001.2,559.9 L997.5,545.1 L993.1,530.3 L988.2,515.5 L983.5,500.8 L979.2,486.0 L975.7,471.2 L973.6,456.5 L973.0,441.7 L973.0,426.9 L973.0,412.1 L973.0,397.4 L973.0,382.6 L973.0,367.8 L973.0,353.1 L973.0,338.3 L973.0,323.5 L973.0,308.7 L973.0,294.0 L973.0,279.2 Z" fill="#1e1d1d" stroke="#0e0b0a" stroke-width="2.2"/>
<path d="M982.9,279.2 L982.9,269.5 L983.6,269.7 L984.2,270.0 L984.9,270.3 L985.5,270.7 L986.2,271.3 L986.9,271.9 L987.5,272.8 L988.2,273.8 L988.2,294.0 L988.2,308.7 L988.2,323.5 L988.2,338.3 L988.2,353.1 L988.2,367.8 L988.2,382.6 L988.2,397.4 L988.2,412.1 L988.2,426.9 L988.2,441.7 L988.7,456.5 L990.9,471.2 L994.4,486.0 L998.7,500.8 L1003.4,515.5 L1008.2,530.3 L1012.7,545.1 L1016.4,559.9 L1019.0,574.6 L1019.9,589.4 L1019.9,604.2 L1019.7,618.9 L1018.3,633.7 L1016.2,648.5 L1013.9,663.3 L1011.8,678.0 L1010.6,692.8 L1010.6,696.6 L1009.9,697.3 L1009.3,697.9 L1008.6,698.3 L1007.9,698.7 L1007.3,699.0 L1006.6,699.3 L1006.0,699.5 L1005.3,699.6 L1006.5,678.0 L1008.6,663.3 L1010.9,648.5 L1013.0,633.7 L1014.4,618.9 L1014.7,604.2 L1014.7,589.4 L1013.7,574.6 L1011.1,559.9 L1007.4,545.1 L1003.0,530.3 L998.1,515.5 L993.4,500.8 L989.1,486.0 L985.6,471.2 L983.5,456.5 L982.9,441.7 L982.9,426.9 L982.9,412.1 L982.9,397.4 L982.9,382.6 L982.9,367.8 L982.9,353.1 L982.9,338.3 L982.9,323.5 L982.9,308.7 L982.9,294.0 L982.9,279.2 Z" fill="#bb8266"/>
<path d="M989.3,275.9 L989.3,275.9 L991.4,269.4 L993.4,267.3 L995.5,266.3 L997.5,266.0 L999.6,266.3 L1001.7,267.3 L1003.7,269.4 L1005.8,275.9 L1005.8,290.7 L1005.8,305.4 L1005.8,320.2 L1005.8,334.9 L1005.8,349.7 L1005.8,364.4 L1005.8,379.2 L1005.8,393.9 L1005.8,408.7 L1005.8,423.4 L1005.8,438.2 L1006.1,452.9 L1008.0,467.7 L1011.3,482.4 L1015.5,497.2 L1020.4,511.9 L1025.4,526.7 L1030.2,541.4 L1034.2,556.2 L1037.2,570.9 L1038.7,585.7 L1038.8,600.4 L1038.7,615.2 L1037.4,630.0 L1035.2,644.7 L1032.7,659.5 L1030.5,674.2 L1029.1,689.0 L1029.1,689.0 L1027.0,693.5 L1025.0,695.0 L1022.9,695.7 L1020.8,695.9 L1018.8,695.7 L1016.7,695.0 L1014.6,693.5 L1012.6,689.0 L1014.0,674.2 L1016.2,659.5 L1018.7,644.7 L1020.9,630.0 L1022.2,615.2 L1022.3,600.4 L1022.2,585.7 L1020.7,570.9 L1017.7,556.2 L1013.7,541.4 L1008.9,526.7 L1003.9,511.9 L999.0,497.2 L994.8,482.4 L991.5,467.7 L989.6,452.9 L989.3,438.2 L989.3,423.4 L989.3,408.7 L989.3,393.9 L989.3,379.2 L989.3,364.4 L989.3,349.7 L989.3,334.9 L989.3,320.2 L989.3,305.4 L989.3,290.7 L989.3,275.9 Z" fill="#1e1d1d" stroke="#0e0b0a" stroke-width="2.2"/>
<path d="M999.2,275.9 L999.2,266.2 L999.9,266.4 L1000.5,266.7 L1001.2,267.0 L1001.8,267.4 L1002.5,268.0 L1003.2,268.6 L1003.8,269.5 L1004.5,270.5 L1004.5,290.7 L1004.5,305.4 L1004.5,320.2 L1004.5,334.9 L1004.5,349.7 L1004.5,364.4 L1004.5,379.2 L1004.5,393.9 L1004.5,408.7 L1004.5,423.4 L1004.5,438.2 L1004.8,452.9 L1006.6,467.7 L1009.9,482.4 L1014.2,497.2 L1019.1,511.9 L1024.1,526.7 L1028.8,541.4 L1032.9,556.2 L1035.9,570.9 L1037.4,585.7 L1037.5,600.4 L1037.4,615.2 L1036.1,630.0 L1033.9,644.7 L1031.4,659.5 L1029.1,674.2 L1027.8,689.0 L1027.8,692.7 L1027.1,693.5 L1026.4,694.0 L1025.8,694.5 L1025.1,694.9 L1024.5,695.2 L1023.8,695.4 L1023.1,695.6 L1022.5,695.8 L1023.9,674.2 L1026.1,659.5 L1028.6,644.7 L1030.8,630.0 L1032.1,615.2 L1032.2,600.4 L1032.1,585.7 L1030.6,570.9 L1027.6,556.2 L1023.6,541.4 L1018.8,526.7 L1013.8,511.9 L1008.9,497.2 L1004.7,482.4 L1001.4,467.7 L999.5,452.9 L999.2,438.2 L999.2,423.4 L999.2,408.7 L999.2,393.9 L999.2,379.2 L999.2,364.4 L999.2,349.7 L999.2,334.9 L999.2,320.2 L999.2,305.4 L999.2,290.7 L999.2,275.9 Z" fill="#bb8266"/>
<path d="M1004.8,278.4 L1004.8,278.4 L1006.9,271.9 L1008.9,269.8 L1011.0,268.8 L1013.0,268.5 L1015.1,268.8 L1017.2,269.8 L1019.2,271.9 L1021.3,278.4 L1021.3,292.9 L1021.3,307.5 L1021.3,322.0 L1021.3,336.6 L1021.3,351.1 L1021.3,365.7 L1021.3,380.2 L1021.3,394.7 L1021.3,409.3 L1021.3,423.8 L1021.3,438.4 L1021.6,452.9 L1023.4,467.4 L1026.6,482.0 L1030.7,496.5 L1035.4,511.1 L1040.2,525.6 L1044.9,540.2 L1048.9,554.7 L1052.0,569.2 L1053.6,583.8 L1053.8,598.3 L1053.7,612.9 L1052.6,627.4 L1050.5,641.9 L1048.0,656.5 L1045.7,671.0 L1044.2,685.6 L1044.2,685.6 L1042.2,690.2 L1040.1,691.6 L1038.0,692.3 L1036.0,692.5 L1033.9,692.3 L1031.8,691.6 L1029.8,690.2 L1027.7,685.6 L1029.2,671.0 L1031.5,656.5 L1034.0,641.9 L1036.1,627.4 L1037.2,612.9 L1037.3,598.3 L1037.1,583.8 L1035.5,569.2 L1032.4,554.7 L1028.4,540.2 L1023.7,525.6 L1018.9,511.1 L1014.2,496.5 L1010.1,482.0 L1006.9,467.4 L1005.1,452.9 L1004.8,438.4 L1004.8,423.8 L1004.8,409.3 L1004.8,394.7 L1004.8,380.2 L1004.8,365.7 L1004.8,351.1 L1004.8,336.6 L1004.8,322.0 L1004.8,307.5 L1004.8,292.9 L1004.8,278.4 Z" fill="#1e1d1d" stroke="#0e0b0a" stroke-width="2.2"/>
<path d="M1014.7,278.4 L1014.7,268.7 L1015.4,268.9 L1016.0,269.2 L1016.7,269.5 L1017.3,269.9 L1018.0,270.5 L1018.7,271.1 L1019.3,272.0 L1020.0,273.0 L1020.0,292.9 L1020.0,307.5 L1020.0,322.0 L1020.0,336.6 L1020.0,351.1 L1020.0,365.7 L1020.0,380.2 L1020.0,394.7 L1020.0,409.3 L1020.0,423.8 L1020.0,438.4 L1020.3,452.9 L1022.1,467.4 L1025.2,482.0 L1029.4,496.5 L1034.1,511.1 L1038.9,525.6 L1043.6,540.2 L1047.6,554.7 L1050.6,569.2 L1052.3,583.8 L1052.4,598.3 L1052.4,612.9 L1051.3,627.4 L1049.2,641.9 L1046.7,656.5 L1044.3,671.0 L1042.9,685.6 L1042.9,689.3 L1042.2,690.1 L1041.6,690.6 L1040.9,691.1 L1040.3,691.5 L1039.6,691.8 L1038.9,692.0 L1038.3,692.2 L1037.6,692.4 L1039.1,671.0 L1041.4,656.5 L1043.9,641.9 L1046.0,627.4 L1047.1,612.9 L1047.2,598.3 L1047.0,583.8 L1045.4,569.2 L1042.3,554.7 L1038.3,540.2 L1033.6,525.6 L1028.8,511.1 L1024.1,496.5 L1020.0,482.0 L1016.8,467.4 L1015.0,452.9 L1014.7,438.4 L1014.7,423.8 L1014.7,409.3 L1014.7,394.7 L1014.7,380.2 L1014.7,365.7 L1014.7,351.1 L1014.7,336.6 L1014.7,322.0 L1014.7,307.5 L1014.7,292.9 L1014.7,278.4 Z" fill="#bb8266"/>
<path d="M1019.6,288.5 L1019.6,288.5 L1021.7,282.0 L1023.7,279.9 L1025.8,278.9 L1027.8,278.6 L1029.9,278.9 L1032.0,279.9 L1034.0,282.0 L1036.1,288.5 L1036.1,302.4 L1036.1,316.3 L1036.1,330.2 L1036.1,344.0 L1036.1,357.9 L1036.1,371.8 L1036.1,385.7 L1036.1,399.6 L1036.1,413.5 L1036.1,427.4 L1036.1,441.3 L1036.5,455.1 L1038.4,469.0 L1041.5,482.9 L1045.4,496.8 L1049.8,510.7 L1054.4,524.6 L1058.8,538.5 L1062.7,552.4 L1065.8,566.2 L1067.6,580.1 L1068.1,594.0 L1068.1,607.9 L1067.4,621.8 L1065.4,635.7 L1062.8,649.6 L1060.3,663.5 L1058.7,677.3 L1058.7,677.3 L1056.6,681.9 L1054.6,683.4 L1052.5,684.1 L1050.5,684.3 L1048.4,684.1 L1046.3,683.4 L1044.3,681.9 L1042.2,677.3 L1043.8,663.5 L1046.3,649.6 L1048.9,635.7 L1050.9,621.8 L1051.6,607.9 L1051.6,594.0 L1051.1,580.1 L1049.3,566.2 L1046.2,552.4 L1042.3,538.5 L1037.9,524.6 L1033.3,510.7 L1028.9,496.8 L1025.0,482.9 L1021.9,469.0 L1020.0,455.1 L1019.6,441.3 L1019.6,427.4 L1019.6,413.5 L1019.6,399.6 L1019.6,385.7 L1019.6,371.8 L1019.6,357.9 L1019.6,344.0 L1019.6,330.2 L1019.6,316.3 L1019.6,302.4 L1019.6,288.5 Z" fill="#1e1d1d" stroke="#0e0b0a" stroke-width="2.2"/>
<path d="M1029.5,288.5 L1029.5,278.8 L1030.2,279.0 L1030.8,279.3 L1031.5,279.6 L1032.1,280.0 L1032.8,280.6 L1033.5,281.2 L1034.1,282.1 L1034.8,283.1 L1034.8,302.4 L1034.8,316.3 L1034.8,330.2 L1034.8,344.0 L1034.8,357.9 L1034.8,371.8 L1034.8,385.7 L1034.8,399.6 L1034.8,413.5 L1034.8,427.4 L1034.8,441.3 L1035.2,455.1 L1037.1,469.0 L1040.2,482.9 L1044.1,496.8 L1048.5,510.7 L1053.1,524.6 L1057.5,538.5 L1061.4,552.4 L1064.5,566.2 L1066.3,580.1 L1066.7,594.0 L1066.7,607.9 L1066.1,621.8 L1064.1,635.7 L1061.5,649.6 L1059.0,663.5 L1057.4,677.3 L1057.4,681.1 L1056.7,681.9 L1056.1,682.4 L1055.4,682.9 L1054.7,683.3 L1054.1,683.6 L1053.4,683.8 L1052.8,684.0 L1052.1,684.1 L1053.7,663.5 L1056.2,649.6 L1058.8,635.7 L1060.8,621.8 L1061.5,607.9 L1061.5,594.0 L1061.0,580.1 L1059.2,566.2 L1056.1,552.4 L1052.2,538.5 L1047.8,524.6 L1043.2,510.7 L1038.8,496.8 L1034.9,482.9 L1031.8,469.0 L1029.9,455.1 L1029.5,441.3 L1029.5,427.4 L1029.5,413.5 L1029.5,399.6 L1029.5,385.7 L1029.5,371.8 L1029.5,357.9 L1029.5,344.0 L1029.5,330.2 L1029.5,316.3 L1029.5,302.4 L1029.5,288.5 Z" fill="#bb8266"/>
<path d="M1034.4,308.8 L1034.4,308.8 L1036.5,302.3 L1038.5,300.2 L1040.6,299.2 L1042.7,298.9 L1044.7,299.2 L1046.8,300.2 L1048.8,302.3 L1050.9,308.8 L1050.9,321.6 L1050.9,334.5 L1050.9,347.3 L1050.9,360.1 L1050.9,373.0 L1050.9,385.8 L1050.9,398.7 L1050.9,411.5 L1050.9,424.3 L1050.9,437.2 L1051.0,450.0 L1052.2,462.8 L1054.5,475.7 L1057.7,488.5 L1061.5,501.3 L1065.6,514.2 L1069.7,527.0 L1073.7,539.9 L1077.2,552.7 L1080.0,565.5 L1081.8,578.4 L1082.4,591.2 L1082.4,604.0 L1082.1,616.9 L1080.3,629.7 L1077.6,642.6 L1075.0,655.4 L1073.2,668.2 L1073.2,668.2 L1071.2,672.8 L1069.1,674.2 L1067.0,674.9 L1065.0,675.2 L1062.9,674.9 L1060.8,674.2 L1058.8,672.8 L1056.7,668.2 L1058.5,655.4 L1061.1,642.6 L1063.8,629.7 L1065.6,616.9 L1065.9,604.0 L1065.9,591.2 L1065.3,578.4 L1063.5,565.5 L1060.7,552.7 L1057.2,539.9 L1053.2,527.0 L1049.1,514.2 L1045.0,501.3 L1041.2,488.5 L1038.0,475.7 L1035.7,462.8 L1034.5,450.0 L1034.4,437.2 L1034.4,424.3 L1034.4,411.5 L1034.4,398.7 L1034.4,385.8 L1034.4,373.0 L1034.4,360.1 L1034.4,347.3 L1034.4,334.5 L1034.4,321.6 L1034.4,308.8 Z" fill="#1e1d1d" stroke="#0e0b0a" stroke-width="2.2"/>
<path d="M1044.3,308.8 L1044.3,299.1 L1045.0,299.3 L1045.6,299.6 L1046.3,299.9 L1046.9,300.3 L1047.6,300.9 L1048.3,301.5 L1048.9,302.4 L1049.6,303.4 L1049.6,321.6 L1049.6,334.5 L1049.6,347.3 L1049.6,360.1 L1049.6,373.0 L1049.6,385.8 L1049.6,398.7 L1049.6,411.5 L1049.6,424.3 L1049.6,437.2 L1049.7,450.0 L1050.9,462.8 L1053.2,475.7 L1056.4,488.5 L1060.1,501.3 L1064.2,514.2 L1068.4,527.0 L1072.4,539.9 L1075.9,552.7 L1078.7,565.5 L1080.5,578.4 L1081.0,591.2 L1081.0,604.0 L1080.7,616.9 L1079.0,629.7 L1076.3,642.6 L1073.7,655.4 L1071.9,668.2 L1071.9,672.0 L1071.2,672.7 L1070.6,673.3 L1069.9,673.8 L1069.3,674.1 L1068.6,674.4 L1067.9,674.7 L1067.3,674.9 L1066.6,675.0 L1068.4,655.4 L1071.0,642.6 L1073.7,629.7 L1075.5,616.9 L1075.8,604.0 L1075.8,591.2 L1075.2,578.4 L1073.4,565.5 L1070.6,552.7 L1067.1,539.9 L1063.1,527.0 L1059.0,514.2 L1054.9,501.3 L1051.1,488.5 L1047.9,475.7 L1045.6,462.8 L1044.4,450.0 L1044.3,437.2 L1044.3,424.3 L1044.3,411.5 L1044.3,398.7 L1044.3,385.8 L1044.3,373.0 L1044.3,360.1 L1044.3,347.3 L1044.3,334.5 L1044.3,321.6 L1044.3,308.8 Z" fill="#bb8266"/>
<path d="M1048.4,348.4 L1048.4,348.4 L1050.5,341.9 L1052.5,339.8 L1054.6,338.8 L1056.7,338.5 L1058.7,338.8 L1060.8,339.8 L1062.8,341.9 L1064.9,348.4 L1064.9,359.5 L1064.9,370.5 L1064.9,381.6 L1064.9,392.7 L1064.9,403.7 L1064.9,414.8 L1064.9,425.9 L1064.9,437.0 L1064.9,448.0 L1065.7,459.1 L1067.4,470.2 L1069.7,481.2 L1072.6,492.3 L1075.9,503.4 L1079.4,514.4 L1082.9,525.5 L1086.4,536.6 L1089.5,547.6 L1092.2,558.7 L1094.2,569.8 L1095.5,580.9 L1095.9,591.9 L1095.9,603.0 L1095.7,614.1 L1094.2,625.1 L1091.6,636.2 L1088.9,647.3 L1087.0,658.3 L1087.0,658.3 L1084.9,662.9 L1082.9,664.3 L1080.8,665.1 L1078.7,665.3 L1076.7,665.1 L1074.6,664.3 L1072.5,662.9 L1070.5,658.3 L1072.4,647.3 L1075.1,636.2 L1077.7,625.1 L1079.2,614.1 L1079.4,603.0 L1079.4,591.9 L1079.0,580.9 L1077.7,569.8 L1075.7,558.7 L1073.0,547.6 L1069.9,536.6 L1066.4,525.5 L1062.9,514.4 L1059.4,503.4 L1056.1,492.3 L1053.2,481.2 L1050.9,470.2 L1049.2,459.1 L1048.4,448.0 L1048.4,437.0 L1048.4,425.9 L1048.4,414.8 L1048.4,403.7 L1048.4,392.7 L1048.4,381.6 L1048.4,370.5 L1048.4,359.5 L1048.4,348.4 Z" fill="#1e1d1d" stroke="#0e0b0a" stroke-width="2.2"/>
<path d="M1058.3,348.4 L1058.3,338.7 L1059.0,338.9 L1059.6,339.2 L1060.3,339.5 L1060.9,339.9 L1061.6,340.5 L1062.3,341.1 L1062.9,342.0 L1063.6,343.0 L1063.6,359.5 L1063.6,370.5 L1063.6,381.6 L1063.6,392.7 L1063.6,403.7 L1063.6,414.8 L1063.6,425.9 L1063.6,437.0 L1063.6,448.0 L1064.4,459.1 L1066.1,470.2 L1068.4,481.2 L1071.3,492.3 L1074.6,503.4 L1078.1,514.4 L1081.6,525.5 L1085.0,536.6 L1088.2,547.6 L1090.8,558.7 L1092.9,569.8 L1094.2,580.9 L1094.5,591.9 L1094.5,603.0 L1094.4,614.1 L1092.8,625.1 L1090.3,636.2 L1087.6,647.3 L1085.7,658.3 L1085.7,662.1 L1085.0,662.8 L1084.3,663.4 L1083.7,663.9 L1083.0,664.3 L1082.4,664.6 L1081.7,664.8 L1081.0,665.0 L1080.4,665.1 L1082.3,647.3 L1085.0,636.2 L1087.6,625.1 L1089.1,614.1 L1089.3,603.0 L1089.3,591.9 L1088.9,580.9 L1087.6,569.8 L1085.6,558.7 L1082.9,547.6 L1079.8,536.6 L1076.3,525.5 L1072.8,514.4 L1069.3,503.4 L1066.0,492.3 L1063.1,481.2 L1060.8,470.2 L1059.1,459.1 L1058.3,448.0 L1058.3,437.0 L1058.3,425.9 L1058.3,414.8 L1058.3,403.7 L1058.3,392.7 L1058.3,381.6 L1058.3,370.5 L1058.3,359.5 L1058.3,348.4 Z" fill="#bb8266"/>
<path d="M1061.0,421.8 L1061.0,421.8 L1063.1,415.3 L1065.1,413.2 L1067.2,412.2 L1069.2,411.9 L1071.3,412.2 L1073.4,413.2 L1075.4,415.3 L1077.5,421.8 L1077.5,429.7 L1077.5,437.7 L1077.5,445.6 L1077.8,453.6 L1078.6,461.5 L1079.8,469.5 L1081.3,477.4 L1083.2,485.4 L1085.3,493.3 L1087.5,501.3 L1089.9,509.2 L1092.4,517.2 L1094.8,525.1 L1097.2,533.1 L1099.5,541.0 L1101.6,549.0 L1103.5,556.9 L1105.1,564.9 L1106.3,572.8 L1107.1,580.8 L1107.5,588.7 L1107.5,596.7 L1107.5,604.6 L1107.4,612.6 L1106.0,620.5 L1103.7,628.5 L1101.1,636.4 L1099.2,644.4 L1099.2,644.4 L1097.1,649.0 L1095.0,650.4 L1093.0,651.1 L1090.9,651.3 L1088.8,651.1 L1086.8,650.4 L1084.7,649.0 L1082.7,644.4 L1084.6,636.4 L1087.2,628.5 L1089.5,620.5 L1090.9,612.6 L1091.0,604.6 L1091.0,596.7 L1091.0,588.7 L1090.6,580.8 L1089.8,572.8 L1088.6,564.9 L1087.0,556.9 L1085.1,549.0 L1083.0,541.0 L1080.7,533.1 L1078.3,525.1 L1075.9,517.2 L1073.4,509.2 L1071.0,501.3 L1068.8,493.3 L1066.7,485.4 L1064.8,477.4 L1063.3,469.5 L1062.1,461.5 L1061.3,453.6 L1061.0,445.6 L1061.0,437.7 L1061.0,429.7 L1061.0,421.8 Z" fill="#1e1d1d" stroke="#0e0b0a" stroke-width="2.2"/>
<path d="M1070.9,421.8 L1070.9,412.1 L1071.6,412.3 L1072.2,412.6 L1072.9,412.9 L1073.5,413.3 L1074.2,413.9 L1074.9,414.5 L1075.5,415.4 L1076.2,416.4 L1076.2,429.7 L1076.2,437.7 L1076.2,445.6 L1076.5,453.6 L1077.3,461.5 L1078.5,469.5 L1080.0,477.4 L1081.9,485.4 L1084.0,493.3 L1086.2,501.3 L1088.6,509.2 L1091.1,517.2 L1093.5,525.1 L1095.9,533.1 L1098.2,541.0 L1100.3,549.0 L1102.2,556.9 L1103.8,564.9 L1105.0,572.8 L1105.8,580.8 L1106.1,588.7 L1106.2,596.7 L1106.2,604.6 L1106.1,612.6 L1104.7,620.5 L1102.4,628.5 L1099.8,636.4 L1097.8,644.4 L1097.8,648.1 L1097.2,648.9 L1096.5,649.5 L1095.9,649.9 L1095.2,650.3 L1094.5,650.6 L1093.9,650.9 L1093.2,651.0 L1092.6,651.2 L1094.5,636.4 L1097.1,628.5 L1099.4,620.5 L1100.8,612.6 L1100.9,604.6 L1100.9,596.7 L1100.9,588.7 L1100.5,580.8 L1099.7,572.8 L1098.5,564.9 L1096.9,556.9 L1095.0,549.0 L1092.9,541.0 L1090.6,533.1 L1088.2,525.1 L1085.8,517.2 L1083.3,509.2 L1080.9,501.3 L1078.7,493.3 L1076.6,485.4 L1074.7,477.4 L1073.2,469.5 L1072.0,461.5 L1071.2,453.6 L1070.9,445.6 L1070.9,437.7 L1070.9,429.7 L1070.9,421.8 Z" fill="#bb8266"/>
</g>
</svg>
<div style="left:259px;top:147px;width:2px;height:727px;background:#c4c45a;"></div>
<div style="left:1225px;top:147px;width:2px;height:727px;background:#c4c45a;"></div>
<div style="left:259px;top:147px;width:968px;height:2px;background:#c4c45a;"></div>
<div style="left:259px;top:872px;width:968px;height:2px;background:#c4c45a;"></div>
<div style="left:78px;top:155.11px;font:normal 10.5px/10.5px 'Liberation Sans',sans-serif;color:#dcdcdc;letter-spacing:-0.052px;white-space:nowrap;clip-path:inset(-5px 0 -5px -5px);width:181px;overflow:hidden">[+ ] [MrEgypt-PhysCamera001 ] [Standard ] [Color Pencil ]</div>
<div style="left:78px;top:155.11px;font:normal 10.5px/10.5px 'Liberation Sans',sans-serif;color:#3a3a3a;letter-spacing:-0.052px;white-space:nowrap;clip-path:polygon(181px -5px,400px -5px,400px 20px,181px 20px)">[+ ] [MrEgypt-PhysCamera001 ] [Standard ] [Color Pencil ]</div>
<div style="left:125px;top:184.53px;font:normal 10px/10px 'Liberation Sans',sans-serif;color:#dccb50;letter-spacing:0.195px;white-space:nowrap;">Total</div>
<div style="left:87px;top:199.53px;font:normal 10px/10px 'Liberation Sans',sans-serif;color:#dccb50;letter-spacing:-0.224px;white-space:nowrap;">Polys:</div>
<div style="left:125px;top:199.53px;font:normal 10px/10px 'Liberation Sans',sans-serif;color:#dccb50;letter-spacing:0.285px;white-space:nowrap;">145,460</div>
<div style="left:87px;top:214.53px;font:normal 10px/10px 'Liberation Sans',sans-serif;color:#dccb50;letter-spacing:-0.103px;white-space:nowrap;">Verts:</div>
<div style="left:125px;top:214.53px;font:normal 10px/10px 'Liberation Sans',sans-serif;color:#dccb50;letter-spacing:0.131px;white-space:nowrap;">168,194</div>
<div style="left:87px;top:244.53px;font:normal 10px/10px 'Liberation Sans',sans-serif;color:#dccb50;letter-spacing:-0.636px;white-space:nowrap;">FPS:</div>
<div style="left:125px;top:244.53px;font:normal 10px/10px 'Liberation Sans',sans-serif;color:#dccb50;letter-spacing:0.217px;white-space:nowrap;">0.032</div>
<div style="left:1413px;top:147px;width:387px;height:729px;background:#444;"></div>
<div style="left:1418px;top:155px;width:27px;height:24px;background:#454545;"></div>
<div style="left:1446px;top:155px;width:28px;height:24px;background:#3b3b3b;border-radius:3px 3px 0 0"></div>
<div style="left:1477px;top:155px;width:28px;height:24px;background:#3b3b3b;border-radius:3px 3px 0 0"></div>
<div style="left:1507px;top:155px;width:28px;height:24px;background:#3b3b3b;border-radius:3px 3px 0 0"></div>
<div style="left:1537px;top:155px;width:28px;height:24px;background:#3b3b3b;border-radius:3px 3px 0 0"></div>
<div style="left:1567px;top:155px;width:28px;height:24px;background:#3b3b3b;border-radius:3px 3px 0 0"></div>
<div style="left:1418px;top:179px;width:382px;height:1px;background:#3a3a3a;"></div>
<div style="left:1422px;top:185px;width:19px;height:19px;background:#5b8fd6;border-radius:2px"></div>
<div style="left:1421px;top:210px;width:187px;height:19px;background:#5f5f5f;"></div>
<div style="left:1425px;top:215.69px;font:normal 11px/11px 'Liberation Sans',sans-serif;color:#dedede;letter-spacing:-0.507px;white-space:nowrap;">Standard Primitives</div>
<svg style="left:1594px;top:216px;" width="9" height="6" viewBox="0 0 9 6"><path d="M0 0 L8 0 L4 5 Z" fill="#eee"/></svg>
<div style="left:1421px;top:235px;width:180px;height:156px;background:#4d4d4d;border-radius:2px"></div>
<div style="left:1438px;top:238.27px;font:bold 11.5px/11.5px 'Liberation Sans',sans-serif;color:#f0f0f0;letter-spacing:-0.092px;white-space:nowrap;">Object Type</div>
<svg style="left:1425px;top:239px;" width="9" height="6" viewBox="0 0 9 6"><path d="M0 0 L8 0 L4 5 Z" fill="#ccc"/></svg>
<div style="left:1467px;top:257px;width:9px;height:10px;background:#555;"></div>
<div style="left:1479px;top:257.69px;font:normal 11px/11px 'Liberation Sans',sans-serif;color:#8a8a8a;letter-spacing:-0.588px;white-space:nowrap;">AutoGrid</div>
<div style="left:1443px;top:272px;width:62px;height:15px;background:#5e5e5e;border-radius:2px"></div>
<div style="left:1465.2805921875px;top:274.69px;font:normal 11px/11px 'Liberation Sans',sans-serif;color:#e4e4e4;letter-spacing:-0.607px;white-space:nowrap;">Box</div>
<div style="left:1517px;top:272px;width:62px;height:15px;background:#5e5e5e;border-radius:2px"></div>
<div style="left:1535.9030421875px;top:274.69px;font:normal 11px/11px 'Liberation Sans',sans-serif;color:#e4e4e4;letter-spacing:-0.601px;white-space:nowrap;">Cone</div>
<div style="left:1443px;top:292px;width:62px;height:15px;background:#5e5e5e;border-radius:2px"></div>
<div style="left:1457.6826859375px;top:294.69px;font:normal 11px/11px 'Liberation Sans',sans-serif;color:#e4e4e4;letter-spacing:-0.516px;white-space:nowrap;">Sphere</div>
<div style="left:1517px;top:292px;width:62px;height:15px;background:#5e5e5e;border-radius:2px"></div>
<div style="left:1522.1184953125px;top:294.69px;font:normal 11px/11px 'Liberation Sans',sans-serif;color:#e4e4e4;letter-spacing:-0.530px;white-space:nowrap;">GeoSphere</div>
<div style="left:1443px;top:312px;width:62px;height:15px;background:#5e5e5e;border-radius:2px"></div>
<div style="left:1455.4392875px;top:314.69px;font:normal 11px/11px 'Liberation Sans',sans-serif;color:#e4e4e4;letter-spacing:-0.430px;white-space:nowrap;">Cylinder</div>
<div style="left:1517px;top:312px;width:62px;height:15px;background:#5e5e5e;border-radius:2px"></div>
<div style="left:1536.6541359375px;top:314.69px;font:normal 11px/11px 'Liberation Sans',sans-serif;color:#e4e4e4;letter-spacing:-0.564px;white-space:nowrap;">Tube</div>
<div style="left:1443px;top:332px;width:62px;height:15px;background:#5e5e5e;border-radius:2px"></div>
<div style="left:1461.6263234375px;top:334.69px;font:normal 11px/11px 'Liberation Sans',sans-serif;color:#e4e4e4;letter-spacing:-0.478px;white-space:nowrap;">Torus</div>
<div style="left:1517px;top:332px;width:62px;height:15px;background:#5e5e5e;border-radius:2px"></div>
<div style="left:1529.441659375px;top:334.69px;font:normal 11px/11px 'Liberation Sans',sans-serif;color:#e4e4e4;letter-spacing:-0.497px;white-space:nowrap;">Pyramid</div>
<div style="left:1443px;top:351px;width:62px;height:15px;background:#5e5e5e;border-radius:2px"></div>
<div style="left:1458.80735px;top:353.69px;font:normal 11px/11px 'Liberation Sans',sans-serif;color:#e4e4e4;letter-spacing:-0.480px;white-space:nowrap;">Teapot</div>
<div style="left:1517px;top:351px;width:62px;height:15px;background:#5e5e5e;border-radius:2px"></div>
<div style="left:1535.0578640625px;top:353.69px;font:normal 11px/11px 'Liberation Sans',sans-serif;color:#e4e4e4;letter-spacing:-0.500px;white-space:nowrap;">Plane</div>
<div style="left:1443px;top:371px;width:62px;height:15px;background:#5e5e5e;border-radius:2px"></div>
<div style="left:1454.8763625px;top:373.69px;font:normal 11px/11px 'Liberation Sans',sans-serif;color:#e4e4e4;letter-spacing:-0.443px;white-space:nowrap;">TextPlus</div>
<div style="left:1421px;top:396px;width:180px;height:51px;background:#4d4d4d;border-radius:2px"></div>
<div style="left:1438px;top:398.27px;font:bold 11.5px/11.5px 'Liberation Sans',sans-serif;color:#f0f0f0;letter-spacing:-0.310px;white-space:nowrap;">Name and Color</div>
<svg style="left:1425px;top:400px;" width="9" height="6" viewBox="0 0 9 6"><path d="M0 0 L8 0 L4 5 Z" fill="#ccc"/></svg>
<div style="left:1442px;top:420px;width:121px;height:17px;background:#575757;"></div>
<div style="left:1567px;top:419px;width:16px;height:19px;background:#000;"></div>
<div style="left:1604px;top:235px;width:5px;height:636px;background:#3c3c3c;"></div>
<div style="left:1796px;top:235px;width:4px;height:636px;background:#3c3c3c;"></div>
<div style="left:1418px;top:149px;width:382px;height:2px;background:repeating-linear-gradient(90deg,#8a8a8a 0 1px,transparent 1px 2px);"></div>
<div style="left:32px;top:876px;width:1768px;height:23px;background:#444;"></div>
<div style="left:41px;top:879px;width:13px;height:16px;background:#555;border-radius:3px"></div>
<div style="left:44px;top:881.69px;font:normal 11px/11px 'Liberation Sans',sans-serif;color:#ccc;letter-spacing:0.000px;white-space:nowrap;">&lt;</div>
<div style="left:56px;top:879px;width:116px;height:16px;background:#5a5a5a;border-radius:3px"></div>
<div style="left:97px;top:881.69px;font:normal 11px/11px 'Liberation Sans',sans-serif;color:#ddd;letter-spacing:-0.252px;white-space:nowrap;">0 / 100</div>
<div style="left:174px;top:879px;width:13px;height:16px;background:#555;border-radius:3px"></div>
<div style="left:176px;top:881.69px;font:normal 11px/11px 'Liberation Sans',sans-serif;color:#ccc;letter-spacing:0.000px;white-space:nowrap;">&gt;</div>
<div style="left:40px;top:898px;width:1760px;height:1px;background:#222;"></div>
<div style="left:40px;top:899px;width:48px;height:24px;background:#444;"></div>
<div style="left:88px;top:899px;width:1667px;height:24px;background:#2c2c2c;"></div>
<div style="left:91px;top:900px;width:7px;height:22px;background:#b8a830;"></div>
<svg style="left:88px;top:899px;" width="1667" height="24" viewBox="0 0 1667 24"><rect x="4.5" y="1" width="1.2" height="10" fill="#a8a8a8"/><rect x="21.1" y="1" width="1.2" height="10" fill="#a8a8a8"/><rect x="37.6" y="1" width="1.2" height="10" fill="#a8a8a8"/><rect x="54.2" y="1" width="1.2" height="10" fill="#a8a8a8"/><rect x="70.8" y="1" width="1.2" height="10" fill="#a8a8a8"/><rect x="87.3" y="1" width="1.2" height="10" fill="#a8a8a8"/><rect x="103.9" y="1" width="1.2" height="10" fill="#a8a8a8"/><rect x="120.5" y="1" width="1.2" height="10" fill="#a8a8a8"/><rect x="137.1" y="1" width="1.2" height="10" fill="#a8a8a8"/><rect x="153.6" y="1" width="1.2" height="10" fill="#a8a8a8"/><rect x="170.2" y="1" width="1.2" height="10" fill="#a8a8a8"/><rect x="186.8" y="1" width="1.2" height="10" fill="#a8a8a8"/><rect x="203.3" y="1" width="1.2" height="10" fill="#a8a8a8"/><rect x="219.9" y="1" width="1.2" height="10" fill="#a8a8a8"/><rect x="236.5" y="1" width="1.2" height="10" fill="#a8a8a8"/><rect x="253.1" y="1" width="1.2" height="10" fill="#a8a8a8"/><rect x="269.6" y="1" width="1.2" height="10" fill="#a8a8a8"/><rect x="286.2" y="1" width="1.2" height="10" fill="#a8a8a8"/><rect x="302.8" y="1" width="1.2" height="10" fill="#a8a8a8"/><rect x="319.3" y="1" width="1.2" height="10" fill="#a8a8a8"/><rect x="335.9" y="1" width="1.2" height="10" fill="#a8a8a8"/><rect x="352.5" y="1" width="1.2" height="10" fill="#a8a8a8"/><rect x="369.0" y="1" width="1.2" height="10" fill="#a8a8a8"/><rect x="385.6" y="1" width="1.2" height="10" fill="#a8a8a8"/><rect x="402.2" y="1" width="1.2" height="10" fill="#a8a8a8"/><rect x="418.8" y="1" width="1.2" height="10" fill="#a8a8a8"/><rect x="435.3" y="1" width="1.2" height="10" fill="#a8a8a8"/><rect x="451.9" y="1" width="1.2" height="10" fill="#a8a8a8"/><rect x="468.5" y="1" width="1.2" height="10" fill="#a8a8a8"/><rect x="485.0" y="1" width="1.2" height="10" fill="#a8a8a8"/><rect x="501.6" y="1" width="1.2" height="10" fill="#a8a8a8"/><rect x="518.2" y="1" width="1.2" height="10" fill="#a8a8a8"/><rect x="534.7" y="1" width="1.2" height="10" fill="#a8a8a8"/><rect x="551.3" y="1" width="1.2" height="10" fill="#a8a8a8"/><rect x="567.9" y="1" width="1.2" height="10" fill="#a8a8a8"/><rect x="584.5" y="1" width="1.2" height="10" fill="#a8a8a8"/><rect x="601.0" y="1" width="1.2" height="10" fill="#a8a8a8"/><rect x="617.6" y="1" width="1.2" height="10" fill="#a8a8a8"/><rect x="634.2" y="1" width="1.2" height="10" fill="#a8a8a8"/><rect x="650.7" y="1" width="1.2" height="10" fill="#a8a8a8"/><rect x="667.3" y="1" width="1.2" height="10" fill="#a8a8a8"/><rect x="683.9" y="1" width="1.2" height="10" fill="#a8a8a8"/><rect x="700.4" y="1" width="1.2" height="10" fill="#a8a8a8"/><rect x="717.0" y="1" width="1.2" height="10" fill="#a8a8a8"/><rect x="733.6" y="1" width="1.2" height="10" fill="#a8a8a8"/><rect x="750.1" y="1" width="1.2" height="10" fill="#a8a8a8"/><rect x="766.7" y="1" width="1.2" height="10" fill="#a8a8a8"/><rect x="783.3" y="1" width="1.2" height="10" fill="#a8a8a8"/><rect x="799.9" y="1" width="1.2" height="10" fill="#a8a8a8"/><rect x="816.4" y="1" width="1.2" height="10" fill="#a8a8a8"/><rect x="833.0" y="1" width="1.2" height="10" fill="#a8a8a8"/><rect x="849.6" y="1" width="1.2" height="10" fill="#a8a8a8"/><rect x="866.1" y="1" width="1.2" height="10" fill="#a8a8a8"/><rect x="882.7" y="1" width="1.2" height="10" fill="#a8a8a8"/><rect x="899.3" y="1" width="1.2" height="10" fill="#a8a8a8"/><rect x="915.9" y="1" width="1.2" height="10" fill="#a8a8a8"/><rect x="932.4" y="1" width="1.2" height="10" fill="#a8a8a8"/><rect x="949.0" y="1" width="1.2" height="10" fill="#a8a8a8"/><rect x="965.6" y="1" width="1.2" height="10" fill="#a8a8a8"/><rect x="982.1" y="1" width="1.2" height="10" fill="#a8a8a8"/><rect x="998.7" y="1" width="1.2" height="10" fill="#a8a8a8"/><rect x="1015.3" y="1" width="1.2" height="10" fill="#a8a8a8"/><rect x="1031.8" y="1" width="1.2" height="10" fill="#a8a8a8"/><rect x="1048.4" y="1" width="1.2" height="10" fill="#a8a8a8"/><rect x="1065.0" y="1" width="1.2" height="10" fill="#a8a8a8"/><rect x="1081.5" y="1" width="1.2" height="10" fill="#a8a8a8"/><rect x="1098.1" y="1" width="1.2" height="10" fill="#a8a8a8"/><rect x="1114.7" y="1" width="1.2" height="10" fill="#a8a8a8"/><rect x="1131.3" y="1" width="1.2" height="10" fill="#a8a8a8"/><rect x="1147.8" y="1" width="1.2" height="10" fill="#a8a8a8"/><rect x="1164.4" y="1" width="1.2" height="10" fill="#a8a8a8"/><rect x="1181.0" y="1" width="1.2" height="10" fill="#a8a8a8"/><rect x="1197.5" y="1" width="1.2" height="10" fill="#a8a8a8"/><rect x="1214.1" y="1" width="1.2" height="10" fill="#a8a8a8"/><rect x="1230.7" y="1" width="1.2" height="10" fill="#a8a8a8"/><rect x="1247.2" y="1" width="1.2" height="10" fill="#a8a8a8"/><rect x="1263.8" y="1" width="1.2" height="10" fill="#a8a8a8"/><rect x="1280.4" y="1" width="1.2" height="10" fill="#a8a8a8"/><rect x="1297.0" y="1" width="1.2" height="10" fill="#a8a8a8"/><rect x="1313.5" y="1" width="1.2" height="10" fill="#a8a8a8"/><rect x="1330.1" y="1" width="1.2" height="10" fill="#a8a8a8"/><rect x="1346.7" y="1" width="1.2" height="10" fill="#a8a8a8"/><rect x="1363.2" y="1" width="1.2" height="10" fill="#a8a8a8"/><rect x="1379.8" y="1" width="1.2" height="10" fill="#a8a8a8"/><rect x="1396.4" y="1" width="1.2" height="10" fill="#a8a8a8"/><rect x="1413.0" y="1" width="1.2" height="10" fill="#a8a8a8"/><rect x="1429.5" y="1" width="1.2" height="10" fill="#a8a8a8"/><rect x="1446.1" y="1" width="1.2" height="10" fill="#a8a8a8"/><rect x="1462.7" y="1" width="1.2" height="10" fill="#a8a8a8"/><rect x="1479.2" y="1" width="1.2" height="10" fill="#a8a8a8"/><rect x="1495.8" y="1" width="1.2" height="10" fill="#a8a8a8"/><rect x="1512.4" y="1" width="1.2" height="10" fill="#a8a8a8"/><rect x="1528.9" y="1" width="1.2" height="10" fill="#a8a8a8"/><rect x="1545.5" y="1" width="1.2" height="10" fill="#a8a8a8"/><rect x="1562.1" y="1" width="1.2" height="10" fill="#a8a8a8"/><rect x="1578.7" y="1" width="1.2" height="10" fill="#a8a8a8"/><rect x="1595.2" y="1" width="1.2" height="10" fill="#a8a8a8"/><rect x="1611.8" y="1" width="1.2" height="10" fill="#a8a8a8"/><rect x="1628.4" y="1" width="1.2" height="10" fill="#a8a8a8"/><rect x="1644.9" y="1" width="1.2" height="10" fill="#a8a8a8"/><rect x="1661.5" y="1" width="1.2" height="10" fill="#a8a8a8"/></svg>
<div style="left:89.9410546875px;top:911.69px;font:normal 11px/11px 'Liberation Sans',sans-serif;color:#e8e040;letter-spacing:0.000px;white-space:nowrap;">0</div>
<div style="left:172.7910546875px;top:911.69px;font:normal 11px/11px 'Liberation Sans',sans-serif;color:#d0d0d0;letter-spacing:0.000px;white-space:nowrap;">5</div>
<div style="left:252.582109375px;top:911.69px;font:normal 11px/11px 'Liberation Sans',sans-serif;color:#d0d0d0;letter-spacing:0.000px;white-space:nowrap;">10</div>
<div style="left:335.43210937500004px;top:911.69px;font:normal 11px/11px 'Liberation Sans',sans-serif;color:#d0d0d0;letter-spacing:0.000px;white-space:nowrap;">15</div>
<div style="left:418.282109375px;top:911.69px;font:normal 11px/11px 'Liberation Sans',sans-serif;color:#d0d0d0;letter-spacing:0.000px;white-space:nowrap;">20</div>
<div style="left:501.132109375px;top:911.69px;font:normal 11px/11px 'Liberation Sans',sans-serif;color:#d0d0d0;letter-spacing:0.000px;white-space:nowrap;">25</div>
<div style="left:583.982109375px;top:911.69px;font:normal 11px/11px 'Liberation Sans',sans-serif;color:#d0d0d0;letter-spacing:0.000px;white-space:nowrap;">30</div>
<div style="left:666.8321093750001px;top:911.69px;font:normal 11px/11px 'Liberation Sans',sans-serif;color:#d0d0d0;letter-spacing:0.000px;white-space:nowrap;">35</div>
<div style="left:749.682109375px;top:911.69px;font:normal 11px/11px 'Liberation Sans',sans-serif;color:#d0d0d0;letter-spacing:0.000px;white-space:nowrap;">40</div>
<div style="left:832.532109375px;top:911.69px;font:normal 11px/11px 'Liberation Sans',sans-serif;color:#d0d0d0;letter-spacing:0.000px;white-space:nowrap;">45</div>
<div style="left:915.382109375px;top:911.69px;font:normal 11px/11px 'Liberation Sans',sans-serif;color:#d0d0d0;letter-spacing:0.000px;white-space:nowrap;">50</div>
<div style="left:998.232109375px;top:911.69px;font:normal 11px/11px 'Liberation Sans',sans-serif;color:#d0d0d0;letter-spacing:0.000px;white-space:nowrap;">55</div>
<div style="left:1081.082109375px;top:911.69px;font:normal 11px/11px 'Liberation Sans',sans-serif;color:#d0d0d0;letter-spacing:0.000px;white-space:nowrap;">60</div>
<div style="left:1163.932109375px;top:911.69px;font:normal 11px/11px 'Liberation Sans',sans-serif;color:#d0d0d0;letter-spacing:0.000px;white-space:nowrap;">65</div>
<div style="left:1246.7821093750001px;top:911.69px;font:normal 11px/11px 'Liberation Sans',sans-serif;color:#d0d0d0;letter-spacing:0.000px;white-space:nowrap;">70</div>
<div style="left:1329.632109375px;top:911.69px;font:normal 11px/11px 'Liberation Sans',sans-serif;color:#d0d0d0;letter-spacing:0.000px;white-space:nowrap;">75</div>
<div style="left:1412.482109375px;top:911.69px;font:normal 11px/11px 'Liberation Sans',sans-serif;color:#d0d0d0;letter-spacing:0.000px;white-space:nowrap;">80</div>
<div style="left:1495.332109375px;top:911.69px;font:normal 11px/11px 'Liberation Sans',sans-serif;color:#d0d0d0;letter-spacing:0.000px;white-space:nowrap;">85</div>
<div style="left:1578.182109375px;top:911.69px;font:normal 11px/11px 'Liberation Sans',sans-serif;color:#d0d0d0;letter-spacing:0.000px;white-space:nowrap;">90</div>
<div style="left:1661.0321093750001px;top:911.69px;font:normal 11px/11px 'Liberation Sans',sans-serif;color:#d0d0d0;letter-spacing:0.000px;white-space:nowrap;">95</div>
<div style="left:1740.8231640625px;top:911.69px;font:normal 11px/11px 'Liberation Sans',sans-serif;color:#d0d0d0;letter-spacing:0.000px;white-space:nowrap;">100</div>
<div style="left:0px;top:923px;width:1800px;height:52px;background:#444;"></div>
<div style="left:0px;top:975px;width:1800px;height:3px;background:#9cc0dc;"></div>
<div style="left:4px;top:929px;width:92px;height:20px;background:#dcc7c7;border:1px solid #bbb;box-sizing:border-box"></div>
<div style="left:4px;top:950px;width:92px;height:21px;background:#ffffff;border:1px solid #aaa;box-sizing:border-box"></div>
<div style="left:9px;top:954.69px;font:normal 11px/11px 'Liberation Mono',monospace;color:#8a8a8a;letter-spacing:0.156px;white-space:nowrap;">MAXScript Mi</div>
<div style="left:99px;top:927px;width:2px;height:46px;background:#333;"></div>
<div style="left:104px;top:934.69px;font:normal 11px/11px 'Liberation Sans',sans-serif;color:#eeeeee;letter-spacing:-0.493px;white-space:nowrap;">None Selected</div>
<div style="left:104px;top:958.69px;font:normal 11px/11px 'Liberation Sans',sans-serif;color:#e8e8e8;letter-spacing:-0.410px;white-space:nowrap;">Click and drag to select and move objects</div>
<div style="left:958px;top:930px;width:21px;height:19px;background:#5b8fd6;border-radius:2px"></div>
<div style="left:1033px;top:935.69px;font:normal 11px/11px 'Liberation Sans',sans-serif;color:#ddd;letter-spacing:-0.262px;white-space:nowrap;">X:</div>
<div style="left:1047px;top:932px;width:53px;height:16px;background:#555;"></div>
<div style="left:1050px;top:936.11px;font:normal 10.5px/10.5px 'Liberation Sans',sans-serif;color:#8c8c8c;letter-spacing:0.636px;white-space:nowrap;">4.5878m</div>
<div style="left:1112px;top:935.69px;font:normal 11px/11px 'Liberation Sans',sans-serif;color:#ddd;letter-spacing:0.142px;white-space:nowrap;">Y:</div>
<div style="left:1126px;top:932px;width:52px;height:16px;background:#555;"></div>
<div style="left:1128px;top:936.11px;font:normal 10.5px/10.5px 'Liberation Sans',sans-serif;color:#8c8c8c;letter-spacing:-0.048px;white-space:nowrap;">-0.1494m</div>
<div style="left:1192px;top:935.69px;font:normal 11px/11px 'Liberation Sans',sans-serif;color:#ddd;letter-spacing:-1.184px;white-space:nowrap;">Z:</div>
<div style="left:1204px;top:932px;width:53px;height:16px;background:#555;"></div>
<div style="left:1207px;top:936.11px;font:normal 10.5px/10.5px 'Liberation Sans',sans-serif;color:#8c8c8c;letter-spacing:-0.955px;white-space:nowrap;">0.0m</div>
<div style="left:1272px;top:935.69px;font:normal 11px/11px 'Liberation Sans',sans-serif;color:#eeeeee;letter-spacing:-0.425px;white-space:nowrap;">Grid = 10.0m</div>
<div style="left:1247px;top:955px;width:1px;height:17px;background:#222;"></div>
<div style="left:1272px;top:958.69px;font:normal 11px/11px 'Liberation Sans',sans-serif;color:#e8e8e8;letter-spacing:-0.527px;white-space:nowrap;">Add Time Tag</div>
<div style="left:1398px;top:932px;width:1px;height:16px;background:#222;"></div>
<div style="left:1466px;top:932px;width:1px;height:16px;background:#222;"></div>
<div style="left:1399px;top:953px;width:64px;height:15px;background:#555;"></div>
<div style="left:1403px;top:955.69px;font:normal 11px/11px 'Liberation Sans',sans-serif;color:#ddd;letter-spacing:0.000px;white-space:nowrap;">0</div>
<div style="left:1500px;top:930px;width:37px;height:39px;background:#555;border-radius:3px"></div>
<div style="left:1543px;top:930px;width:43px;height:18px;background:#585858;border-radius:2px"></div>
<div style="left:1544px;top:934.69px;font:normal 11px/11px 'Liberation Sans',sans-serif;color:#ddd;letter-spacing:-0.485px;white-space:nowrap;">Auto Key</div>
<div style="left:1543px;top:952px;width:43px;height:18px;background:#585858;border-radius:2px"></div>
<div style="left:1546px;top:956.69px;font:normal 11px/11px 'Liberation Sans',sans-serif;color:#ddd;letter-spacing:-0.542px;white-space:nowrap;">Set Key</div>
<div style="left:1591px;top:930px;width:107px;height:18px;background:#5a5a5a;border-radius:2px"></div>
<div style="left:1595px;top:934.69px;font:normal 11px/11px 'Liberation Sans',sans-serif;color:#e0e0e0;letter-spacing:-0.641px;white-space:nowrap;">Selected</div>
<svg style="left:1684px;top:937px;" width="8" height="5" viewBox="0 0 8 5"><path d="M0 0 L7 0 L3.5 4 Z" fill="#ddd"/></svg>
<div style="left:1615px;top:952px;width:83px;height:18px;background:#585858;border-radius:2px"></div>
<div style="left:1627px;top:956.69px;font:normal 11px/11px 'Liberation Sans',sans-serif;color:#e0e0e0;letter-spacing:-0.305px;white-space:nowrap;">Key Filters...</div>
<div style="left:3px;top:107px;width:26px;height:3px;background:repeating-linear-gradient(90deg,#8a8a8a 0 1px,transparent 1px 2px);opacity:.8"></div>
<div style="left:34px;top:106px;width:3px;height:35px;background:repeating-linear-gradient(#8a8a8a 0 1px,transparent 1px 2px);opacity:.8"></div>
<div style="left:34px;top:149px;width:35px;height:3px;background:repeating-linear-gradient(90deg,#8a8a8a 0 1px,transparent 1px 2px);opacity:.8"></div>
<div style="left:6px;top:888px;width:20px;height:2px;background:#1e1e1e;"></div>
<div style="left:37px;top:880px;width:3px;height:42px;background:repeating-linear-gradient(#8a8a8a 0 1px,transparent 1px 2px);opacity:.7"></div>
<div style="left:2px;top:45px;width:4px;height:25px;background:repeating-linear-gradient(#9a9a9a 0 1px,transparent 1px 2px);opacity:.7"></div>
<div style="left:2px;top:76px;width:4px;height:25px;background:repeating-linear-gradient(#9a9a9a 0 1px,transparent 1px 2px);opacity:.7"></div>
<svg style="left:12px;top:47px;" width="24" height="21" viewBox="0 0 24 21"><path d="M4 7 H14 A6 6 0 0 1 14 19 H10" fill="none" stroke="#d4d4d4" stroke-width="3.2"/><path d="M1 7 L8 1.5 L8 12.5 Z" fill="#d4d4d4"/></svg>
<svg style="left:42px;top:47px;" width="24" height="21" viewBox="0 0 24 21"><path d="M20 7 H10 A6 6 0 0 0 10 19 H14" fill="none" stroke="#d4d4d4" stroke-width="3.2"/><path d="M23 7 L16 1.5 L16 12.5 Z" fill="#d4d4d4"/></svg>
<div style="left:71px;top:50px;width:2px;height:15px;background:#262626;"></div>
<svg style="left:79px;top:47px;" width="22" height="22" viewBox="0 0 22 22"><g fill="none" stroke="#d4d4d4" stroke-width="2.8" stroke-linecap="round"><path d="M8 11 L4.5 14.5 A3.2 3.2 0 0 0 9 19 L12.5 15.5"/><path d="M11 8 L14.5 4.5 A3.2 3.2 0 0 1 19 9 L15.5 12.5"/><path d="M8.5 15 L14.5 9" /></g></svg>
<svg style="left:109px;top:47px;" width="22" height="22" viewBox="0 0 22 22"><g fill="none" stroke="#d4d4d4" stroke-width="2.8" stroke-linecap="round"><path d="M8 11 L4.5 14.5 A3.2 3.2 0 0 0 9 19 L12.5 15.5"/><path d="M11 8 L14.5 4.5 A3.2 3.2 0 0 1 19 9 L15.5 12.5"/></g><path d="M5 6 L16 17" stroke="#3dbdb1" stroke-width="2.4"/></svg>
<svg style="left:138px;top:46px;" width="24" height="23" viewBox="0 0 24 23"><g fill="none" stroke="#d4d4d4" stroke-width="1.8"><path d="M1 13 Q5 10 9 13 T17 13 T22 12"/><path d="M1 17 Q5 14 9 17 T17 17 T22 16"/><path d="M1 21 Q5 18 9 21 T17 21 T22 20"/></g><g fill="none" stroke="#f2b42a" stroke-width="2.4"><path d="M10 12 L14 3 A2.5 2.5 0 0 1 18.5 5 L16 10"/><path d="M13 8 L11 13"/></g></svg>
<div style="left:167px;top:50px;width:2px;height:15px;background:#262626;"></div>
<svg style="left:238px;top:46px;" width="26" height="24" viewBox="0 0 26 24"><rect x="2" y="1" width="16" height="16" fill="#d4d4d4"/><path d="M15 10 L15 22 L18 19 L21 23 L23 22 L20.5 18 L24 17.5 Z" fill="#f2b42a" stroke="#333" stroke-width=".8"/></svg>
<svg style="left:268px;top:46px;" width="26" height="24" viewBox="0 0 26 24"><g fill="#d4d4d4"><rect x="2" y="1" width="19" height="3"/><rect x="2" y="6" width="12" height="3"/><rect x="2" y="11" width="19" height="3"/><rect x="2" y="15" width="11" height="2"/></g><path d="M15 10 L15 22 L18 19 L21 23 L23 22 L20.5 18 L24 17.5 Z" fill="#f2b42a" stroke="#333" stroke-width=".8"/></svg>
<svg style="left:299px;top:46px;" width="26" height="25" viewBox="0 0 26 25"><rect x="2" y="2" width="19" height="19" fill="none" stroke="#3dbdb1" stroke-width="2.2" stroke-dasharray="4 2.5"/></svg>
<svg style="left:318px;top:66px;" width="5" height="5" viewBox="0 0 5 5"><path d="M5 0 L5 5 L0 5 Z" fill="#e0e0e0"/></svg>
<svg style="left:329px;top:46px;" width="26" height="24" viewBox="0 0 26 24"><rect x="2" y="2" width="14" height="19" fill="none" stroke="#d4d4d4" stroke-width="2" stroke-dasharray="4 2.5"/><rect x="12" y="7" width="11" height="10" fill="#3dbdb1"/></svg>
<div style="left:359px;top:50px;width:2px;height:15px;background:#262626;"></div>
<div style="left:362px;top:44px;width:29px;height:27px;background:#5d8fd2;border-radius:3px"></div>
<svg style="left:364px;top:46px;" width="25" height="23" viewBox="0 0 25 23"><path d="M12.5 1 L24 11.5 L12.5 22 L1 11.5 Z" fill="#d4d4d4"/><g stroke="#40506a" stroke-width="1.6"><path d="M12.5 5 V18 M5 11.5 H20"/></g><g fill="#40506a"><path d="M12.5 4 L10 7 H15 Z"/><path d="M12.5 19 L10 16 H15 Z"/><path d="M4 11.5 L7 9 V14 Z"/><path d="M21 11.5 L18 9 V14 Z"/></g></svg>
<svg style="left:395px;top:46px;" width="24" height="24" viewBox="0 0 24 24"><path d="M17.5 7 A7.5 7.5 0 1 0 19 15" fill="none" stroke="#d4d4d4" stroke-width="3.2"/><path d="M13 2 L21 3 L18.5 10 Z" fill="#d4d4d4"/></svg>
<svg style="left:424px;top:46px;" width="26" height="25" viewBox="0 0 26 25"><rect x="2" y="2" width="20" height="19" fill="none" stroke="#3dbdb1" stroke-width="2" stroke-dasharray="4 2.5"/><rect x="2" y="11" width="10" height="10" fill="#d4d4d4"/><path d="M9 6 H16 V13" fill="none" stroke="#3dbdb1" stroke-width="1.6"/></svg>
<svg style="left:443px;top:66px;" width="5" height="5" viewBox="0 0 5 5"><path d="M5 0 L5 5 L0 5 Z" fill="#e0e0e0"/></svg>
<svg style="left:455px;top:46px;" width="26" height="25" viewBox="0 0 26 25"><circle cx="10" cy="12" r="9" fill="#d4d4d4"/><circle cx="17.5" cy="5.5" r="5" fill="#3dbdb1"/><path d="M7 15 L16 7" stroke="#f2b42a" stroke-width="2.6"/><path d="M7 15 L16 7" stroke="#333" stroke-width=".6"/></svg>
<svg style="left:476px;top:66px;" width="5" height="5" viewBox="0 0 5 5"><path d="M5 0 L5 5 L0 5 Z" fill="#e0e0e0"/></svg>
<svg style="left:550px;top:46px;" width="24" height="24" viewBox="0 0 24 24"><rect x="1" y="1" width="8" height="13" fill="#d4d4d4"/><rect x="10" y="1" width="9" height="9" fill="#d4d4d4"/><path d="M5 13 V21 M1 17 H9 M14 8 V15 M10.5 11.5 H18" stroke="#3dbdb1" stroke-width="2.2"/></svg>
<svg style="left:570px;top:66px;" width="5" height="5" viewBox="0 0 5 5"><path d="M5 0 L5 5 L0 5 Z" fill="#e0e0e0"/></svg>
<div style="left:580px;top:50px;width:2px;height:15px;background:#262626;"></div>
<svg style="left:586px;top:46px;" width="24" height="24" viewBox="0 0 24 24"><path d="M11 4 V21 M1 12 H21" stroke="#d4d4d4" stroke-width="2.2"/><rect x="8.5" y="1" width="5" height="5" fill="#3dbdb1"/><rect x="0" y="10" width="4" height="4" fill="#d4d4d4"/><rect x="18" y="10" width="4" height="4" fill="#d4d4d4"/><rect x="9" y="18" width="4" height="4" fill="#d4d4d4"/></svg>
<svg style="left:616px;top:46px;" width="24" height="24" viewBox="0 0 24 24"><rect x="1" y="1" width="21" height="21" rx="3" fill="#d4d4d4"/><path d="M11.5 4 L16 9 H13 V13 H10 V9 H7 Z" fill="#333"/></svg>
<div style="left:646px;top:50px;width:2px;height:15px;background:#262626;"></div>
<svg style="left:652px;top:45px;" width="26" height="26" viewBox="0 0 26 26"><text x="0" y="21" font-family="Liberation Sans" font-weight="bold" font-size="21" fill="#d4d4d4">3</text><path d="M12 9 Q13 2 18 2.5 Q23 3 21 9 Q20 11 18 12" fill="none" stroke="#f2b42a" stroke-width="2.4"/></svg>
<svg style="left:670px;top:66px;" width="5" height="5" viewBox="0 0 5 5"><path d="M5 0 L5 5 L0 5 Z" fill="#e0e0e0"/></svg>
<div style="left:679px;top:44px;width:28px;height:27px;background:#5d8fd2;border-radius:3px"></div>
<svg style="left:681px;top:46px;" width="25" height="24" viewBox="0 0 25 24"><path d="M4 4 V20 H22" fill="none" stroke="#d4d4d4" stroke-width="2.2"/><path d="M4 12 A8 8 0 0 1 12 20" fill="none" stroke="#d4d4d4" stroke-width="1.8"/><path d="M12 9 Q13 2 18 2.5 Q23 3 21 9 Q20 11 18 12" fill="none" stroke="#f2b42a" stroke-width="2.2"/></svg>
<svg style="left:712px;top:46px;" width="24" height="24" viewBox="0 0 24 24"><circle cx="5" cy="7" r="3" fill="none" stroke="#d4d4d4" stroke-width="2"/><circle cx="15" cy="17.5" r="3.5" fill="none" stroke="#d4d4d4" stroke-width="2"/><path d="M3 22 L16 6" stroke="#d4d4d4" stroke-width="1.6"/><path d="M10 8 Q11 1 16 1.5 Q21 2 19 8 Q18 10 16 11" fill="none" stroke="#f2b42a" stroke-width="2.2"/></svg>
<svg style="left:742px;top:46px;" width="24" height="24" viewBox="0 0 24 24"><path d="M6 3 L11 10 H1 Z M6 21 L11 14 H1 Z" fill="#d4d4d4"/><path d="M12 8 Q13 1 18 1.5 Q23 2 21 8 Q20 10 18 11" fill="none" stroke="#f2b42a" stroke-width="2.2"/></svg>
<div style="left:772px;top:50px;width:2px;height:15px;background:#262626;"></div>
<svg style="left:779px;top:46px;" width="24" height="24" viewBox="0 0 24 24"><text x="0" y="19" font-family="Liberation Sans" font-size="18" fill="#d4d4d4">{ }</text><path d="M9 14 L19 3" stroke="#f2b42a" stroke-width="2.6"/></svg>
<div style="left:920px;top:50px;width:2px;height:15px;background:#262626;"></div>
<svg style="left:925px;top:46px;" width="26" height="24" viewBox="0 0 26 24"><path d="M1 3 L8 6 V21 L1 18 Z" fill="#d4d4d4"/><path d="M12 2 V22" stroke="#d4d4d4" stroke-width="1.6" stroke-dasharray="2.5 1.5"/><path d="M23 3 L16 6 V21 L23 18 Z" fill="#3dbdb1"/></svg>
<svg style="left:955px;top:46px;" width="24" height="24" viewBox="0 0 24 24"><path d="M2 1 V22" stroke="#3dbdb1" stroke-width="2" stroke-dasharray="2.5 1.5"/><rect x="5" y="3" width="11" height="6" fill="#d4d4d4"/><rect x="5" y="12" width="14" height="7" fill="#d4d4d4"/></svg>
<svg style="left:979px;top:68px;" width="5" height="5" viewBox="0 0 5 5"><path d="M5 0 L5 5 L0 5 Z" fill="#e0e0e0"/></svg>
<div style="left:986px;top:50px;width:2px;height:15px;background:#262626;"></div>
<svg style="left:992px;top:46px;" width="24" height="24" viewBox="0 0 24 24"><rect x="1" y="1" width="19" height="21" fill="#d4d4d4"/><g fill="#333"><rect x="3" y="3" width="15" height="1.6"/><rect x="3" y="7" width="3" height="2.4"/><rect x="8" y="7" width="10" height="2.4"/><rect x="3" y="12" width="3" height="2.4"/><rect x="8" y="12" width="10" height="2.4"/><rect x="3" y="17" width="3" height="2.4"/><rect x="8" y="17" width="10" height="2.4"/></g></svg>
<svg style="left:1022px;top:46px;" width="24" height="24" viewBox="0 0 24 24"><rect x="1" y="1" width="19" height="21" fill="#d4d4d4"/><rect x="3" y="3" width="15" height="1.6" fill="#333"/><g fill="#333"><path d="M10.5 6 L17 9.5 L10.5 13 L4 9.5 Z"/><path d="M4 12.5 L10.5 16 L17 12.5 L17 14 L10.5 17.5 L4 14 Z"/><path d="M4 16 L10.5 19.5 L17 16 L17 17.5 L10.5 21 L4 17.5 Z"/></g></svg>
<div style="left:1051px;top:50px;width:2px;height:15px;background:#262626;"></div>
<div style="left:1055px;top:44px;width:28px;height:27px;background:#5f86bd;border:2px solid #6f9ad6;border-radius:4px;box-sizing:border-box"></div>
<svg style="left:1058px;top:47px;" width="23" height="22" viewBox="0 0 23 22"><rect x="2" y="2" width="19" height="18" fill="#d4d4d4"/><g fill="#333"><rect x="4" y="10" width="5" height="2.5"/><rect x="12" y="10" width="5" height="2.5"/><rect x="4" y="15" width="5" height="2.5"/><rect x="12" y="15" width="5" height="2.5"/></g><rect x="12" y="3" width="3" height="3" fill="#5f86bd"/><rect x="16" y="3" width="3" height="3" fill="#5f86bd"/></svg>
<svg style="left:1087px;top:46px;" width="24" height="24" viewBox="0 0 24 24"><rect x="1" y="1" width="21" height="21" fill="#d4d4d4"/><rect x="1" y="4" width="21" height="1.4" fill="#333"/><g fill="#333"><rect x="3" y="1.5" width="2" height="2"/><rect x="6" y="1.5" width="2" height="2"/><rect x="9" y="1.5" width="2" height="2"/></g><path d="M3 15 Q6 8 10 13 T19 13" fill="none" stroke="#3dbdb1" stroke-width="2.4"/></svg>
<svg style="left:1117px;top:46px;" width="24" height="24" viewBox="0 0 24 24"><rect x="1" y="1" width="21" height="4" fill="#d4d4d4"/><path d="M11.5 7 V15" stroke="#3dbdb1" stroke-width="3"/><path d="M6 12 L11.5 17 L17 12 Z" fill="#3dbdb1"/><rect x="1" y="18" width="21" height="4" fill="#3dbdb1"/></svg>
<div style="left:1148px;top:50px;width:2px;height:15px;background:#262626;"></div>
<svg style="left:1153px;top:46px;" width="24" height="24" viewBox="0 0 24 24"><rect x="1" y="1" width="21" height="21" fill="#d4d4d4"/><rect x="1" y="4" width="21" height="1.4" fill="#333"/><g fill="#333"><rect x="3" y="1.5" width="2" height="2"/><rect x="6" y="1.5" width="2" height="2"/><rect x="9" y="1.5" width="2" height="2"/></g><circle cx="7.5" cy="13.5" r="4.5" fill="none" stroke="#333" stroke-width="1.4"/><path d="M5 11 L10 16 M10 11 L5 16" stroke="#333" stroke-width="1"/><g fill="#333"><rect x="13" y="8" width="7" height="2"/><rect x="14" y="12" width="6" height="2"/><rect x="13" y="16" width="7" height="2"/></g></svg>
<svg style="left:1175px;top:68px;" width="5" height="5" viewBox="0 0 5 5"><path d="M5 0 L5 5 L0 5 Z" fill="#e0e0e0"/></svg>
<div style="left:1183px;top:50px;width:2px;height:15px;background:#262626;"></div>
<svg style="left:1188px;top:46px;" width="26" height="25" viewBox="0 0 26 25"><path d="M6 9 Q5 19 13 19 Q21 19 20 9 Z" fill="#d4d4d4"/><path d="M1 6 L6 12 L6 9 Z" fill="#d4d4d4"/><path d="M20 10 Q24 10 23 13 Q22 16 19 16" fill="none" stroke="#d4d4d4" stroke-width="1.8"/><rect x="11" y="6" width="4" height="3" fill="#d4d4d4"/><circle cx="18" cy="17" r="4.5" fill="none" stroke="#f2b42a" stroke-width="2.6" stroke-dasharray="2 1.2"/><circle cx="18" cy="17" r="2.5" fill="#333"/></svg>
<svg style="left:1219px;top:46px;" width="24" height="24" viewBox="0 0 24 24"><rect x="1" y="1" width="21" height="22" fill="#3dbdb1"/><rect x="1" y="1" width="21" height="4" fill="#d4d4d4"/><g fill="#333"><rect x="3" y="2" width="2" height="2"/><rect x="6" y="2" width="2" height="2"/><rect x="9" y="2" width="2" height="2"/></g><g transform="translate(0,2) scale(.95)"><path d="M6 9 Q5 19 13 19 Q21 19 20 9 Z" fill="#d4d4d4"/><path d="M1 6 L6 12 L6 9 Z" fill="#d4d4d4"/><path d="M20 10 Q24 10 23 13 Q22 16 19 16" fill="none" stroke="#d4d4d4" stroke-width="1.8"/><rect x="11" y="6" width="4" height="3" fill="#d4d4d4"/></g></svg>
<div style="left:1246px;top:44px;width:27px;height:26px;background:#333;border-radius:3px"></div>
<svg style="left:1247px;top:46px;" width="26" height="25" viewBox="0 0 26 25"><path d="M6 9 Q5 19 13 19 Q21 19 20 9 Z" fill="#d4d4d4"/><path d="M1 6 L6 12 L6 9 Z" fill="#d4d4d4"/><path d="M20 10 Q24 10 23 13 Q22 16 19 16" fill="none" stroke="#d4d4d4" stroke-width="1.8"/><rect x="11" y="6" width="4" height="3" fill="#d4d4d4"/><path d="M18 9 L13 17 H17 L15 23 L21 14 H17 Z" fill="#3dbdb1"/></svg>
<svg style="left:1266px;top:65px;" width="5" height="5" viewBox="0 0 5 5"><path d="M5 0 L5 5 L0 5 Z" fill="#e0e0e0"/></svg>
<svg style="left:1279px;top:46px;" width="26" height="24" viewBox="0 0 26 24"><path d="M6 9 Q5 19 13 19 Q21 19 20 9 Z" fill="#d4d4d4"/><path d="M1 6 L6 12 L6 9 Z" fill="#d4d4d4"/><path d="M20 10 Q24 10 23 13 Q22 16 19 16" fill="none" stroke="#d4d4d4" stroke-width="1.8"/><rect x="11" y="6" width="4" height="3" fill="#d4d4d4"/><path d="M8 22 Q6 17 11 17 Q13 13 17 15 Q22 14 22 18 Q25 19 23 22 Z" fill="#3dbdb1"/></svg>
<svg style="left:1309px;top:46px;" width="24" height="24" viewBox="0 0 24 24"><rect x="1" y="2" width="9" height="9" fill="#d4d4d4"/><path d="M3 9 L5 5 L7 8 L8 6 V9 Z" fill="#333"/><rect x="1" y="13" width="9" height="9" fill="#d4d4d4"/><path d="M3 20 L5 16 L7 19 L8 17 V20 Z" fill="#333"/><rect x="12" y="2" width="9" height="9" fill="#d4d4d4"/><path d="M14 9 L16 5 L18 8 L19 6 V9 Z" fill="#333"/><rect x="12" y="13" width="9" height="9" fill="#d4d4d4"/><path d="M14 20 L16 16 L18 19 L19 17 V20 Z" fill="#333"/></svg>
<div style="left:1339px;top:46px;width:4px;height:25px;background:repeating-linear-gradient(#9a9a9a 0 1px,transparent 1px 2px);opacity:.7"></div>
<svg style="left:1550px;top:47px;" width="24" height="24" viewBox="0 0 24 24"><rect x="6" y="3" width="14" height="14" fill="#d4d4d4"/><rect x="1" y="1" width="4" height="18" rx="2" fill="#d4d4d4"/><rect x="1" y="15" width="19" height="4" rx="2" fill="#d4d4d4"/><circle cx="15" cy="17" r="4.5" fill="#6a4a10" stroke="#f2b42a" stroke-width="2.4" stroke-dasharray="2 1"/></svg>
<svg style="left:1579px;top:47px;" width="24" height="24" viewBox="0 0 24 24"><rect x="6" y="3" width="14" height="14" fill="#d4d4d4"/><rect x="1" y="1" width="4" height="18" rx="2" fill="#d4d4d4"/><rect x="1" y="15" width="19" height="4" rx="2" fill="#d4d4d4"/><path d="M9 14 H14 L15.5 16 H21 V23 H9 Z" fill="#f2b42a"/></svg>
<svg style="left:1607px;top:47px;" width="24" height="24" viewBox="0 0 24 24"><rect x="6" y="3" width="14" height="14" fill="#d4d4d4"/><rect x="1" y="1" width="4" height="18" rx="2" fill="#d4d4d4"/><rect x="1" y="15" width="19" height="4" rx="2" fill="#d4d4d4"/><rect x="6" y="9" width="8" height="4" rx="1" fill="#f2b42a"/><path d="M9 13 V20 H15 M9 16 H15" stroke="#f2b42a" stroke-width="1.4" fill="none"/><rect x="14" y="14" width="5" height="4" fill="#f2b42a"/><rect x="14" y="19" width="5" height="4" fill="#f2b42a"/></svg>
<svg style="left:1636px;top:47px;" width="24" height="24" viewBox="0 0 24 24"><rect x="6" y="3" width="14" height="14" fill="#d4d4d4"/><rect x="1" y="1" width="4" height="18" rx="2" fill="#d4d4d4"/><rect x="1" y="15" width="19" height="4" rx="2" fill="#d4d4d4"/><rect x="8" y="10" width="5" height="5" fill="#f2b42a"/><rect x="16" y="12" width="5" height="5" fill="#f2b42a"/><rect x="8" y="18" width="5" height="5" fill="#f2b42a"/><path d="M10.5 15 V18 M13 12 H16" stroke="#f2b42a" stroke-width="1.2"/></svg>
<svg style="left:14px;top:78px;" width="20" height="22" viewBox="0 0 20 22"><rect x="0" y="0" width="19" height="21" fill="#d8d8d8"/><rect x="2" y="2" width="15" height="1.8" fill="#333"/><g fill="#333"><path d="M9.5 5 L16 8.5 L9.5 12 L3 8.5 Z"/><path d="M3 11.5 L9.5 15 L16 11.5 L16 13 L9.5 16.5 L3 13 Z"/><path d="M3 15 L9.5 18.5 L16 15 L16 16.5 L9.5 20 L3 16.5 Z"/></g></svg>
<svg style="left:40px;top:82px;" width="50" height="14" viewBox="0 0 50 14"><path d="M1 9 H10 M15 9 H25" stroke="#8a8a8a" stroke-width="2" stroke-dasharray="2 1"/><path d="M33 6 Q32 12 37 12 Q42 12 41 6 Z" fill="#ddd"/><path d="M30 4 L34 9" stroke="#ddd" stroke-width="1.6"/></svg>
<div style="left:89px;top:83px;width:10px;height:10px;background:#4a8ee6;border:1.5px solid #111;box-sizing:border-box"></div>
<svg style="left:237px;top:77px;" width="24" height="24" viewBox="0 0 24 24"><path d="M8 1 V22 M1 8 H20" stroke="#d4d4d4" stroke-width="3.4"/><g fill="#f2b42a"><path d="M14 10 L21 13 L14 16 L7 13 Z"/><path d="M7 15 L14 18 L21 15 V17 L14 20 L7 17 Z"/><path d="M7 18.5 L14 21.5 L21 18.5 V20.5 L14 23.5 L7 20.5 Z"/></g></svg>
<svg style="left:268px;top:77px;" width="24" height="24" viewBox="0 0 24 24"><g fill="#2a2a2a" stroke="#555" stroke-width=".6"><path d="M11 3 L21 8 L11 13 L1 8 Z"/><path d="M1 11 L11 16 L21 11 V13.5 L11 18.5 L1 13.5 Z"/><path d="M1 15.5 L11 20.5 L21 15.5 V18 L11 23 L1 18 Z"/></g><path d="M15 1 H19 V6 H21.5 L17 11 L12.5 6 H15 Z" fill="#2a2a2a" stroke="#555" stroke-width=".6"/></svg>
<svg style="left:297px;top:77px;" width="26" height="24" viewBox="0 0 26 24"><rect x="1" y="1" width="16" height="17" fill="#d4d4d4"/><path d="M15 10 L15 22 L18 19 L21 23 L23 22 L20.5 18 L24 17.5 Z" fill="#f2b42a" stroke="#333" stroke-width=".8"/></svg>
<svg style="left:327px;top:77px;" width="26" height="24" viewBox="0 0 26 24"><g fill="#2a2a2a" stroke="#555" stroke-width=".6"><path d="M11 3 L21 8 L11 13 L1 8 Z"/><path d="M1 11 L11 16 L21 11 V13.5 L11 18.5 L1 13.5 Z"/><path d="M1 15.5 L11 20.5 L21 15.5 V18 L11 23 L1 18 Z"/></g><path d="M15 10 L15 22 L18 19 L21 23 L23 22 L20.5 18 L24 17.5 Z" fill="#2a2a2a" stroke="#666" stroke-width=".8"/></svg>
<div style="left:357px;top:78px;width:4px;height:22px;background:repeating-linear-gradient(#9a9a9a 0 1px,transparent 1px 2px);opacity:.7"></div>
<svg style="left:367px;top:76px;" width="26" height="26" viewBox="0 0 26 26"><circle cx="10" cy="10" r="9" fill="#8aa3ad"/><path d="M3 7 Q7 3 10 6 Q14 9 17 5" fill="none" stroke="#4f6d58" stroke-width="3"/><circle cx="7" cy="6" r="3" fill="#dfe8ea" opacity=".7"/><rect x="9" y="10" width="15" height="13" fill="#e4e8ee" stroke="#3b4b66" stroke-width="1.2"/><rect x="9" y="10" width="15" height="3" fill="#9fb0c8"/><rect x="11" y="15" width="3" height="2" fill="#3b6ab0"/><rect x="15" y="15" width="7" height="1.6" fill="#333"/><rect x="11" y="19" width="3" height="2" fill="#999"/><rect x="15" y="19" width="7" height="1.6" fill="#777"/></svg>
<svg style="left:386px;top:95px;" width="5" height="5" viewBox="0 0 5 5"><path d="M5 0 L5 5 L0 5 Z" fill="#e0e0e0"/></svg>
<div style="left:397px;top:82px;width:2px;height:15px;background:#262626;"></div>
<svg style="left:406px;top:78px;" width="20" height="22" viewBox="0 0 20 22"><defs><radialGradient id="sph" cx=".4" cy=".35" r=".7"><stop offset="0" stop-color="#eee"/><stop offset=".6" stop-color="#888"/><stop offset="1" stop-color="#2a2a2a"/></radialGradient></defs><circle cx="9.5" cy="12" r="7.5" fill="url(#sph)"/></svg>
<svg style="left:420px;top:95px;" width="5" height="5" viewBox="0 0 5 5"><path d="M5 0 L5 5 L0 5 Z" fill="#e0e0e0"/></svg>
<svg style="left:434px;top:78px;" width="24" height="22" viewBox="0 0 24 22"><path d="M7 1 L1 5 L3.5 9 L6 8 V21 H18 V8 L20.5 9 L23 5 L17 1 Q12 4 7 1 Z" fill="#f2f2f2" stroke="#555" stroke-width=".6"/></svg>
<svg style="left:452px;top:95px;" width="5" height="5" viewBox="0 0 5 5"><path d="M5 0 L5 5 L0 5 Z" fill="#e0e0e0"/></svg>
<svg style="left:464px;top:80px;" width="24" height="18" viewBox="0 0 24 18"><path d="M1 4 L9 1 L22 11 L14 16 Z" fill="#2f6fd0"/><path d="M1 4 L9 1 L12 4 L4 7 Z" fill="#cfd8e0"/><ellipse cx="3" cy="5" rx="2.5" ry="3.5" fill="#e4e4e4"/></svg>
<svg style="left:481px;top:95px;" width="5" height="5" viewBox="0 0 5 5"><path d="M5 0 L5 5 L0 5 Z" fill="#e0e0e0"/></svg>
<svg style="left:493px;top:78px;" width="26" height="23" viewBox="0 0 26 23"><path d="M4 9 L8 7 L10 12 L6 15 L9 21 M10 12 L14 10 L17 13 M6 15 L3 20" fill="none" stroke="#eee" stroke-width="1.6"/><circle cx="5" cy="6" r="2" fill="#ddd"/><path d="M19 1 L20 5 L24 3 L21 7 L25 9 L21 9.5 L22 14 L19 10.5 L16 13 L17 9 L13 8 L17 6 L15 2 L18.5 4.5 Z" fill="#f2b42a"/></svg>
<svg style="left:511px;top:95px;" width="5" height="5" viewBox="0 0 5 5"><path d="M5 0 L5 5 L0 5 Z" fill="#e0e0e0"/></svg>
<div style="left:525px;top:82px;width:2px;height:15px;background:#262626;"></div>
<svg style="left:531px;top:77px;" width="24" height="24" viewBox="0 0 24 24"><path d="M2 2 H13 L15 4 L19 2 L21 6 L19 8 V14 L21 16 L19 20 L15 18 L13 21 H2 Z" fill="#b8b8b8" stroke="#6a6a6a" stroke-width=".8"/><path d="M4 6 V17 M7 6 V17" stroke="#333" stroke-width="1.6"/><path d="M16 6 L8 11.5 L16 17 Z" fill="none" stroke="#333" stroke-width="1.4"/></svg>
<svg style="left:562px;top:77px;" width="24" height="24" viewBox="0 0 24 24"><path d="M2 2 H13 L15 4 L19 2 L21 6 L19 8 V14 L21 16 L19 20 L15 18 L13 21 H2 Z" fill="#b8b8b8" stroke="#6a6a6a" stroke-width=".8"/><path d="M5 5 L15 11.5 L5 18 Z" fill="none" stroke="#333" stroke-width="1.6"/></svg>
<svg style="left:580px;top:95px;" width="5" height="5" viewBox="0 0 5 5"><path d="M5 0 L5 5 L0 5 Z" fill="#e0e0e0"/></svg>
<svg style="left:592px;top:77px;" width="24" height="24" viewBox="0 0 24 24"><path d="M2 2 H13 L15 4 L19 2 L21 6 L19 8 V14 L21 16 L19 20 L15 18 L13 21 H2 Z" fill="#b8b8b8" stroke="#6a6a6a" stroke-width=".8"/><path d="M3 6 V17 M6 6 V17" stroke="#333" stroke-width="1.6"/><path d="M9 6 L17 11.5 L9 17 Z" fill="none" stroke="#333" stroke-width="1.4"/></svg>
<div style="left:622px;top:78px;width:4px;height:22px;background:repeating-linear-gradient(#9a9a9a 0 1px,transparent 1px 2px);opacity:.7"></div>
<div style="left:631px;top:77px;width:23px;height:23px;background:#f4f4f4;"></div>
<svg style="left:631px;top:77px;" width="23" height="23" viewBox="0 0 23 23"><circle cx="11.5" cy="11.5" r="9" fill="#2aa7d8"/><path d="M11.5 5.5 L17 8.5 V14.5 L11.5 17.5 L6 14.5 V8.5 Z" fill="#fff"/><path d="M6 8.5 L11.5 11.5 L17 8.5 M11.5 11.5 V17.5" stroke="#2aa7d8" stroke-width="1" fill="none"/></svg>
<div style="left:661px;top:78px;width:4px;height:22px;background:repeating-linear-gradient(#9a9a9a 0 1px,transparent 1px 2px);opacity:.7"></div>
<div style="left:737px;top:78px;width:4px;height:22px;background:repeating-linear-gradient(#9a9a9a 0 1px,transparent 1px 2px);opacity:.7"></div>
<svg style="left:745px;top:77px;" width="24" height="23" viewBox="0 0 24 23"><path d="M2 1 L21 2 L22 21 L19 22 L17 18 L14 17 L13 13 L8 11 L7 7 Z" fill="#fafafa" stroke="#111" stroke-width="1.6"/></svg>
<div style="left:776px;top:78px;width:4px;height:22px;background:repeating-linear-gradient(#9a9a9a 0 1px,transparent 1px 2px);opacity:.7"></div>
<div style="left:785px;top:77px;width:22px;height:22px;background:#2f78d4;border:2px solid #5aa0ee;border-radius:5px;box-sizing:border-box"></div>
<svg style="left:785px;top:77px;" width="22" height="22" viewBox="0 0 22 22"><text x="2.5" y="16" font-family="Liberation Sans" font-weight="bold" font-size="12.5" fill="#fff">RB</text></svg>
<div style="left:816px;top:78px;width:4px;height:22px;background:repeating-linear-gradient(#9a9a9a 0 1px,transparent 1px 2px);opacity:.7"></div>
<div style="left:890px;top:78px;width:4px;height:22px;background:repeating-linear-gradient(#9a9a9a 0 1px,transparent 1px 2px);opacity:.7"></div>
<svg style="left:0px;top:105px;" width="32" height="820" viewBox="0 0 32 820"><defs>
<radialGradient id="lb" cx=".35" cy=".3" r=".8"><stop offset="0" stop-color="#f4f8ff"/><stop offset=".5" stop-color="#a9c4e0"/><stop offset="1" stop-color="#3a5a80"/></radialGradient>
<radialGradient id="ly" cx=".4" cy=".35" r=".7"><stop offset="0" stop-color="#fbf6cf"/><stop offset=".7" stop-color="#d8d3a0"/><stop offset="1" stop-color="#8a8660"/></radialGradient>
<radialGradient id="lg" cx=".4" cy=".3" r=".8"><stop offset="0" stop-color="#ffffff"/><stop offset=".5" stop-color="#a0a0a0"/><stop offset="1" stop-color="#505050"/></radialGradient>
<radialGradient id="lsun" cx=".4" cy=".35" r=".7"><stop offset="0" stop-color="#fff6a0"/><stop offset="1" stop-color="#e8b800"/></radialGradient>
<radialGradient id="lbb" cx=".35" cy=".3" r=".8"><stop offset="0" stop-color="#cfe6ff"/><stop offset=".5" stop-color="#3a8ee0"/><stop offset="1" stop-color="#0a3a7a"/></radialGradient>
<radialGradient id="lr" cx=".35" cy=".3" r=".8"><stop offset="0" stop-color="#ffb0a0"/><stop offset=".5" stop-color="#c02a20"/><stop offset="1" stop-color="#5a0a0a"/></radialGradient>
</defs><g transform="translate(16,21)"><path d="M-7 -3 Q-8 8 0 8 Q8 8 7 -3 Z" fill="url(#lb)"/><path d="M-11 -5 L-6 3" stroke="#cfe0f0" stroke-width="2.5"/><path d="M7 -2 Q11 -2 10 2 L6 6" stroke="#cfe0f0" stroke-width="2" fill="none"/><path d="M-6 -3 Q0 -8 6 -3 Z" fill="#dfeaf6"/><circle cx="0" cy="-7" r="1.5" fill="#dfeaf6"/><path d="M12 9 L12 14 L7 14 Z" fill="#ddd"/></g><g transform="translate(16,50)"><path d="M-8 6 Q-12 6 -11 1 Q-10 -2 -7 -2 Q-6 -8 0 -8 Q6 -8 6 -3 Q10 -4 10 1 Q11 6 6 6 Z" fill="none" stroke="#eee" stroke-width="2"/></g><g transform="translate(16,80)"><rect x="-10" y="-10" width="21" height="21" fill="#dfe3ea" stroke="#222" stroke-width="1"/><rect x="-8" y="-7" width="17" height="15" fill="#9db0c6"/><circle cx="0" cy="1" r="4.5" fill="url(#lr)"/></g><g transform="translate(16,109)"><rect x="-8" y="-11" width="17" height="22" fill="#cfcfcf" stroke="#222" stroke-width="1"/><rect x="-8" y="-11" width="17" height="3" fill="#3b6ab0"/><g fill="#555"><rect x="-6" y="-6" width="9" height="1.6"/><rect x="-6" y="-1" width="9" height="1.6"/><rect x="-6" y="4" width="9" height="1.6"/></g><g fill="#333"><circle cx="6" cy="-5" r="1.5"/><circle cx="6" cy="0" r="1.5"/><circle cx="6" cy="5" r="1.5"/></g></g><g transform="translate(16,138)"><rect x="-10" y="-10" width="21" height="21" fill="#cfcfcf" stroke="#222" stroke-width="1"/><rect x="-10" y="-10" width="21" height="3" fill="#3b6ab0"/><g fill="#444"><rect x="-8" y="-5" width="3" height="3"/><rect x="-3" y="-5" width="3" height="3"/><rect x="2" y="-5" width="3" height="3"/><rect x="6" y="-5" width="3" height="3"/><rect x="-8" y="2" width="16" height="1.4"/><rect x="-8" y="6" width="16" height="1.4"/></g></g><rect x="5" y="157" width="25" height="2" fill="#1e1e1e"/><rect x="5" y="190" width="25" height="2" fill="#1e1e1e"/><rect x="5" y="285" width="25" height="2" fill="#1e1e1e"/><rect x="5" y="497" width="25" height="2" fill="#1e1e1e"/><rect x="5" y="708" width="25" height="2" fill="#1e1e1e"/><rect x="5" y="801" width="25" height="2" fill="#1e1e1e"/><g transform="translate(16,174)"><circle cx="-3" cy="-3" r="7" fill="#f3eea0"/><rect x="-4" y="-2" width="17" height="9" fill="#9aa8b8" stroke="#222" stroke-width="1.2"/><g fill="#333"><rect x="-2" y="0" width="13" height="1.2"/><rect x="-2" y="3" width="13" height="1.2"/></g><path d="M-6 5 L-1 5 L-3.5 9 Z" fill="#888"/></g><g transform="translate(16,208)"><circle cx="-5" cy="-5" r="3.5" fill="none" stroke="#ddd" stroke-width="2"/><circle cx="2" cy="-6" r="3.5" fill="none" stroke="#ddd" stroke-width="2"/><rect x="-9" y="-2" width="13" height="7" fill="#ddd"/><path d="M5 2 L11 -3 V8 Z" fill="#aaa"/><path d="M-3 5 L-7 11 M-3 5 L1 11" stroke="#ccc" stroke-width="1.2"/></g><g transform="translate(16,240)"><path d="M0 -10 A10 10 0 0 1 0 10 Z" fill="#999" stroke="#ddd" stroke-width="1"/><path d="M0 -10 A5 10 0 0 0 0 10" fill="#ccc"/><circle cx="-7" cy="0" r="4" fill="#5a8ab8"/><circle cx="-9" cy="-3" r="2" fill="#cde"/></g><g transform="translate(16,268)"><circle cx="-5" cy="-4" r="4.5" fill="url(#lr)"/><circle cx="3" cy="-5" r="4.5" fill="url(#lr)"/><rect x="-10" y="-1" width="15" height="8" fill="#e8e8e8" stroke="#b02020" stroke-width="1.5"/><path d="M5 3 L11 -1 V8 Z" fill="#c03030"/><rect x="-6" y="1" width="7" height="3" fill="#3cb0a0"/></g><g transform="translate(16,306)"><rect x="-10" y="-8" width="21" height="16" rx="3" fill="#3a3a30" stroke="#e8e4b0" stroke-width="1.8" opacity=".9"/><rect x="-7" y="-5" width="15" height="10" fill="#f2eeb0"/></g><g transform="translate(15,336)"><path d="M-11 6 Q-11 -9 0 -9 Q11 -9 11 6 Q0 9 -11 6 Z" fill="url(#ly)"/></g><g transform="translate(16,364)"><circle cx="0" cy="0" r="9.5" fill="#5a5a48" opacity=".9"/><circle cx="0" cy="0" r="8" fill="none" stroke="#e8e4c0" stroke-width="1.6"/><circle cx="0" cy="0" r="6" fill="#f4f0c8"/></g><g transform="translate(16,392)"><path d="M-6 -5 Q-8 7 0 7 Q8 7 6 -5 Z" fill="none" stroke="#ddd" stroke-width="1.2"/><path d="M-10 -6 L-6 2 M6 -3 Q11 -5 10 -1 L6 4 M-3 -5 V6 M1 -5 V6 M-7 0 H7" stroke="#ccc" stroke-width="1" fill="none"/></g><g transform="translate(15,420)"><path d="M0 -11 Q-4 -2 -11 8 Q0 12 11 8 Q4 -2 0 -11 Z" fill="url(#lg)"/></g><g transform="translate(16,451)"><g stroke="#e8b800" stroke-width="1.8"><path d="M8.0 0.0 L11.5 0.0"/><path d="M5.7 5.7 L8.1 8.1"/><path d="M0.0 8.0 L0.0 11.5"/><path d="M-5.7 5.7 L-8.1 8.1"/><path d="M-8.0 0.0 L-11.5 0.0"/><path d="M-5.7 -5.6 L-8.1 -8.1"/><path d="M-0.0 -8.0 L-0.0 -11.5"/><path d="M5.6 -5.7 L8.1 -8.2"/></g><circle r="7" fill="url(#lsun)"/></g><g transform="translate(15,480)"><circle r="9.5" fill="url(#ly)" stroke="#eee8b8" stroke-width="1"/></g><g transform="translate(16,515)"><circle cx="-9" cy="-7" r="1.9" fill="#8fb0d0"/><circle cx="-7" cy="-3" r="1.9" fill="#8fb0d0"/><circle cx="-5" cy="1" r="1.9" fill="#8fb0d0"/><circle cx="-3" cy="5" r="1.9" fill="#8fb0d0"/><circle cx="-4" cy="-7" r="1.9" fill="#8fb0d0"/><circle cx="-2" cy="-3" r="1.9" fill="#8fb0d0"/><circle cx="0" cy="1" r="1.9" fill="#8fb0d0"/><circle cx="2" cy="5" r="1.9" fill="#8fb0d0"/><circle cx="1" cy="-7" r="1.9" fill="#8fb0d0"/><circle cx="3" cy="-3" r="1.9" fill="#8fb0d0"/><circle cx="5" cy="1" r="1.9" fill="#8fb0d0"/><circle cx="7" cy="5" r="1.9" fill="#8fb0d0"/><circle cx="6" cy="-7" r="1.9" fill="#8fb0d0"/><circle cx="8" cy="-3" r="1.9" fill="#8fb0d0"/><circle cx="10" cy="1" r="1.9" fill="#8fb0d0"/><circle cx="12" cy="5" r="1.9" fill="#8fb0d0"/></g><g transform="translate(16,545)"><path d="M-5 4 L5 -4" stroke="#bbb" stroke-width="3"/><circle cx="5" cy="-4" r="5.5" fill="url(#lr)"/><circle cx="-5" cy="4" r="6" fill="url(#lb)"/></g><g transform="translate(16,575)"><path d="M-10 8 H10 L7 -1 H-7 Z M-10 8 L7 -1 M10 8 L-7 -1 M0 -1 V-10 M-3 -7 L0 -10 L3 -7" fill="none" stroke="#dde4ec" stroke-width="1.4"/></g><g transform="translate(16,605)"><circle r="9" fill="#6a9ac8"/><circle cx="7.0" cy="0.0" r="3" fill="#8ab8e0"/><circle cx="5.4" cy="4.5" r="3" fill="#8ab8e0"/><circle cx="1.2" cy="6.9" r="3" fill="#8ab8e0"/><circle cx="-3.5" cy="6.0" r="3" fill="#8ab8e0"/><circle cx="-6.6" cy="2.3" r="3" fill="#8ab8e0"/><circle cx="-6.6" cy="-2.5" r="3" fill="#8ab8e0"/><circle cx="-3.4" cy="-6.1" r="3" fill="#8ab8e0"/><circle cx="1.3" cy="-6.9" r="3" fill="#8ab8e0"/><circle cx="5.4" cy="-4.4" r="3" fill="#8ab8e0"/><circle r="4" fill="#a8c8e8"/></g><g transform="translate(16,634)"><path d="M-9 9 L-8 -4 L-4 4 L-3 -10 L0 3 L3 -9 L4 4 L9 -5 L9 9 Z" fill="#5aa830"/><path d="M-6 9 L-2 -3 L1 9 M3 9 L6 -2" stroke="#b8e070" stroke-width="1" fill="none"/></g><g transform="translate(16,663)"><path d="M-8 -8 Q6 -10 10 4 Q9 -2 2 -3 Q8 2 6 10 Q4 2 -4 -3 Z" fill="#c8a878"/><text x="-11" y="6" font-family="Liberation Sans" font-weight="bold" font-size="9" fill="#fff">HF</text></g><g transform="translate(16,692)"><circle r="9" fill="#b0905a"/><path d="M-6 -5 L6 5 M-5 3 L7 -6 M-2 -8 L3 8" stroke="#e0d0a0" stroke-width="1"/><text x="-12" y="6" font-family="Liberation Sans" font-weight="bold" font-size="9" fill="#fff">0x</text></g><g transform="translate(15,728)"><circle r="9.5" fill="url(#lb)" stroke="#223" stroke-width="1"/><path d="M12 9 L12 13 L8 13 Z" fill="#ddd"/></g><g transform="translate(16,756)"><rect x="-10" y="-9" width="14" height="15" fill="#eee" stroke="#222" stroke-width=".8"/><circle cx="-4" cy="-3" r="4" fill="url(#lb)"/><rect x="-8" y="1" width="9" height="4" fill="#8fa8c0"/><rect x="-1" y="2" width="9" height="9" fill="#f3f0e8" stroke="#222" stroke-width=".8"/><circle cx="3.5" cy="6.5" r="2.5" fill="#e08030"/><path d="M5 -9 L9 -5 M5 -9 H8 M5 -9 V-6" stroke="#fff" stroke-width="1.4"/><path d="M12 9 L12 13 L8 13 Z" fill="#ddd"/></g><g transform="translate(16,785)"><rect x="-9" y="-10" width="18" height="18" fill="none" stroke="#c03030" stroke-width="1.6" stroke-dasharray="3 2"/><rect x="-1" y="-4" width="10" height="12" fill="#000"/><circle cx="-5" cy="4" r="6.5" fill="url(#lbb)"/></g><g transform="translate(15,813)"><rect x="-10" y="-2" width="20" height="5" fill="#3a7ad0"/><path d="M-8 -2 V0 M-5 -2 V0 M-2 -2 V0 M1 -2 V0 M4 -2 V0 M7 -2 V0" stroke="#fff" stroke-width="1"/></g></svg>
<svg style="left:1418px;top:155px;" width="30" height="24" viewBox="0 0 30 24"><path d="M15 4 V20 M7 12 H23" stroke="#f0f0f0" stroke-width="2.2"/></svg>
<svg style="left:1446px;top:155px;" width="30" height="24" viewBox="0 0 30 24"><rect x="8" y="4" width="14" height="15" fill="none" stroke="#3dbdb1" stroke-width="1.4" stroke-dasharray="2 2"/><g fill="#3dbdb1"><circle cx="8" cy="4" r="1.6"/><circle cx="22" cy="4" r="1.6"/><circle cx="8" cy="19" r="1.6"/><circle cx="22" cy="19" r="1.6"/></g><path d="M10 18 Q11 8 20 6" fill="none" stroke="#d8d8d8" stroke-width="2"/></svg>
<svg style="left:1477px;top:155px;" width="30" height="24" viewBox="0 0 30 24"><rect x="8" y="3" width="14" height="5" fill="#d8d8d8"/><path d="M15 8 V12 M8 12 H22 M8 12 V18 M22 12 V18 M15 12 V18" fill="none" stroke="#3dbdb1" stroke-width="1.4"/><g fill="#3dbdb1"><rect x="6" y="17" width="4" height="3"/><rect x="20" y="17" width="4" height="3"/></g></svg>
<svg style="left:1507px;top:155px;" width="30" height="24" viewBox="0 0 30 24"><path d="M9 5 A8 8 0 0 0 9 19" fill="none" stroke="#3dbdb1" stroke-width="1.4"/><path d="M11 4 A8.5 8.5 0 0 0 11 20" fill="none" stroke="#3dbdb1" stroke-width="1"/><circle cx="17" cy="12" r="6.5" fill="#bdbdbd"/></svg>
<svg style="left:1537px;top:155px;" width="30" height="24" viewBox="0 0 30 24"><rect x="7" y="5" width="16" height="10" fill="#c8c8c8"/><path d="M11 19 Q15 16 19 19" stroke="#c8c8c8" stroke-width="2" fill="none"/></svg>
<svg style="left:1567px;top:155px;" width="30" height="24" viewBox="0 0 30 24"><path d="M9 6 A4 4 0 0 0 13 11 L20 18" fill="none" stroke="#d8d8d8" stroke-width="2.4" stroke-linecap="round"/><path d="M8 5 L11 8" stroke="#3b3b3b" stroke-width="2"/></svg>
<svg style="left:1422px;top:185px;" width="19" height="19" viewBox="0 0 19 19"><circle cx="9.5" cy="9.5" r="7" fill="#e6e6e6" stroke="#3a4a66" stroke-width="1"/></svg>
<svg style="left:1443px;top:185px;" width="20" height="20" viewBox="0 0 20 20"><circle cx="7" cy="7" r="5.5" fill="none" stroke="#d8d8d8" stroke-width="1.8"/><rect x="7" y="7" width="10" height="10" fill="#d8d8d8"/><path d="M9 9 L15 15" stroke="#444" stroke-width="1"/></svg>
<svg style="left:1463px;top:185px;" width="18" height="20" viewBox="0 0 18 20"><path d="M9 1 A6 6 0 0 1 13 12 V14 H5 V12 A6 6 0 0 1 9 1 Z" fill="#d8d8d8"/><rect x="6" y="15" width="6" height="1.6" fill="#d8d8d8"/><rect x="6.5" y="17.5" width="5" height="1.4" fill="#d8d8d8"/></svg>
<svg style="left:1484px;top:185px;" width="20" height="20" viewBox="0 0 20 20"><rect x="2" y="5" width="11" height="10" fill="#d8d8d8"/><path d="M13 8 L18 5 V15 L13 12 Z" fill="#d8d8d8"/></svg>
<svg style="left:1504px;top:185px;" width="20" height="20" viewBox="0 0 20 20"><path d="M3 2 L18 17 H3 Z" fill="none" stroke="#d8d8d8" stroke-width="2.2"/><path d="M3 6 H6 M3 10 H6 M3 14 H6" stroke="#d8d8d8" stroke-width="1"/></svg>
<svg style="left:1525px;top:185px;" width="20" height="20" viewBox="0 0 20 20"><path d="M2 6 Q5 3 9 6 T17 5 M2 10 Q5 7 9 10 T17 9 M2 14 Q5 11 9 14 T17 13" fill="none" stroke="#d8d8d8" stroke-width="1.6"/></svg>
<svg style="left:1545px;top:185px;" width="20" height="20" viewBox="0 0 20 20"><circle cx="5.5" cy="5.5" r="3" fill="none" stroke="#d8d8d8" stroke-width="1.8"/><circle cx="12.5" cy="12.5" r="4.5" fill="none" stroke="#d8d8d8" stroke-width="2.8" stroke-dasharray="2.2 1.2"/><circle cx="12.5" cy="12.5" r="2" fill="none" stroke="#d8d8d8" stroke-width="1.2"/></svg>
<svg style="left:1587px;top:241px;" width="7" height="7" viewBox="0 0 7 7"><rect x="0.0" y="0.0" width="1.3" height="1.3" fill="#8a8a8a"/><rect x="0.0" y="2.4" width="1.3" height="1.3" fill="#8a8a8a"/><rect x="0.0" y="4.8" width="1.3" height="1.3" fill="#8a8a8a"/><rect x="2.4" y="0.0" width="1.3" height="1.3" fill="#8a8a8a"/><rect x="2.4" y="2.4" width="1.3" height="1.3" fill="#8a8a8a"/><rect x="2.4" y="4.8" width="1.3" height="1.3" fill="#8a8a8a"/><rect x="4.8" y="0.0" width="1.3" height="1.3" fill="#8a8a8a"/><rect x="4.8" y="2.4" width="1.3" height="1.3" fill="#8a8a8a"/><rect x="4.8" y="4.8" width="1.3" height="1.3" fill="#8a8a8a"/></svg>
<svg style="left:1587px;top:401px;" width="7" height="7" viewBox="0 0 7 7"><rect x="0.0" y="0.0" width="1.3" height="1.3" fill="#8a8a8a"/><rect x="0.0" y="2.4" width="1.3" height="1.3" fill="#8a8a8a"/><rect x="0.0" y="4.8" width="1.3" height="1.3" fill="#8a8a8a"/><rect x="2.4" y="0.0" width="1.3" height="1.3" fill="#8a8a8a"/><rect x="2.4" y="2.4" width="1.3" height="1.3" fill="#8a8a8a"/><rect x="2.4" y="4.8" width="1.3" height="1.3" fill="#8a8a8a"/><rect x="4.8" y="0.0" width="1.3" height="1.3" fill="#8a8a8a"/><rect x="4.8" y="2.4" width="1.3" height="1.3" fill="#8a8a8a"/><rect x="4.8" y="4.8" width="1.3" height="1.3" fill="#8a8a8a"/></svg>
<svg style="left:50px;top:902px;" width="22" height="18" viewBox="0 0 22 18"><path d="M2 3 V14" stroke="#ccc" stroke-width="2.4" stroke-dasharray="1.5 1"/><path d="M7 13 Q9 1 12 8 T17 5" fill="none" stroke="#3dbdb1" stroke-width="1.6"/></svg>
<svg style="left:958px;top:930px;" width="21" height="19" viewBox="0 0 21 19"><g fill="none" stroke="#fff" stroke-width="1.4"><path d="M3 6 V3 H6 M15 3 H18 V6 M18 13 V16 H15 M6 16 H3 V13"/></g><rect x="6.5" y="5.5" width="8" height="8" fill="#3dbdb1"/></svg>
<svg style="left:986px;top:931px;" width="14" height="18" viewBox="0 0 14 18"><rect x="2" y="8" width="10" height="9" rx="1" fill="#2c2c2c" stroke="#777" stroke-width="1"/><path d="M4 8 V5 A3 3 0 0 1 10 5 V8" fill="none" stroke="#777" stroke-width="1.6"/><rect x="6" y="11" width="2" height="3" fill="#777"/></svg>
<svg style="left:1010px;top:930px;" width="18" height="18" viewBox="0 0 18 18"><rect x="2" y="2" width="14" height="14" fill="none" stroke="#eee" stroke-width="1.6"/><path d="M9 4 L14 9 L9 14 L4 9 Z" fill="none" stroke="#eee" stroke-width="1.4"/><circle cx="9" cy="9" r="2" fill="#eee"/></svg>
<svg style="left:1249px;top:955px;" width="16" height="16" viewBox="0 0 16 16"><path d="M8 2 L14 5 V11 L8 14 L2 11 V5 Z M2 5 L8 8 L14 5 M8 8 V14" fill="none" stroke="#ddd" stroke-width="1.2"/></svg>
<svg style="left:1376px;top:933px;" width="110" height="16" viewBox="0 0 110 16"><g fill="#e8e8e8"><rect x="2" y="2" width="2" height="11"/><path d="M10 2 L5 7.5 L10 13 Z"/><path d="M15 2 L10 7.5 L15 13 Z"/><path d="M32 2 L27 7.5 L32 13 Z"/><rect x="34" y="2" width="2" height="11"/><rect x="38" y="2" width="2" height="11"/><path d="M50 1 L60 7.5 L50 14 Z"/><rect x="70" y="2" width="2" height="11"/><rect x="74" y="2" width="2" height="11"/><path d="M78 2 L83 7.5 L78 13 Z"/><path d="M95 2 L100 7.5 L95 13 Z"/><path d="M100 2 L105 7.5 L100 13 Z"/><rect x="106" y="2" width="2" height="11"/></g></svg>
<svg style="left:1437px;top:945px;" width="4" height="4" viewBox="0 0 4 4"><path d="M4 0 L4 4 L0 4 Z" fill="#e0e0e0"/></svg>
<svg style="left:1377px;top:954px;" width="16" height="12" viewBox="0 0 16 12"><path d="M1 6 L6 1 V11 Z M15 6 L10 1 V11 Z" fill="#ddd"/></svg>
<svg style="left:1454px;top:955px;" width="7" height="10" viewBox="0 0 7 10"><path d="M0 4 L3.5 0 L7 4 Z M0 6 L3.5 10 L7 6 Z" fill="#ccc"/></svg>
<svg style="left:1471px;top:952px;" width="18" height="18" viewBox="0 0 18 18"><circle cx="7" cy="7" r="6" fill="#ddd"/><path d="M7 3 V7 H10" stroke="#333" stroke-width="1.4" fill="none"/><circle cx="12" cy="12" r="4" fill="none" stroke="#f2b42a" stroke-width="2.2" stroke-dasharray="1.6 1"/></svg>
<svg style="left:1500px;top:930px;" width="37" height="39" viewBox="0 0 37 39"><path d="M18 5 V30 M6 17 H30" stroke="#eee" stroke-width="5"/><circle cx="28" cy="22" r="3.5" fill="none" stroke="#3dbdb1" stroke-width="2"/><path d="M25 25 L17 33 M19 31 L21 33 M21 29 L23 31" stroke="#3dbdb1" stroke-width="2"/></svg>
<svg style="left:1595px;top:951px;" width="20" height="20" viewBox="0 0 20 20"><path d="M4 17 Q3 7 7 4 M16 17 Q17 7 13 4" fill="none" stroke="#3dbdb1" stroke-width="1.8"/><rect x="8" y="2" width="4" height="4" fill="none" stroke="#ddd" stroke-width="1.2"/><circle cx="4" cy="4" r="1.2" fill="#ddd"/><circle cx="16" cy="4" r="1.2" fill="#ddd"/></svg>
<svg style="left:1613px;top:966px;" width="4" height="4" viewBox="0 0 4 4"><path d="M4 0 L4 4 L0 4 Z" fill="#e0e0e0"/></svg>
<svg style="left:1708px;top:930px;" width="20" height="18" viewBox="0 0 20 18"><rect x="1" y="6" width="4" height="4" fill="#3dbdb1"/><path d="M5 8 H9 M13 2 V16 M10 4 L13 1 L16 4 M10 14 L13 17 L16 14" stroke="#ddd" stroke-width="1.6" fill="none"/></svg>
<svg style="left:1722px;top:944px;" width="4" height="4" viewBox="0 0 4 4"><path d="M4 0 L4 4 L0 4 Z" fill="#e0e0e0"/></svg>
<svg style="left:1730px;top:930px;" width="20" height="18" viewBox="0 0 20 18"><path d="M3 8 Q9 1 16 8" fill="none" stroke="#ddd" stroke-width="1.6"/><path d="M6 9 V4 M9 9 V3 M12 9 V4" stroke="#ddd" stroke-width="1"/><rect x="6" y="9" width="10" height="7" fill="#f2b42a"/><rect x="3" y="10" width="3" height="4" fill="#ddd"/></svg>
<svg style="left:1744px;top:944px;" width="4" height="4" viewBox="0 0 4 4"><path d="M4 0 L4 4 L0 4 Z" fill="#e0e0e0"/></svg>
<svg style="left:1751px;top:930px;" width="20" height="18" viewBox="0 0 20 18"><path d="M5 13 A6 6 0 0 1 5 4 M15 4 A6 6 0 0 1 15 13" fill="none" stroke="#ddd" stroke-width="2"/><path d="M3 3 L7 3 L5 6 Z M17 13 L13 14 L15 11 Z" fill="#ddd"/><rect x="7" y="9" width="9" height="7" fill="#f2b42a"/></svg>
<svg style="left:1773px;top:930px;" width="22" height="18" viewBox="0 0 22 18"><path d="M2 10 L7 7 L12 10 L7 13 Z" fill="#ddd"/><path d="M11 5 L15 3 L19 5 V11 L15 13 L11 11 Z" fill="#3dbdb1"/></svg>
<svg style="left:1790px;top:944px;" width="4" height="4" viewBox="0 0 4 4"><path d="M4 0 L4 4 L0 4 Z" fill="#e0e0e0"/></svg>
<svg style="left:1708px;top:951px;" width="20" height="18" viewBox="0 0 20 18"><path d="M3 9 L15 3 M3 9 L15 15" stroke="#eee" stroke-width="1.8" fill="none"/></svg>
<svg style="left:1730px;top:951px;" width="20" height="18" viewBox="0 0 20 18"><rect x="6" y="2" width="8" height="6" fill="#ddd"/><path d="M15 3 L18 1 V8 L15 6 Z" fill="#ddd"/><path d="M2 16 L6 10 H14 L18 16 Z" fill="#3dbdb1"/></svg>
<svg style="left:1744px;top:966px;" width="4" height="4" viewBox="0 0 4 4"><path d="M4 0 L4 4 L0 4 Z" fill="#e0e0e0"/></svg>
<svg style="left:1751px;top:951px;" width="20" height="18" viewBox="0 0 20 18"><circle cx="9" cy="7" r="6" fill="#ddd"/><path d="M1 10 Q9 3 18 5" stroke="#444" stroke-width="1.2" fill="none"/><rect x="8" y="10" width="9" height="7" fill="#f2b42a"/><rect x="4" y="11" width="3" height="4" fill="#ddd"/></svg>
<svg style="left:1766px;top:966px;" width="4" height="4" viewBox="0 0 4 4"><path d="M4 0 L4 4 L0 4 Z" fill="#e0e0e0"/></svg>
<svg style="left:1774px;top:951px;" width="20" height="20" viewBox="0 0 20 20"><rect x="2" y="2" width="15" height="15" fill="#eee"/><rect x="3" y="10" width="6" height="6" fill="#222"/><path d="M8 11 L15 4 M11 4 H15 V8" stroke="#222" stroke-width="1.6" fill="none"/></svg>
</body></html>
